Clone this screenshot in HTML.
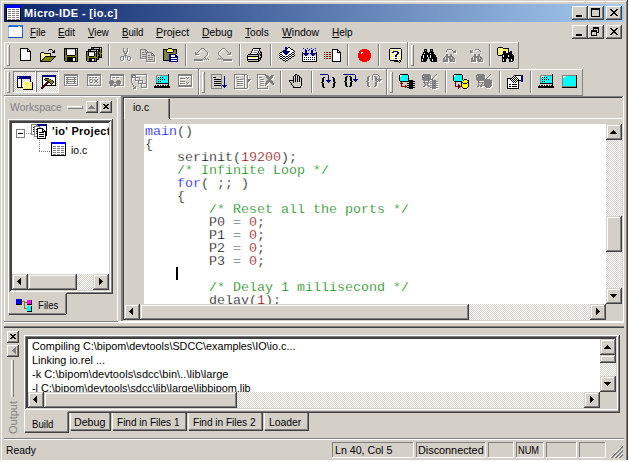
<!DOCTYPE html>
<html><head><meta charset="utf-8"><title>Micro-IDE - [io.c]</title>
<style>
html,body{margin:0;padding:0;background:#fff;}
#w{position:relative;width:629px;height:462px;overflow:hidden;background:#fff;}
#w div,#w span,#w svg,#w pre{position:absolute;margin:0;padding:0;}
.t,.tb{font:11px/13px "Liberation Sans", sans-serif;color:#000;white-space:pre;transform:translateY(-10px);}
.tb{font-weight:bold;}
.m{font:13.33px/13px "Liberation Mono", monospace;color:#000;white-space:pre;transform:translateY(-11px);-webkit-text-stroke:0.25px #fff;}
#w span span, #w pre span, #w span u{position:static;}
</style></head>
<body><div id="w">
<div style="left:0px;top:0px;width:628px;height:460px;background:#d4d0c8;"></div>
<div style="left:1px;top:1px;width:625px;height:1px;background:#ffffff;"></div>
<div style="left:1px;top:1px;width:1px;height:459px;background:#ffffff;"></div>
<div style="left:626px;top:1px;width:1px;height:459px;background:#808080;"></div>
<div style="left:627px;top:0px;width:1px;height:460px;background:#404040;"></div>
<div style="left:4px;top:4px;width:620px;height:18px;background:linear-gradient(90deg,#0a246a,#a6caf0);"></div>
<svg style="left:6px;top:5px" width="16" height="17" viewBox="0 0 16 17" shape-rendering="crispEdges"><rect x="0" y="0" width="15" height="1" fill="#0000ff"/><rect x="0" y="1" width="15" height="1" fill="#0000ff"/><rect x="0" y="2" width="15" height="1" fill="#0000ff"/><rect x="0" y="3" width="1" height="1" fill="#000000"/><rect x="1" y="3" width="13" height="1" fill="#ffffff"/><rect x="14" y="3" width="1" height="1" fill="#000000"/><rect x="0" y="4" width="1" height="1" fill="#000000"/><rect x="1" y="4" width="1" height="1" fill="#ffffff"/><rect x="2" y="4" width="3" height="1" fill="#808080"/><rect x="5" y="4" width="1" height="1" fill="#ffffff"/><rect x="6" y="4" width="3" height="1" fill="#808080"/><rect x="9" y="4" width="1" height="1" fill="#ffffff"/><rect x="10" y="4" width="3" height="1" fill="#808080"/><rect x="13" y="4" width="1" height="1" fill="#ffffff"/><rect x="14" y="4" width="1" height="1" fill="#000000"/><rect x="0" y="5" width="1" height="1" fill="#000000"/><rect x="1" y="5" width="13" height="1" fill="#ffffff"/><rect x="14" y="5" width="1" height="1" fill="#000000"/><rect x="0" y="6" width="1" height="1" fill="#000000"/><rect x="1" y="6" width="1" height="1" fill="#ffffff"/><rect x="2" y="6" width="3" height="1" fill="#808080"/><rect x="5" y="6" width="1" height="1" fill="#ffffff"/><rect x="6" y="6" width="3" height="1" fill="#808080"/><rect x="9" y="6" width="1" height="1" fill="#ffffff"/><rect x="10" y="6" width="3" height="1" fill="#808080"/><rect x="13" y="6" width="1" height="1" fill="#ffffff"/><rect x="14" y="6" width="1" height="1" fill="#000000"/><rect x="0" y="7" width="1" height="1" fill="#000000"/><rect x="1" y="7" width="13" height="1" fill="#ffffff"/><rect x="14" y="7" width="1" height="1" fill="#000000"/><rect x="0" y="8" width="1" height="1" fill="#000000"/><rect x="1" y="8" width="1" height="1" fill="#ffffff"/><rect x="2" y="8" width="3" height="1" fill="#808080"/><rect x="5" y="8" width="1" height="1" fill="#ffffff"/><rect x="6" y="8" width="3" height="1" fill="#808080"/><rect x="9" y="8" width="1" height="1" fill="#ffffff"/><rect x="10" y="8" width="3" height="1" fill="#808080"/><rect x="13" y="8" width="1" height="1" fill="#ffffff"/><rect x="14" y="8" width="1" height="1" fill="#000000"/><rect x="0" y="9" width="1" height="1" fill="#000000"/><rect x="1" y="9" width="13" height="1" fill="#ffffff"/><rect x="14" y="9" width="1" height="1" fill="#000000"/><rect x="0" y="10" width="1" height="1" fill="#000000"/><rect x="1" y="10" width="1" height="1" fill="#ffffff"/><rect x="2" y="10" width="3" height="1" fill="#808080"/><rect x="5" y="10" width="1" height="1" fill="#ffffff"/><rect x="6" y="10" width="3" height="1" fill="#808080"/><rect x="9" y="10" width="1" height="1" fill="#ffffff"/><rect x="10" y="10" width="3" height="1" fill="#808080"/><rect x="13" y="10" width="1" height="1" fill="#ffffff"/><rect x="14" y="10" width="1" height="1" fill="#000000"/><rect x="0" y="11" width="1" height="1" fill="#000000"/><rect x="1" y="11" width="13" height="1" fill="#ffffff"/><rect x="14" y="11" width="1" height="1" fill="#000000"/><rect x="0" y="12" width="1" height="1" fill="#000000"/><rect x="1" y="12" width="1" height="1" fill="#ffffff"/><rect x="2" y="12" width="3" height="1" fill="#808080"/><rect x="5" y="12" width="1" height="1" fill="#ffffff"/><rect x="6" y="12" width="3" height="1" fill="#808080"/><rect x="9" y="12" width="1" height="1" fill="#ffffff"/><rect x="10" y="12" width="3" height="1" fill="#808080"/><rect x="13" y="12" width="1" height="1" fill="#ffffff"/><rect x="14" y="12" width="1" height="1" fill="#000000"/><rect x="0" y="13" width="1" height="1" fill="#000000"/><rect x="1" y="13" width="13" height="1" fill="#ffffff"/><rect x="14" y="13" width="1" height="1" fill="#000000"/><rect x="0" y="14" width="1" height="1" fill="#000000"/><rect x="1" y="14" width="1" height="1" fill="#ffffff"/><rect x="2" y="14" width="3" height="1" fill="#808080"/><rect x="5" y="14" width="1" height="1" fill="#ffffff"/><rect x="6" y="14" width="3" height="1" fill="#808080"/><rect x="9" y="14" width="1" height="1" fill="#ffffff"/><rect x="10" y="14" width="3" height="1" fill="#808080"/><rect x="13" y="14" width="1" height="1" fill="#ffffff"/><rect x="14" y="14" width="1" height="1" fill="#000000"/><rect x="0" y="15" width="15" height="1" fill="#000000"/></svg>
<span class="tb" style="left:24px;top:17px;color:#ffffff;letter-spacing:0.353px;">Micro-IDE - [io.c]</span>
<div style="left:572px;top:6px;width:16px;height:14px;background:#d4d0c8;"></div>
<div style="left:572px;top:6px;width:15px;height:1px;background:#ffffff;"></div>
<div style="left:572px;top:6px;width:1px;height:13px;background:#ffffff;"></div>
<div style="left:572px;top:19px;width:16px;height:1px;background:#404040;"></div>
<div style="left:587px;top:6px;width:1px;height:14px;background:#404040;"></div>
<div style="left:573px;top:7px;width:13px;height:1px;background:#d4d0c8;"></div>
<div style="left:573px;top:7px;width:1px;height:11px;background:#d4d0c8;"></div>
<div style="left:573px;top:18px;width:14px;height:1px;background:#808080;"></div>
<div style="left:586px;top:7px;width:1px;height:12px;background:#808080;"></div>
<div style="left:576px;top:15px;width:6px;height:2px;background:#000000;"></div>
<div style="left:588px;top:6px;width:16px;height:14px;background:#d4d0c8;"></div>
<div style="left:588px;top:6px;width:15px;height:1px;background:#ffffff;"></div>
<div style="left:588px;top:6px;width:1px;height:13px;background:#ffffff;"></div>
<div style="left:588px;top:19px;width:16px;height:1px;background:#404040;"></div>
<div style="left:603px;top:6px;width:1px;height:14px;background:#404040;"></div>
<div style="left:589px;top:7px;width:13px;height:1px;background:#d4d0c8;"></div>
<div style="left:589px;top:7px;width:1px;height:11px;background:#d4d0c8;"></div>
<div style="left:589px;top:18px;width:14px;height:1px;background:#808080;"></div>
<div style="left:602px;top:7px;width:1px;height:12px;background:#808080;"></div>
<div style="left:591px;top:8px;width:9px;height:2px;background:#000000;"></div>
<div style="left:591px;top:10px;width:1px;height:7px;background:#000000;"></div>
<div style="left:599px;top:10px;width:1px;height:7px;background:#000000;"></div>
<div style="left:591px;top:16px;width:9px;height:1px;background:#000000;"></div>
<div style="left:606px;top:6px;width:16px;height:14px;background:#d4d0c8;"></div>
<div style="left:606px;top:6px;width:15px;height:1px;background:#ffffff;"></div>
<div style="left:606px;top:6px;width:1px;height:13px;background:#ffffff;"></div>
<div style="left:606px;top:19px;width:16px;height:1px;background:#404040;"></div>
<div style="left:621px;top:6px;width:1px;height:14px;background:#404040;"></div>
<div style="left:607px;top:7px;width:13px;height:1px;background:#d4d0c8;"></div>
<div style="left:607px;top:7px;width:1px;height:11px;background:#d4d0c8;"></div>
<div style="left:607px;top:18px;width:14px;height:1px;background:#808080;"></div>
<div style="left:620px;top:7px;width:1px;height:12px;background:#808080;"></div>
<div style="left:610px;top:9px;width:2px;height:1px;background:#000000;"></div>
<div style="left:616px;top:9px;width:2px;height:1px;background:#000000;"></div>
<div style="left:611px;top:10px;width:2px;height:1px;background:#000000;"></div>
<div style="left:615px;top:10px;width:2px;height:1px;background:#000000;"></div>
<div style="left:612px;top:11px;width:2px;height:1px;background:#000000;"></div>
<div style="left:614px;top:11px;width:2px;height:1px;background:#000000;"></div>
<div style="left:613px;top:12px;width:2px;height:1px;background:#000000;"></div>
<div style="left:613px;top:12px;width:2px;height:1px;background:#000000;"></div>
<div style="left:614px;top:13px;width:2px;height:1px;background:#000000;"></div>
<div style="left:612px;top:13px;width:2px;height:1px;background:#000000;"></div>
<div style="left:615px;top:14px;width:2px;height:1px;background:#000000;"></div>
<div style="left:611px;top:14px;width:2px;height:1px;background:#000000;"></div>
<div style="left:616px;top:15px;width:2px;height:1px;background:#000000;"></div>
<div style="left:610px;top:15px;width:2px;height:1px;background:#000000;"></div>
<div style="left:572px;top:25px;width:16px;height:14px;background:#d4d0c8;"></div>
<div style="left:572px;top:25px;width:15px;height:1px;background:#ffffff;"></div>
<div style="left:572px;top:25px;width:1px;height:13px;background:#ffffff;"></div>
<div style="left:572px;top:38px;width:16px;height:1px;background:#404040;"></div>
<div style="left:587px;top:25px;width:1px;height:14px;background:#404040;"></div>
<div style="left:573px;top:26px;width:13px;height:1px;background:#d4d0c8;"></div>
<div style="left:573px;top:26px;width:1px;height:11px;background:#d4d0c8;"></div>
<div style="left:573px;top:37px;width:14px;height:1px;background:#808080;"></div>
<div style="left:586px;top:26px;width:1px;height:12px;background:#808080;"></div>
<div style="left:576px;top:34px;width:6px;height:2px;background:#000000;"></div>
<div style="left:588px;top:25px;width:16px;height:14px;background:#d4d0c8;"></div>
<div style="left:588px;top:25px;width:15px;height:1px;background:#ffffff;"></div>
<div style="left:588px;top:25px;width:1px;height:13px;background:#ffffff;"></div>
<div style="left:588px;top:38px;width:16px;height:1px;background:#404040;"></div>
<div style="left:603px;top:25px;width:1px;height:14px;background:#404040;"></div>
<div style="left:589px;top:26px;width:13px;height:1px;background:#d4d0c8;"></div>
<div style="left:589px;top:26px;width:1px;height:11px;background:#d4d0c8;"></div>
<div style="left:589px;top:37px;width:14px;height:1px;background:#808080;"></div>
<div style="left:602px;top:26px;width:1px;height:12px;background:#808080;"></div>
<div style="left:593px;top:27px;width:6px;height:2px;background:#000000;"></div>
<div style="left:598px;top:29px;width:1px;height:4px;background:#000000;"></div>
<div style="left:597px;top:32px;width:2px;height:1px;background:#000000;"></div>
<div style="left:593px;top:29px;width:1px;height:1px;background:#000000;"></div>
<div style="left:591px;top:30px;width:6px;height:2px;background:#000000;"></div>
<div style="left:591px;top:32px;width:1px;height:4px;background:#000000;"></div>
<div style="left:596px;top:32px;width:1px;height:4px;background:#000000;"></div>
<div style="left:591px;top:35px;width:6px;height:1px;background:#000000;"></div>
<div style="left:606px;top:25px;width:16px;height:14px;background:#d4d0c8;"></div>
<div style="left:606px;top:25px;width:15px;height:1px;background:#ffffff;"></div>
<div style="left:606px;top:25px;width:1px;height:13px;background:#ffffff;"></div>
<div style="left:606px;top:38px;width:16px;height:1px;background:#404040;"></div>
<div style="left:621px;top:25px;width:1px;height:14px;background:#404040;"></div>
<div style="left:607px;top:26px;width:13px;height:1px;background:#d4d0c8;"></div>
<div style="left:607px;top:26px;width:1px;height:11px;background:#d4d0c8;"></div>
<div style="left:607px;top:37px;width:14px;height:1px;background:#808080;"></div>
<div style="left:620px;top:26px;width:1px;height:12px;background:#808080;"></div>
<div style="left:610px;top:28px;width:2px;height:1px;background:#000000;"></div>
<div style="left:616px;top:28px;width:2px;height:1px;background:#000000;"></div>
<div style="left:611px;top:29px;width:2px;height:1px;background:#000000;"></div>
<div style="left:615px;top:29px;width:2px;height:1px;background:#000000;"></div>
<div style="left:612px;top:30px;width:2px;height:1px;background:#000000;"></div>
<div style="left:614px;top:30px;width:2px;height:1px;background:#000000;"></div>
<div style="left:613px;top:31px;width:2px;height:1px;background:#000000;"></div>
<div style="left:613px;top:31px;width:2px;height:1px;background:#000000;"></div>
<div style="left:614px;top:32px;width:2px;height:1px;background:#000000;"></div>
<div style="left:612px;top:32px;width:2px;height:1px;background:#000000;"></div>
<div style="left:615px;top:33px;width:2px;height:1px;background:#000000;"></div>
<div style="left:611px;top:33px;width:2px;height:1px;background:#000000;"></div>
<div style="left:616px;top:34px;width:2px;height:1px;background:#000000;"></div>
<div style="left:610px;top:34px;width:2px;height:1px;background:#000000;"></div>
<svg style="left:8px;top:25px" width="16" height="14" viewBox="0 0 16 14" shape-rendering="crispEdges"><rect x="0" y="0" width="1" height="1" fill="#9dbdf2"/><rect x="1" y="0" width="13" height="1" fill="#3a7ce0"/><rect x="14" y="0" width="1" height="1" fill="#1c5fd8"/><rect x="0" y="1" width="10" height="1" fill="#1c5fd8"/><rect x="10" y="1" width="1" height="1" fill="#9dbdf2"/><rect x="11" y="1" width="1" height="1" fill="#ffffff"/><rect x="12" y="1" width="1" height="1" fill="#1c5fd8"/><rect x="13" y="1" width="1" height="1" fill="#f06030"/><rect x="14" y="1" width="1" height="1" fill="#1c5fd8"/><rect x="0" y="2" width="1" height="1" fill="#9dbdf2"/><rect x="1" y="2" width="13" height="1" fill="#ffffff"/><rect x="14" y="2" width="1" height="1" fill="#1c5fd8"/><rect x="0" y="3" width="1" height="1" fill="#9dbdf2"/><rect x="1" y="3" width="13" height="1" fill="#ffffff"/><rect x="14" y="3" width="1" height="1" fill="#1c5fd8"/><rect x="0" y="4" width="1" height="1" fill="#9dbdf2"/><rect x="1" y="4" width="13" height="1" fill="#ffffff"/><rect x="14" y="4" width="1" height="1" fill="#1c5fd8"/><rect x="0" y="5" width="1" height="1" fill="#9dbdf2"/><rect x="1" y="5" width="13" height="1" fill="#ffffff"/><rect x="14" y="5" width="1" height="1" fill="#1c5fd8"/><rect x="0" y="6" width="1" height="1" fill="#9dbdf2"/><rect x="1" y="6" width="13" height="1" fill="#ffffff"/><rect x="14" y="6" width="1" height="1" fill="#1c5fd8"/><rect x="0" y="7" width="1" height="1" fill="#9dbdf2"/><rect x="1" y="7" width="13" height="1" fill="#ffffff"/><rect x="14" y="7" width="1" height="1" fill="#1c5fd8"/><rect x="0" y="8" width="1" height="1" fill="#9dbdf2"/><rect x="1" y="8" width="13" height="1" fill="#ffffff"/><rect x="14" y="8" width="1" height="1" fill="#1c5fd8"/><rect x="0" y="9" width="1" height="1" fill="#9dbdf2"/><rect x="1" y="9" width="13" height="1" fill="#ffffff"/><rect x="14" y="9" width="1" height="1" fill="#2050b0"/><rect x="0" y="10" width="1" height="1" fill="#9dbdf2"/><rect x="1" y="10" width="13" height="1" fill="#ffffff"/><rect x="14" y="10" width="1" height="1" fill="#2050b0"/><rect x="0" y="11" width="1" height="1" fill="#9dbdf2"/><rect x="1" y="11" width="13" height="1" fill="#ffffff"/><rect x="14" y="11" width="1" height="1" fill="#2050b0"/><rect x="0" y="12" width="15" height="1" fill="#2050b0"/></svg>
<span class="t" style="left:30.0px;top:36px;transform:translateY(-10px) scaleX(0.8889);transform-origin:0 0;"><u>F</u>ile</span>
<span class="t" style="left:58.0px;top:36px;transform:translateY(-10px) scaleX(0.8947);transform-origin:0 0;"><u>E</u>dit</span>
<span class="t" style="left:88.0px;top:36px;transform:translateY(-10px) scaleX(0.875);transform-origin:0 0;"><u>V</u>iew</span>
<span class="t" style="left:122.0px;top:36px;transform:translateY(-10px) scaleX(0.875);transform-origin:0 0;"><u>B</u>uild</span>
<span class="t" style="left:156.0px;top:36px;transform:translateY(-10px) scaleX(0.9706);transform-origin:0 0;"><u>P</u>roject</span>
<span class="t" style="left:202.0px;top:36px;transform:translateY(-10px) scaleX(0.9375);transform-origin:0 0;"><u>D</u>ebug</span>
<span class="t" style="left:245.0px;top:36px;transform:translateY(-10px) scaleX(0.9231);transform-origin:0 0;"><u>T</u>ools</span>
<span class="t" style="left:282.0px;top:36px;transform:translateY(-10px) scaleX(0.9487);transform-origin:0 0;"><u>W</u>indow</span>
<span class="t" style="left:332.0px;top:36px;transform:translateY(-10px) scaleX(0.913);transform-origin:0 0;"><u>H</u>elp</span>
<div style="left:4px;top:42px;width:404px;height:1px;background:#ffffff;"></div>
<div style="left:4px;top:42px;width:1px;height:27px;background:#ffffff;"></div>
<div style="left:4px;top:68px;width:404px;height:1px;background:#808080;"></div>
<div style="left:407px;top:42px;width:1px;height:27px;background:#808080;"></div>
<div style="left:7px;top:45px;width:1px;height:21px;background:#ffffff;"></div>
<div style="left:7px;top:45px;width:2px;height:1px;background:#ffffff;"></div>
<div style="left:9px;top:45px;width:1px;height:21px;background:#808080;"></div>
<div style="left:7px;top:65px;width:3px;height:1px;background:#808080;"></div>
<svg style="left:20px;top:48px" width="12" height="14" viewBox="0 0 12 14" shape-rendering="crispEdges"><rect x="0" y="0" width="8" height="1" fill="#000000"/><rect x="0" y="1" width="1" height="1" fill="#000000"/><rect x="1" y="1" width="6" height="1" fill="#ffffff"/><rect x="7" y="1" width="2" height="1" fill="#000000"/><rect x="0" y="2" width="1" height="1" fill="#000000"/><rect x="1" y="2" width="6" height="1" fill="#ffffff"/><rect x="7" y="2" width="1" height="1" fill="#000000"/><rect x="8" y="2" width="1" height="1" fill="#ffffff"/><rect x="9" y="2" width="1" height="1" fill="#000000"/><rect x="0" y="3" width="1" height="1" fill="#000000"/><rect x="1" y="3" width="6" height="1" fill="#ffffff"/><rect x="7" y="3" width="4" height="1" fill="#000000"/><rect x="0" y="4" width="1" height="1" fill="#000000"/><rect x="1" y="4" width="9" height="1" fill="#ffffff"/><rect x="10" y="4" width="1" height="1" fill="#000000"/><rect x="0" y="5" width="1" height="1" fill="#000000"/><rect x="1" y="5" width="9" height="1" fill="#ffffff"/><rect x="10" y="5" width="1" height="1" fill="#000000"/><rect x="0" y="6" width="1" height="1" fill="#000000"/><rect x="1" y="6" width="9" height="1" fill="#ffffff"/><rect x="10" y="6" width="1" height="1" fill="#000000"/><rect x="0" y="7" width="1" height="1" fill="#000000"/><rect x="1" y="7" width="9" height="1" fill="#ffffff"/><rect x="10" y="7" width="1" height="1" fill="#000000"/><rect x="0" y="8" width="1" height="1" fill="#000000"/><rect x="1" y="8" width="9" height="1" fill="#ffffff"/><rect x="10" y="8" width="1" height="1" fill="#000000"/><rect x="0" y="9" width="1" height="1" fill="#000000"/><rect x="1" y="9" width="9" height="1" fill="#ffffff"/><rect x="10" y="9" width="1" height="1" fill="#000000"/><rect x="0" y="10" width="1" height="1" fill="#000000"/><rect x="1" y="10" width="9" height="1" fill="#ffffff"/><rect x="10" y="10" width="1" height="1" fill="#000000"/><rect x="0" y="11" width="1" height="1" fill="#000000"/><rect x="1" y="11" width="9" height="1" fill="#ffffff"/><rect x="10" y="11" width="1" height="1" fill="#000000"/><rect x="0" y="12" width="11" height="1" fill="#000000"/></svg>
<svg style="left:40px;top:49px" width="17" height="14" viewBox="0 0 17 14" shape-rendering="crispEdges"><rect x="9" y="0" width="3" height="1" fill="#000000"/><rect x="8" y="1" width="1" height="1" fill="#000000"/><rect x="12" y="1" width="1" height="1" fill="#000000"/><rect x="14" y="1" width="1" height="1" fill="#000000"/><rect x="13" y="2" width="2" height="1" fill="#000000"/><rect x="1" y="3" width="3" height="1" fill="#000000"/><rect x="12" y="3" width="3" height="1" fill="#000000"/><rect x="0" y="4" width="1" height="1" fill="#000000"/><rect x="1" y="4" width="1" height="1" fill="#ffffff"/><rect x="2" y="4" width="1" height="1" fill="#ffff00"/><rect x="3" y="4" width="1" height="1" fill="#ffffff"/><rect x="4" y="4" width="7" height="1" fill="#000000"/><rect x="0" y="5" width="1" height="1" fill="#000000"/><rect x="1" y="5" width="1" height="1" fill="#ffff00"/><rect x="2" y="5" width="1" height="1" fill="#ffffff"/><rect x="3" y="5" width="1" height="1" fill="#ffff00"/><rect x="4" y="5" width="1" height="1" fill="#ffffff"/><rect x="5" y="5" width="1" height="1" fill="#ffff00"/><rect x="6" y="5" width="1" height="1" fill="#ffffff"/><rect x="7" y="5" width="1" height="1" fill="#ffff00"/><rect x="8" y="5" width="1" height="1" fill="#ffffff"/><rect x="9" y="5" width="1" height="1" fill="#ffff00"/><rect x="10" y="5" width="1" height="1" fill="#000000"/><rect x="0" y="6" width="1" height="1" fill="#000000"/><rect x="1" y="6" width="1" height="1" fill="#ffffff"/><rect x="2" y="6" width="1" height="1" fill="#ffff00"/><rect x="3" y="6" width="1" height="1" fill="#ffffff"/><rect x="4" y="6" width="1" height="1" fill="#ffff00"/><rect x="5" y="6" width="1" height="1" fill="#ffffff"/><rect x="6" y="6" width="1" height="1" fill="#ffff00"/><rect x="7" y="6" width="1" height="1" fill="#ffffff"/><rect x="8" y="6" width="1" height="1" fill="#ffff00"/><rect x="9" y="6" width="1" height="1" fill="#ffffff"/><rect x="10" y="6" width="1" height="1" fill="#000000"/><rect x="0" y="7" width="1" height="1" fill="#000000"/><rect x="1" y="7" width="1" height="1" fill="#ffff00"/><rect x="2" y="7" width="1" height="1" fill="#ffffff"/><rect x="3" y="7" width="1" height="1" fill="#ffff00"/><rect x="4" y="7" width="1" height="1" fill="#ffffff"/><rect x="5" y="7" width="11" height="1" fill="#000000"/><rect x="0" y="8" width="1" height="1" fill="#000000"/><rect x="1" y="8" width="1" height="1" fill="#ffffff"/><rect x="2" y="8" width="1" height="1" fill="#ffff00"/><rect x="3" y="8" width="1" height="1" fill="#ffffff"/><rect x="4" y="8" width="1" height="1" fill="#000000"/><rect x="5" y="8" width="9" height="1" fill="#808000"/><rect x="14" y="8" width="1" height="1" fill="#000000"/><rect x="0" y="9" width="1" height="1" fill="#000000"/><rect x="1" y="9" width="1" height="1" fill="#ffff00"/><rect x="2" y="9" width="1" height="1" fill="#ffffff"/><rect x="3" y="9" width="1" height="1" fill="#000000"/><rect x="4" y="9" width="9" height="1" fill="#808000"/><rect x="13" y="9" width="1" height="1" fill="#000000"/><rect x="0" y="10" width="1" height="1" fill="#000000"/><rect x="1" y="10" width="1" height="1" fill="#ffffff"/><rect x="2" y="10" width="1" height="1" fill="#000000"/><rect x="3" y="10" width="9" height="1" fill="#808000"/><rect x="12" y="10" width="1" height="1" fill="#000000"/><rect x="0" y="11" width="2" height="1" fill="#000000"/><rect x="2" y="11" width="9" height="1" fill="#808000"/><rect x="11" y="11" width="1" height="1" fill="#000000"/><rect x="0" y="12" width="11" height="1" fill="#000000"/></svg>
<svg style="left:64px;top:48px" width="15" height="15" viewBox="0 0 15 15" shape-rendering="crispEdges"><rect x="0" y="0" width="14" height="1" fill="#000000"/><rect x="0" y="1" width="1" height="1" fill="#000000"/><rect x="1" y="1" width="1" height="1" fill="#808000"/><rect x="2" y="1" width="1" height="1" fill="#000000"/><rect x="3" y="1" width="8" height="1" fill="#c0c0c0"/><rect x="11" y="1" width="1" height="1" fill="#000000"/><rect x="12" y="1" width="1" height="1" fill="#ffffff"/><rect x="13" y="1" width="1" height="1" fill="#000000"/><rect x="0" y="2" width="1" height="1" fill="#000000"/><rect x="1" y="2" width="1" height="1" fill="#808000"/><rect x="2" y="2" width="1" height="1" fill="#000000"/><rect x="3" y="2" width="8" height="1" fill="#ffffff"/><rect x="11" y="2" width="1" height="1" fill="#000000"/><rect x="12" y="2" width="1" height="1" fill="#808000"/><rect x="13" y="2" width="1" height="1" fill="#000000"/><rect x="0" y="3" width="1" height="1" fill="#000000"/><rect x="1" y="3" width="1" height="1" fill="#808000"/><rect x="2" y="3" width="1" height="1" fill="#000000"/><rect x="3" y="3" width="8" height="1" fill="#ffffff"/><rect x="11" y="3" width="1" height="1" fill="#000000"/><rect x="12" y="3" width="1" height="1" fill="#808000"/><rect x="13" y="3" width="1" height="1" fill="#000000"/><rect x="0" y="4" width="1" height="1" fill="#000000"/><rect x="1" y="4" width="1" height="1" fill="#808000"/><rect x="2" y="4" width="1" height="1" fill="#000000"/><rect x="3" y="4" width="8" height="1" fill="#ffffff"/><rect x="11" y="4" width="1" height="1" fill="#000000"/><rect x="12" y="4" width="1" height="1" fill="#808000"/><rect x="13" y="4" width="1" height="1" fill="#000000"/><rect x="0" y="5" width="1" height="1" fill="#000000"/><rect x="1" y="5" width="1" height="1" fill="#808000"/><rect x="2" y="5" width="1" height="1" fill="#000000"/><rect x="3" y="5" width="8" height="1" fill="#ffffff"/><rect x="11" y="5" width="1" height="1" fill="#000000"/><rect x="12" y="5" width="1" height="1" fill="#808000"/><rect x="13" y="5" width="1" height="1" fill="#000000"/><rect x="0" y="6" width="1" height="1" fill="#000000"/><rect x="1" y="6" width="1" height="1" fill="#808000"/><rect x="2" y="6" width="1" height="1" fill="#000000"/><rect x="3" y="6" width="8" height="1" fill="#ffffff"/><rect x="11" y="6" width="1" height="1" fill="#000000"/><rect x="12" y="6" width="1" height="1" fill="#808000"/><rect x="13" y="6" width="1" height="1" fill="#000000"/><rect x="0" y="7" width="1" height="1" fill="#000000"/><rect x="1" y="7" width="2" height="1" fill="#808000"/><rect x="3" y="7" width="8" height="1" fill="#000000"/><rect x="11" y="7" width="2" height="1" fill="#808000"/><rect x="13" y="7" width="1" height="1" fill="#000000"/><rect x="0" y="8" width="1" height="1" fill="#000000"/><rect x="1" y="8" width="12" height="1" fill="#808000"/><rect x="13" y="8" width="1" height="1" fill="#000000"/><rect x="0" y="9" width="1" height="1" fill="#000000"/><rect x="1" y="9" width="2" height="1" fill="#808000"/><rect x="3" y="9" width="9" height="1" fill="#000000"/><rect x="12" y="9" width="1" height="1" fill="#808000"/><rect x="13" y="9" width="1" height="1" fill="#000000"/><rect x="0" y="10" width="1" height="1" fill="#000000"/><rect x="1" y="10" width="2" height="1" fill="#808000"/><rect x="3" y="10" width="6" height="1" fill="#000000"/><rect x="9" y="10" width="2" height="1" fill="#ffffff"/><rect x="11" y="10" width="1" height="1" fill="#000000"/><rect x="12" y="10" width="1" height="1" fill="#808000"/><rect x="13" y="10" width="1" height="1" fill="#000000"/><rect x="0" y="11" width="1" height="1" fill="#000000"/><rect x="1" y="11" width="2" height="1" fill="#808000"/><rect x="3" y="11" width="6" height="1" fill="#000000"/><rect x="9" y="11" width="2" height="1" fill="#ffffff"/><rect x="11" y="11" width="1" height="1" fill="#000000"/><rect x="12" y="11" width="1" height="1" fill="#808000"/><rect x="13" y="11" width="1" height="1" fill="#000000"/><rect x="0" y="12" width="1" height="1" fill="#000000"/><rect x="1" y="12" width="2" height="1" fill="#808000"/><rect x="3" y="12" width="6" height="1" fill="#000000"/><rect x="9" y="12" width="2" height="1" fill="#ffffff"/><rect x="11" y="12" width="1" height="1" fill="#000000"/><rect x="12" y="12" width="1" height="1" fill="#808000"/><rect x="13" y="12" width="1" height="1" fill="#000000"/><rect x="1" y="13" width="13" height="1" fill="#000000"/></svg>
<svg style="left:86px;top:47px" width="17" height="16" viewBox="0 0 17 16" shape-rendering="crispEdges"><rect x="5" y="0" width="11" height="1" fill="#000000"/><rect x="5" y="1" width="1" height="1" fill="#000000"/><rect x="6" y="1" width="1" height="1" fill="#808000"/><rect x="7" y="1" width="1" height="1" fill="#000000"/><rect x="8" y="1" width="5" height="1" fill="#c0c0c0"/><rect x="13" y="1" width="1" height="1" fill="#000000"/><rect x="14" y="1" width="1" height="1" fill="#ffffff"/><rect x="15" y="1" width="1" height="1" fill="#000000"/><rect x="2" y="2" width="12" height="1" fill="#000000"/><rect x="14" y="2" width="1" height="1" fill="#808000"/><rect x="15" y="2" width="1" height="1" fill="#000000"/><rect x="2" y="3" width="1" height="1" fill="#000000"/><rect x="3" y="3" width="1" height="1" fill="#808000"/><rect x="4" y="3" width="1" height="1" fill="#000000"/><rect x="5" y="3" width="5" height="1" fill="#c0c0c0"/><rect x="10" y="3" width="1" height="1" fill="#000000"/><rect x="11" y="3" width="1" height="1" fill="#ffffff"/><rect x="12" y="3" width="2" height="1" fill="#000000"/><rect x="14" y="3" width="1" height="1" fill="#808000"/><rect x="15" y="3" width="1" height="1" fill="#000000"/><rect x="0" y="4" width="11" height="1" fill="#000000"/><rect x="11" y="4" width="1" height="1" fill="#808000"/><rect x="12" y="4" width="2" height="1" fill="#000000"/><rect x="14" y="4" width="1" height="1" fill="#808000"/><rect x="15" y="4" width="1" height="1" fill="#000000"/><rect x="0" y="5" width="1" height="1" fill="#000000"/><rect x="1" y="5" width="1" height="1" fill="#808000"/><rect x="2" y="5" width="1" height="1" fill="#000000"/><rect x="3" y="5" width="5" height="1" fill="#c0c0c0"/><rect x="8" y="5" width="1" height="1" fill="#000000"/><rect x="9" y="5" width="1" height="1" fill="#ffffff"/><rect x="10" y="5" width="1" height="1" fill="#000000"/><rect x="11" y="5" width="1" height="1" fill="#808000"/><rect x="12" y="5" width="1" height="1" fill="#000000"/><rect x="13" y="5" width="2" height="1" fill="#808000"/><rect x="15" y="5" width="1" height="1" fill="#000000"/><rect x="0" y="6" width="1" height="1" fill="#000000"/><rect x="1" y="6" width="1" height="1" fill="#808000"/><rect x="2" y="6" width="1" height="1" fill="#000000"/><rect x="3" y="6" width="5" height="1" fill="#ffffff"/><rect x="8" y="6" width="1" height="1" fill="#000000"/><rect x="9" y="6" width="1" height="1" fill="#808000"/><rect x="10" y="6" width="1" height="1" fill="#000000"/><rect x="11" y="6" width="1" height="1" fill="#808000"/><rect x="12" y="6" width="1" height="1" fill="#000000"/><rect x="13" y="6" width="3" height="1" fill="#808000"/><rect x="0" y="7" width="1" height="1" fill="#000000"/><rect x="1" y="7" width="1" height="1" fill="#808000"/><rect x="2" y="7" width="1" height="1" fill="#000000"/><rect x="3" y="7" width="5" height="1" fill="#ffffff"/><rect x="8" y="7" width="1" height="1" fill="#000000"/><rect x="9" y="7" width="1" height="1" fill="#808000"/><rect x="10" y="7" width="1" height="1" fill="#000000"/><rect x="11" y="7" width="1" height="1" fill="#808000"/><rect x="12" y="7" width="2" height="1" fill="#000000"/><rect x="14" y="7" width="1" height="1" fill="#808000"/><rect x="15" y="7" width="1" height="1" fill="#000000"/><rect x="0" y="8" width="1" height="1" fill="#000000"/><rect x="1" y="8" width="1" height="1" fill="#808000"/><rect x="2" y="8" width="1" height="1" fill="#000000"/><rect x="3" y="8" width="5" height="1" fill="#ffffff"/><rect x="8" y="8" width="1" height="1" fill="#000000"/><rect x="9" y="8" width="1" height="1" fill="#808000"/><rect x="10" y="8" width="1" height="1" fill="#000000"/><rect x="11" y="8" width="2" height="1" fill="#808000"/><rect x="13" y="8" width="1" height="1" fill="#000000"/><rect x="14" y="8" width="1" height="1" fill="#808000"/><rect x="15" y="8" width="1" height="1" fill="#000000"/><rect x="0" y="9" width="1" height="1" fill="#000000"/><rect x="1" y="9" width="2" height="1" fill="#808000"/><rect x="3" y="9" width="5" height="1" fill="#000000"/><rect x="8" y="9" width="2" height="1" fill="#808000"/><rect x="10" y="9" width="1" height="1" fill="#000000"/><rect x="11" y="9" width="1" height="1" fill="#808000"/><rect x="12" y="9" width="2" height="1" fill="#000000"/><rect x="14" y="9" width="1" height="1" fill="#808000"/><rect x="15" y="9" width="1" height="1" fill="#000000"/><rect x="0" y="10" width="1" height="1" fill="#000000"/><rect x="1" y="10" width="11" height="1" fill="#808000"/><rect x="12" y="10" width="4" height="1" fill="#000000"/><rect x="0" y="11" width="1" height="1" fill="#000000"/><rect x="1" y="11" width="2" height="1" fill="#808000"/><rect x="3" y="11" width="6" height="1" fill="#000000"/><rect x="9" y="11" width="1" height="1" fill="#808000"/><rect x="10" y="11" width="1" height="1" fill="#000000"/><rect x="11" y="11" width="1" height="1" fill="#808000"/><rect x="12" y="11" width="1" height="1" fill="#000000"/><rect x="0" y="12" width="1" height="1" fill="#000000"/><rect x="1" y="12" width="2" height="1" fill="#808000"/><rect x="3" y="12" width="3" height="1" fill="#000000"/><rect x="6" y="12" width="2" height="1" fill="#ffffff"/><rect x="8" y="12" width="1" height="1" fill="#000000"/><rect x="9" y="12" width="1" height="1" fill="#808000"/><rect x="10" y="12" width="3" height="1" fill="#000000"/><rect x="0" y="13" width="1" height="1" fill="#000000"/><rect x="1" y="13" width="2" height="1" fill="#808000"/><rect x="3" y="13" width="3" height="1" fill="#000000"/><rect x="6" y="13" width="2" height="1" fill="#ffffff"/><rect x="8" y="13" width="1" height="1" fill="#000000"/><rect x="9" y="13" width="1" height="1" fill="#808000"/><rect x="10" y="13" width="1" height="1" fill="#000000"/><rect x="1" y="14" width="10" height="1" fill="#000000"/></svg>
<div style="left:108px;top:44px;width:1px;height:22px;background:#808080;"></div>
<div style="left:109px;top:44px;width:1px;height:22px;background:#ffffff;"></div>
<svg style="left:120px;top:48px" width="12" height="14" viewBox="0 0 12 14" shape-rendering="crispEdges"><rect x="4" y="1" width="1" height="1" fill="#ffffff"/><rect x="8" y="1" width="1" height="1" fill="#ffffff"/><rect x="4" y="2" width="1" height="1" fill="#ffffff"/><rect x="8" y="2" width="1" height="1" fill="#ffffff"/><rect x="4" y="3" width="1" height="1" fill="#ffffff"/><rect x="8" y="3" width="1" height="1" fill="#ffffff"/><rect x="4" y="4" width="2" height="1" fill="#ffffff"/><rect x="7" y="4" width="2" height="1" fill="#ffffff"/><rect x="5" y="5" width="1" height="1" fill="#ffffff"/><rect x="7" y="5" width="1" height="1" fill="#ffffff"/><rect x="5" y="6" width="3" height="1" fill="#ffffff"/><rect x="6" y="7" width="1" height="1" fill="#ffffff"/><rect x="5" y="8" width="3" height="1" fill="#ffffff"/><rect x="2" y="9" width="3" height="1" fill="#ffffff"/><rect x="6" y="9" width="1" height="1" fill="#ffffff"/><rect x="8" y="9" width="3" height="1" fill="#ffffff"/><rect x="1" y="10" width="1" height="1" fill="#ffffff"/><rect x="4" y="10" width="1" height="1" fill="#ffffff"/><rect x="6" y="10" width="1" height="1" fill="#ffffff"/><rect x="8" y="10" width="1" height="1" fill="#ffffff"/><rect x="11" y="10" width="1" height="1" fill="#ffffff"/><rect x="1" y="11" width="1" height="1" fill="#ffffff"/><rect x="4" y="11" width="1" height="1" fill="#ffffff"/><rect x="8" y="11" width="1" height="1" fill="#ffffff"/><rect x="11" y="11" width="1" height="1" fill="#ffffff"/><rect x="1" y="12" width="1" height="1" fill="#ffffff"/><rect x="4" y="12" width="1" height="1" fill="#ffffff"/><rect x="8" y="12" width="1" height="1" fill="#ffffff"/><rect x="11" y="12" width="1" height="1" fill="#ffffff"/><rect x="2" y="13" width="2" height="1" fill="#ffffff"/><rect x="9" y="13" width="2" height="1" fill="#ffffff"/><rect x="3" y="0" width="1" height="1" fill="#808080"/><rect x="7" y="0" width="1" height="1" fill="#808080"/><rect x="3" y="1" width="1" height="1" fill="#808080"/><rect x="7" y="1" width="1" height="1" fill="#808080"/><rect x="3" y="2" width="1" height="1" fill="#808080"/><rect x="7" y="2" width="1" height="1" fill="#808080"/><rect x="3" y="3" width="2" height="1" fill="#808080"/><rect x="6" y="3" width="2" height="1" fill="#808080"/><rect x="4" y="4" width="1" height="1" fill="#808080"/><rect x="6" y="4" width="1" height="1" fill="#808080"/><rect x="4" y="5" width="3" height="1" fill="#808080"/><rect x="5" y="6" width="1" height="1" fill="#808080"/><rect x="4" y="7" width="3" height="1" fill="#808080"/><rect x="1" y="8" width="3" height="1" fill="#808080"/><rect x="5" y="8" width="1" height="1" fill="#808080"/><rect x="7" y="8" width="3" height="1" fill="#808080"/><rect x="0" y="9" width="1" height="1" fill="#808080"/><rect x="3" y="9" width="1" height="1" fill="#808080"/><rect x="5" y="9" width="1" height="1" fill="#808080"/><rect x="7" y="9" width="1" height="1" fill="#808080"/><rect x="10" y="9" width="1" height="1" fill="#808080"/><rect x="0" y="10" width="1" height="1" fill="#808080"/><rect x="3" y="10" width="1" height="1" fill="#808080"/><rect x="7" y="10" width="1" height="1" fill="#808080"/><rect x="10" y="10" width="1" height="1" fill="#808080"/><rect x="0" y="11" width="1" height="1" fill="#808080"/><rect x="3" y="11" width="1" height="1" fill="#808080"/><rect x="7" y="11" width="1" height="1" fill="#808080"/><rect x="10" y="11" width="1" height="1" fill="#808080"/><rect x="1" y="12" width="2" height="1" fill="#808080"/><rect x="8" y="12" width="2" height="1" fill="#808080"/></svg>
<svg style="left:140px;top:49px" width="16" height="14" viewBox="0 0 16 14" shape-rendering="crispEdges"><rect x="1" y="1" width="6" height="1" fill="#ffffff"/><rect x="1" y="2" width="1" height="1" fill="#ffffff"/><rect x="6" y="2" width="2" height="1" fill="#ffffff"/><rect x="1" y="3" width="1" height="1" fill="#ffffff"/><rect x="6" y="3" width="1" height="1" fill="#ffffff"/><rect x="8" y="3" width="1" height="1" fill="#ffffff"/><rect x="1" y="4" width="1" height="1" fill="#ffffff"/><rect x="3" y="4" width="2" height="1" fill="#ffffff"/><rect x="6" y="4" width="7" height="1" fill="#ffffff"/><rect x="1" y="5" width="1" height="1" fill="#ffffff"/><rect x="7" y="5" width="1" height="1" fill="#ffffff"/><rect x="12" y="5" width="2" height="1" fill="#ffffff"/><rect x="1" y="6" width="1" height="1" fill="#ffffff"/><rect x="3" y="6" width="5" height="1" fill="#ffffff"/><rect x="12" y="6" width="1" height="1" fill="#ffffff"/><rect x="14" y="6" width="1" height="1" fill="#ffffff"/><rect x="1" y="7" width="1" height="1" fill="#ffffff"/><rect x="7" y="7" width="1" height="1" fill="#ffffff"/><rect x="9" y="7" width="2" height="1" fill="#ffffff"/><rect x="12" y="7" width="4" height="1" fill="#ffffff"/><rect x="1" y="8" width="1" height="1" fill="#ffffff"/><rect x="3" y="8" width="5" height="1" fill="#ffffff"/><rect x="15" y="8" width="1" height="1" fill="#ffffff"/><rect x="1" y="9" width="1" height="1" fill="#ffffff"/><rect x="7" y="9" width="1" height="1" fill="#ffffff"/><rect x="9" y="9" width="5" height="1" fill="#ffffff"/><rect x="15" y="9" width="1" height="1" fill="#ffffff"/><rect x="1" y="10" width="7" height="1" fill="#ffffff"/><rect x="15" y="10" width="1" height="1" fill="#ffffff"/><rect x="7" y="11" width="1" height="1" fill="#ffffff"/><rect x="9" y="11" width="5" height="1" fill="#ffffff"/><rect x="15" y="11" width="1" height="1" fill="#ffffff"/><rect x="7" y="12" width="1" height="1" fill="#ffffff"/><rect x="15" y="12" width="1" height="1" fill="#ffffff"/><rect x="7" y="13" width="9" height="1" fill="#ffffff"/><rect x="0" y="0" width="6" height="1" fill="#808080"/><rect x="0" y="1" width="1" height="1" fill="#808080"/><rect x="1" y="1" width="4" height="1" fill="#d4d0c8"/><rect x="5" y="1" width="2" height="1" fill="#808080"/><rect x="0" y="2" width="1" height="1" fill="#808080"/><rect x="1" y="2" width="4" height="1" fill="#d4d0c8"/><rect x="5" y="2" width="1" height="1" fill="#808080"/><rect x="6" y="2" width="1" height="1" fill="#d4d0c8"/><rect x="7" y="2" width="1" height="1" fill="#808080"/><rect x="0" y="3" width="1" height="1" fill="#808080"/><rect x="1" y="3" width="1" height="1" fill="#d4d0c8"/><rect x="2" y="3" width="2" height="1" fill="#808080"/><rect x="4" y="3" width="1" height="1" fill="#d4d0c8"/><rect x="5" y="3" width="7" height="1" fill="#808080"/><rect x="0" y="4" width="1" height="1" fill="#808080"/><rect x="1" y="4" width="5" height="1" fill="#d4d0c8"/><rect x="6" y="4" width="1" height="1" fill="#808080"/><rect x="7" y="4" width="4" height="1" fill="#d4d0c8"/><rect x="11" y="4" width="2" height="1" fill="#808080"/><rect x="0" y="5" width="1" height="1" fill="#808080"/><rect x="1" y="5" width="1" height="1" fill="#d4d0c8"/><rect x="2" y="5" width="5" height="1" fill="#808080"/><rect x="7" y="5" width="4" height="1" fill="#d4d0c8"/><rect x="11" y="5" width="1" height="1" fill="#808080"/><rect x="12" y="5" width="1" height="1" fill="#d4d0c8"/><rect x="13" y="5" width="1" height="1" fill="#808080"/><rect x="0" y="6" width="1" height="1" fill="#808080"/><rect x="1" y="6" width="5" height="1" fill="#d4d0c8"/><rect x="6" y="6" width="1" height="1" fill="#808080"/><rect x="7" y="6" width="1" height="1" fill="#d4d0c8"/><rect x="8" y="6" width="2" height="1" fill="#808080"/><rect x="10" y="6" width="1" height="1" fill="#d4d0c8"/><rect x="11" y="6" width="4" height="1" fill="#808080"/><rect x="0" y="7" width="1" height="1" fill="#808080"/><rect x="1" y="7" width="1" height="1" fill="#d4d0c8"/><rect x="2" y="7" width="5" height="1" fill="#808080"/><rect x="7" y="7" width="7" height="1" fill="#d4d0c8"/><rect x="14" y="7" width="1" height="1" fill="#808080"/><rect x="0" y="8" width="1" height="1" fill="#808080"/><rect x="1" y="8" width="5" height="1" fill="#d4d0c8"/><rect x="6" y="8" width="1" height="1" fill="#808080"/><rect x="7" y="8" width="1" height="1" fill="#d4d0c8"/><rect x="8" y="8" width="5" height="1" fill="#808080"/><rect x="13" y="8" width="1" height="1" fill="#d4d0c8"/><rect x="14" y="8" width="1" height="1" fill="#808080"/><rect x="0" y="9" width="7" height="1" fill="#808080"/><rect x="7" y="9" width="7" height="1" fill="#d4d0c8"/><rect x="14" y="9" width="1" height="1" fill="#808080"/><rect x="6" y="10" width="1" height="1" fill="#808080"/><rect x="7" y="10" width="1" height="1" fill="#d4d0c8"/><rect x="8" y="10" width="5" height="1" fill="#808080"/><rect x="13" y="10" width="1" height="1" fill="#d4d0c8"/><rect x="14" y="10" width="1" height="1" fill="#808080"/><rect x="6" y="11" width="1" height="1" fill="#808080"/><rect x="7" y="11" width="7" height="1" fill="#d4d0c8"/><rect x="14" y="11" width="1" height="1" fill="#808080"/><rect x="6" y="12" width="9" height="1" fill="#808080"/></svg>
<svg style="left:163px;top:48px" width="16" height="15" viewBox="0 0 16 15" shape-rendering="crispEdges"><rect x="5" y="0" width="4" height="1" fill="#000000"/><rect x="0" y="1" width="5" height="1" fill="#000000"/><rect x="5" y="1" width="4" height="1" fill="#ffff00"/><rect x="9" y="1" width="5" height="1" fill="#000000"/><rect x="0" y="2" width="1" height="1" fill="#000000"/><rect x="1" y="2" width="1" height="1" fill="#808000"/><rect x="2" y="2" width="1" height="1" fill="#808080"/><rect x="3" y="2" width="1" height="1" fill="#000000"/><rect x="4" y="2" width="6" height="1" fill="#ffff00"/><rect x="10" y="2" width="1" height="1" fill="#000000"/><rect x="11" y="2" width="1" height="1" fill="#808080"/><rect x="12" y="2" width="1" height="1" fill="#808000"/><rect x="13" y="2" width="1" height="1" fill="#000000"/><rect x="0" y="3" width="1" height="1" fill="#000000"/><rect x="1" y="3" width="1" height="1" fill="#808080"/><rect x="2" y="3" width="1" height="1" fill="#808000"/><rect x="3" y="3" width="1" height="1" fill="#000000"/><rect x="4" y="3" width="6" height="1" fill="#ffffff"/><rect x="10" y="3" width="1" height="1" fill="#000000"/><rect x="11" y="3" width="1" height="1" fill="#808000"/><rect x="12" y="3" width="1" height="1" fill="#808080"/><rect x="13" y="3" width="1" height="1" fill="#000000"/><rect x="0" y="4" width="1" height="1" fill="#000000"/><rect x="1" y="4" width="1" height="1" fill="#808000"/><rect x="2" y="4" width="1" height="1" fill="#808080"/><rect x="3" y="4" width="1" height="1" fill="#808000"/><rect x="4" y="4" width="6" height="1" fill="#000000"/><rect x="10" y="4" width="1" height="1" fill="#808000"/><rect x="11" y="4" width="1" height="1" fill="#808080"/><rect x="12" y="4" width="1" height="1" fill="#808000"/><rect x="13" y="4" width="1" height="1" fill="#000000"/><rect x="0" y="5" width="1" height="1" fill="#000000"/><rect x="1" y="5" width="1" height="1" fill="#808080"/><rect x="2" y="5" width="1" height="1" fill="#808000"/><rect x="3" y="5" width="1" height="1" fill="#808080"/><rect x="4" y="5" width="1" height="1" fill="#808000"/><rect x="5" y="5" width="1" height="1" fill="#808080"/><rect x="6" y="5" width="1" height="1" fill="#808000"/><rect x="7" y="5" width="1" height="1" fill="#808080"/><rect x="8" y="5" width="1" height="1" fill="#808000"/><rect x="9" y="5" width="1" height="1" fill="#808080"/><rect x="10" y="5" width="1" height="1" fill="#808000"/><rect x="11" y="5" width="1" height="1" fill="#808080"/><rect x="12" y="5" width="1" height="1" fill="#808000"/><rect x="13" y="5" width="1" height="1" fill="#000000"/><rect x="0" y="6" width="1" height="1" fill="#000000"/><rect x="1" y="6" width="1" height="1" fill="#808000"/><rect x="2" y="6" width="1" height="1" fill="#808080"/><rect x="3" y="6" width="1" height="1" fill="#808000"/><rect x="4" y="6" width="1" height="1" fill="#808080"/><rect x="5" y="6" width="1" height="1" fill="#808000"/><rect x="6" y="6" width="7" height="1" fill="#000080"/><rect x="0" y="7" width="1" height="1" fill="#000000"/><rect x="1" y="7" width="1" height="1" fill="#808080"/><rect x="2" y="7" width="1" height="1" fill="#808000"/><rect x="3" y="7" width="1" height="1" fill="#808080"/><rect x="4" y="7" width="1" height="1" fill="#808000"/><rect x="5" y="7" width="1" height="1" fill="#808080"/><rect x="6" y="7" width="2" height="1" fill="#000080"/><rect x="8" y="7" width="4" height="1" fill="#ffffff"/><rect x="12" y="7" width="2" height="1" fill="#000080"/><rect x="0" y="8" width="1" height="1" fill="#000000"/><rect x="1" y="8" width="1" height="1" fill="#808000"/><rect x="2" y="8" width="1" height="1" fill="#808080"/><rect x="3" y="8" width="1" height="1" fill="#808000"/><rect x="4" y="8" width="1" height="1" fill="#808080"/><rect x="5" y="8" width="1" height="1" fill="#808000"/><rect x="6" y="8" width="2" height="1" fill="#000080"/><rect x="8" y="8" width="4" height="1" fill="#ffffff"/><rect x="12" y="8" width="3" height="1" fill="#000080"/><rect x="0" y="9" width="1" height="1" fill="#000000"/><rect x="1" y="9" width="1" height="1" fill="#808080"/><rect x="2" y="9" width="1" height="1" fill="#808000"/><rect x="3" y="9" width="1" height="1" fill="#808080"/><rect x="4" y="9" width="1" height="1" fill="#808000"/><rect x="5" y="9" width="1" height="1" fill="#808080"/><rect x="6" y="9" width="9" height="1" fill="#000080"/><rect x="0" y="10" width="1" height="1" fill="#000000"/><rect x="1" y="10" width="1" height="1" fill="#808000"/><rect x="2" y="10" width="1" height="1" fill="#808080"/><rect x="3" y="10" width="1" height="1" fill="#808000"/><rect x="4" y="10" width="1" height="1" fill="#808080"/><rect x="5" y="10" width="1" height="1" fill="#808000"/><rect x="6" y="10" width="2" height="1" fill="#000080"/><rect x="8" y="10" width="6" height="1" fill="#ffffff"/><rect x="14" y="10" width="1" height="1" fill="#000080"/><rect x="0" y="11" width="1" height="1" fill="#000000"/><rect x="1" y="11" width="1" height="1" fill="#808080"/><rect x="2" y="11" width="1" height="1" fill="#808000"/><rect x="3" y="11" width="1" height="1" fill="#808080"/><rect x="4" y="11" width="1" height="1" fill="#808000"/><rect x="5" y="11" width="1" height="1" fill="#808080"/><rect x="6" y="11" width="9" height="1" fill="#000080"/><rect x="0" y="12" width="6" height="1" fill="#000000"/><rect x="6" y="12" width="2" height="1" fill="#000080"/><rect x="8" y="12" width="6" height="1" fill="#ffffff"/><rect x="14" y="12" width="1" height="1" fill="#000080"/><rect x="6" y="13" width="9" height="1" fill="#000080"/></svg>
<div style="left:185px;top:44px;width:1px;height:22px;background:#808080;"></div>
<div style="left:186px;top:44px;width:1px;height:22px;background:#ffffff;"></div>
<svg style="left:194px;top:48px" width="16" height="14" viewBox="0 0 16 14" shape-rendering="crispEdges"><rect x="8" y="1" width="3" height="1" fill="#ffffff"/><rect x="7" y="2" width="1" height="1" fill="#ffffff"/><rect x="11" y="2" width="1" height="1" fill="#ffffff"/><rect x="6" y="3" width="1" height="1" fill="#ffffff"/><rect x="12" y="3" width="1" height="1" fill="#ffffff"/><rect x="5" y="4" width="1" height="1" fill="#ffffff"/><rect x="13" y="4" width="1" height="1" fill="#ffffff"/><rect x="2" y="5" width="1" height="1" fill="#ffffff"/><rect x="4" y="5" width="1" height="1" fill="#ffffff"/><rect x="14" y="5" width="1" height="1" fill="#ffffff"/><rect x="2" y="6" width="2" height="1" fill="#ffffff"/><rect x="14" y="6" width="1" height="1" fill="#ffffff"/><rect x="2" y="7" width="4" height="1" fill="#ffffff"/><rect x="14" y="7" width="1" height="1" fill="#ffffff"/><rect x="13" y="8" width="1" height="1" fill="#ffffff"/><rect x="12" y="9" width="1" height="1" fill="#ffffff"/><rect x="11" y="10" width="1" height="1" fill="#ffffff"/><rect x="10" y="11" width="1" height="1" fill="#ffffff"/><rect x="12" y="11" width="1" height="1" fill="#ffffff"/><rect x="14" y="11" width="1" height="1" fill="#ffffff"/><rect x="1" y="12" width="9" height="1" fill="#ffffff"/><rect x="11" y="12" width="1" height="1" fill="#ffffff"/><rect x="13" y="12" width="1" height="1" fill="#ffffff"/><rect x="15" y="12" width="1" height="1" fill="#ffffff"/><rect x="1" y="13" width="9" height="1" fill="#ffffff"/><rect x="7" y="0" width="3" height="1" fill="#808080"/><rect x="6" y="1" width="1" height="1" fill="#808080"/><rect x="10" y="1" width="1" height="1" fill="#808080"/><rect x="5" y="2" width="1" height="1" fill="#808080"/><rect x="11" y="2" width="1" height="1" fill="#808080"/><rect x="4" y="3" width="1" height="1" fill="#808080"/><rect x="12" y="3" width="1" height="1" fill="#808080"/><rect x="1" y="4" width="1" height="1" fill="#808080"/><rect x="3" y="4" width="1" height="1" fill="#808080"/><rect x="13" y="4" width="1" height="1" fill="#808080"/><rect x="1" y="5" width="2" height="1" fill="#808080"/><rect x="13" y="5" width="1" height="1" fill="#808080"/><rect x="1" y="6" width="4" height="1" fill="#808080"/><rect x="13" y="6" width="1" height="1" fill="#808080"/><rect x="12" y="7" width="1" height="1" fill="#808080"/><rect x="11" y="8" width="1" height="1" fill="#808080"/><rect x="10" y="9" width="1" height="1" fill="#808080"/><rect x="9" y="10" width="1" height="1" fill="#808080"/><rect x="11" y="10" width="1" height="1" fill="#808080"/><rect x="13" y="10" width="1" height="1" fill="#808080"/><rect x="0" y="11" width="9" height="1" fill="#808080"/><rect x="10" y="11" width="1" height="1" fill="#808080"/><rect x="12" y="11" width="1" height="1" fill="#808080"/><rect x="14" y="11" width="1" height="1" fill="#808080"/><rect x="0" y="12" width="9" height="1" fill="#808080"/></svg>
<svg style="left:217px;top:48px" width="16" height="14" viewBox="0 0 16 14" shape-rendering="crispEdges"><rect x="6" y="1" width="3" height="1" fill="#ffffff"/><rect x="5" y="2" width="1" height="1" fill="#ffffff"/><rect x="9" y="2" width="1" height="1" fill="#ffffff"/><rect x="4" y="3" width="1" height="1" fill="#ffffff"/><rect x="10" y="3" width="1" height="1" fill="#ffffff"/><rect x="3" y="4" width="1" height="1" fill="#ffffff"/><rect x="11" y="4" width="1" height="1" fill="#ffffff"/><rect x="2" y="5" width="1" height="1" fill="#ffffff"/><rect x="12" y="5" width="1" height="1" fill="#ffffff"/><rect x="14" y="5" width="1" height="1" fill="#ffffff"/><rect x="2" y="6" width="1" height="1" fill="#ffffff"/><rect x="13" y="6" width="2" height="1" fill="#ffffff"/><rect x="2" y="7" width="1" height="1" fill="#ffffff"/><rect x="11" y="7" width="4" height="1" fill="#ffffff"/><rect x="3" y="8" width="1" height="1" fill="#ffffff"/><rect x="4" y="9" width="1" height="1" fill="#ffffff"/><rect x="5" y="10" width="1" height="1" fill="#ffffff"/><rect x="2" y="11" width="1" height="1" fill="#ffffff"/><rect x="4" y="11" width="1" height="1" fill="#ffffff"/><rect x="6" y="11" width="1" height="1" fill="#ffffff"/><rect x="1" y="12" width="1" height="1" fill="#ffffff"/><rect x="3" y="12" width="1" height="1" fill="#ffffff"/><rect x="5" y="12" width="1" height="1" fill="#ffffff"/><rect x="7" y="12" width="9" height="1" fill="#ffffff"/><rect x="7" y="13" width="9" height="1" fill="#ffffff"/><rect x="5" y="0" width="3" height="1" fill="#808080"/><rect x="4" y="1" width="1" height="1" fill="#808080"/><rect x="8" y="1" width="1" height="1" fill="#808080"/><rect x="3" y="2" width="1" height="1" fill="#808080"/><rect x="9" y="2" width="1" height="1" fill="#808080"/><rect x="2" y="3" width="1" height="1" fill="#808080"/><rect x="10" y="3" width="1" height="1" fill="#808080"/><rect x="1" y="4" width="1" height="1" fill="#808080"/><rect x="11" y="4" width="1" height="1" fill="#808080"/><rect x="13" y="4" width="1" height="1" fill="#808080"/><rect x="1" y="5" width="1" height="1" fill="#808080"/><rect x="12" y="5" width="2" height="1" fill="#808080"/><rect x="1" y="6" width="1" height="1" fill="#808080"/><rect x="10" y="6" width="4" height="1" fill="#808080"/><rect x="2" y="7" width="1" height="1" fill="#808080"/><rect x="3" y="8" width="1" height="1" fill="#808080"/><rect x="4" y="9" width="1" height="1" fill="#808080"/><rect x="1" y="10" width="1" height="1" fill="#808080"/><rect x="3" y="10" width="1" height="1" fill="#808080"/><rect x="5" y="10" width="1" height="1" fill="#808080"/><rect x="0" y="11" width="1" height="1" fill="#808080"/><rect x="2" y="11" width="1" height="1" fill="#808080"/><rect x="4" y="11" width="1" height="1" fill="#808080"/><rect x="6" y="11" width="9" height="1" fill="#808080"/><rect x="6" y="12" width="9" height="1" fill="#808080"/></svg>
<div style="left:239px;top:44px;width:1px;height:22px;background:#808080;"></div>
<div style="left:240px;top:44px;width:1px;height:22px;background:#ffffff;"></div>
<svg style="left:247px;top:48px" width="17" height="15" viewBox="0 0 17 15" shape-rendering="crispEdges"><rect x="6" y="0" width="8" height="1" fill="#000000"/><rect x="5" y="1" width="1" height="1" fill="#000000"/><rect x="6" y="1" width="6" height="1" fill="#ffffff"/><rect x="12" y="1" width="1" height="1" fill="#000000"/><rect x="5" y="2" width="1" height="1" fill="#000000"/><rect x="6" y="2" width="1" height="1" fill="#ffffff"/><rect x="7" y="2" width="4" height="1" fill="#808080"/><rect x="11" y="2" width="1" height="1" fill="#ffffff"/><rect x="12" y="2" width="1" height="1" fill="#000000"/><rect x="4" y="3" width="1" height="1" fill="#000000"/><rect x="5" y="3" width="6" height="1" fill="#ffffff"/><rect x="11" y="3" width="1" height="1" fill="#000000"/><rect x="13" y="3" width="1" height="1" fill="#000000"/><rect x="4" y="4" width="1" height="1" fill="#000000"/><rect x="5" y="4" width="1" height="1" fill="#ffffff"/><rect x="6" y="4" width="4" height="1" fill="#808080"/><rect x="10" y="4" width="1" height="1" fill="#ffffff"/><rect x="11" y="4" width="1" height="1" fill="#000000"/><rect x="13" y="4" width="2" height="1" fill="#000000"/><rect x="3" y="5" width="1" height="1" fill="#000000"/><rect x="4" y="5" width="6" height="1" fill="#ffffff"/><rect x="10" y="5" width="1" height="1" fill="#000000"/><rect x="12" y="5" width="1" height="1" fill="#000000"/><rect x="13" y="5" width="1" height="1" fill="#c0c0c0"/><rect x="14" y="5" width="1" height="1" fill="#000000"/><rect x="1" y="6" width="11" height="1" fill="#000000"/><rect x="12" y="6" width="1" height="1" fill="#c0c0c0"/><rect x="13" y="6" width="2" height="1" fill="#000000"/><rect x="0" y="7" width="1" height="1" fill="#000000"/><rect x="1" y="7" width="10" height="1" fill="#c0c0c0"/><rect x="11" y="7" width="1" height="1" fill="#000000"/><rect x="12" y="7" width="1" height="1" fill="#c0c0c0"/><rect x="13" y="7" width="2" height="1" fill="#000000"/><rect x="0" y="8" width="12" height="1" fill="#000000"/><rect x="12" y="8" width="2" height="1" fill="#c0c0c0"/><rect x="14" y="8" width="1" height="1" fill="#000000"/><rect x="0" y="9" width="1" height="1" fill="#000000"/><rect x="1" y="9" width="5" height="1" fill="#ffffff"/><rect x="6" y="9" width="3" height="1" fill="#ffff00"/><rect x="9" y="9" width="2" height="1" fill="#ffffff"/><rect x="11" y="9" width="1" height="1" fill="#000000"/><rect x="12" y="9" width="1" height="1" fill="#c0c0c0"/><rect x="13" y="9" width="2" height="1" fill="#000000"/><rect x="0" y="10" width="1" height="1" fill="#000000"/><rect x="1" y="10" width="10" height="1" fill="#ffffff"/><rect x="11" y="10" width="3" height="1" fill="#000000"/><rect x="0" y="11" width="12" height="1" fill="#000000"/><rect x="12" y="11" width="1" height="1" fill="#c0c0c0"/><rect x="13" y="11" width="1" height="1" fill="#000000"/><rect x="0" y="12" width="1" height="1" fill="#000000"/><rect x="1" y="12" width="10" height="1" fill="#c0c0c0"/><rect x="11" y="12" width="2" height="1" fill="#000000"/><rect x="1" y="13" width="11" height="1" fill="#000000"/></svg>
<div style="left:270px;top:44px;width:1px;height:22px;background:#808080;"></div>
<div style="left:271px;top:44px;width:1px;height:22px;background:#ffffff;"></div>
<svg style="left:279px;top:47px" width="17" height="16" viewBox="0 0 17 16" shape-rendering="crispEdges"><rect x="6" y="0" width="2" height="1" fill="#000080"/><rect x="9" y="0" width="2" height="1" fill="#000000"/><rect x="6" y="1" width="2" height="1" fill="#000080"/><rect x="8" y="1" width="1" height="1" fill="#000000"/><rect x="9" y="1" width="2" height="1" fill="#ffffff"/><rect x="11" y="1" width="1" height="1" fill="#000000"/><rect x="6" y="2" width="2" height="1" fill="#000080"/><rect x="8" y="2" width="4" height="1" fill="#ffffff"/><rect x="12" y="2" width="2" height="1" fill="#000000"/><rect x="4" y="3" width="2" height="1" fill="#000000"/><rect x="6" y="3" width="2" height="1" fill="#000080"/><rect x="8" y="3" width="6" height="1" fill="#ffffff"/><rect x="14" y="3" width="1" height="1" fill="#000000"/><rect x="3" y="4" width="8" height="1" fill="#000080"/><rect x="11" y="4" width="4" height="1" fill="#ffffff"/><rect x="15" y="4" width="1" height="1" fill="#000000"/><rect x="1" y="5" width="2" height="1" fill="#000000"/><rect x="3" y="5" width="1" height="1" fill="#ffffff"/><rect x="4" y="5" width="6" height="1" fill="#000080"/><rect x="10" y="5" width="3" height="1" fill="#ffffff"/><rect x="13" y="5" width="2" height="1" fill="#000000"/><rect x="0" y="6" width="1" height="1" fill="#000000"/><rect x="1" y="6" width="4" height="1" fill="#ffffff"/><rect x="5" y="6" width="4" height="1" fill="#000080"/><rect x="9" y="6" width="3" height="1" fill="#ffffff"/><rect x="12" y="6" width="1" height="1" fill="#000000"/><rect x="13" y="6" width="2" height="1" fill="#ffffff"/><rect x="15" y="6" width="1" height="1" fill="#000000"/><rect x="1" y="7" width="2" height="1" fill="#000000"/><rect x="3" y="7" width="3" height="1" fill="#ffffff"/><rect x="6" y="7" width="2" height="1" fill="#000080"/><rect x="8" y="7" width="2" height="1" fill="#ffffff"/><rect x="10" y="7" width="2" height="1" fill="#000000"/><rect x="12" y="7" width="1" height="1" fill="#ffffff"/><rect x="13" y="7" width="2" height="1" fill="#000000"/><rect x="0" y="8" width="1" height="1" fill="#000000"/><rect x="1" y="8" width="2" height="1" fill="#ffffff"/><rect x="3" y="8" width="1" height="1" fill="#000000"/><rect x="4" y="8" width="5" height="1" fill="#ffffff"/><rect x="9" y="8" width="1" height="1" fill="#000000"/><rect x="10" y="8" width="2" height="1" fill="#ffffff"/><rect x="12" y="8" width="1" height="1" fill="#000000"/><rect x="13" y="8" width="2" height="1" fill="#ffffff"/><rect x="15" y="8" width="1" height="1" fill="#000000"/><rect x="1" y="9" width="2" height="1" fill="#000000"/><rect x="3" y="9" width="1" height="1" fill="#ffffff"/><rect x="4" y="9" width="2" height="1" fill="#000000"/><rect x="6" y="9" width="1" height="1" fill="#ffffff"/><rect x="7" y="9" width="2" height="1" fill="#000000"/><rect x="9" y="9" width="1" height="1" fill="#ffffff"/><rect x="10" y="9" width="2" height="1" fill="#000000"/><rect x="12" y="9" width="1" height="1" fill="#ffffff"/><rect x="13" y="9" width="2" height="1" fill="#000000"/><rect x="0" y="10" width="1" height="1" fill="#000000"/><rect x="1" y="10" width="2" height="1" fill="#ffffff"/><rect x="3" y="10" width="1" height="1" fill="#000000"/><rect x="4" y="10" width="2" height="1" fill="#ffffff"/><rect x="6" y="10" width="1" height="1" fill="#000000"/><rect x="7" y="10" width="2" height="1" fill="#ffffff"/><rect x="9" y="10" width="1" height="1" fill="#000000"/><rect x="10" y="10" width="2" height="1" fill="#ffffff"/><rect x="12" y="10" width="1" height="1" fill="#000000"/><rect x="1" y="11" width="2" height="1" fill="#000000"/><rect x="3" y="11" width="1" height="1" fill="#ffffff"/><rect x="4" y="11" width="2" height="1" fill="#000000"/><rect x="6" y="11" width="1" height="1" fill="#ffffff"/><rect x="7" y="11" width="2" height="1" fill="#000000"/><rect x="9" y="11" width="1" height="1" fill="#ffffff"/><rect x="10" y="11" width="2" height="1" fill="#000000"/><rect x="3" y="12" width="1" height="1" fill="#000000"/><rect x="4" y="12" width="2" height="1" fill="#ffffff"/><rect x="6" y="12" width="1" height="1" fill="#000000"/><rect x="7" y="12" width="2" height="1" fill="#ffffff"/><rect x="9" y="12" width="1" height="1" fill="#000000"/><rect x="4" y="13" width="2" height="1" fill="#000000"/><rect x="6" y="13" width="1" height="1" fill="#ffffff"/><rect x="7" y="13" width="2" height="1" fill="#000000"/><rect x="6" y="14" width="1" height="1" fill="#000000"/></svg>
<svg style="left:302px;top:48px" width="16" height="15" viewBox="0 0 16 15" shape-rendering="crispEdges"><rect x="1" y="0" width="1" height="1" fill="#0000ff"/><rect x="5" y="0" width="1" height="1" fill="#0000ff"/><rect x="9" y="0" width="1" height="1" fill="#0000ff"/><rect x="13" y="0" width="1" height="1" fill="#0000ff"/><rect x="3" y="1" width="1" height="1" fill="#0000ff"/><rect x="7" y="1" width="1" height="1" fill="#0000ff"/><rect x="11" y="1" width="1" height="1" fill="#0000ff"/><rect x="3" y="2" width="2" height="1" fill="#000080"/><rect x="6" y="2" width="1" height="1" fill="#0000ff"/><rect x="9" y="2" width="2" height="1" fill="#000080"/><rect x="13" y="2" width="1" height="1" fill="#0000ff"/><rect x="3" y="3" width="2" height="1" fill="#000080"/><rect x="9" y="3" width="2" height="1" fill="#000080"/><rect x="0" y="4" width="1" height="1" fill="#000000"/><rect x="3" y="4" width="2" height="1" fill="#000080"/><rect x="9" y="4" width="2" height="1" fill="#000080"/><rect x="14" y="4" width="1" height="1" fill="#000000"/><rect x="0" y="5" width="1" height="1" fill="#000000"/><rect x="1" y="5" width="6" height="1" fill="#000080"/><rect x="8" y="5" width="6" height="1" fill="#000080"/><rect x="14" y="5" width="1" height="1" fill="#000000"/><rect x="0" y="6" width="1" height="1" fill="#000000"/><rect x="2" y="6" width="4" height="1" fill="#000080"/><rect x="9" y="6" width="4" height="1" fill="#000080"/><rect x="14" y="6" width="1" height="1" fill="#000000"/><rect x="0" y="7" width="1" height="1" fill="#000000"/><rect x="3" y="7" width="2" height="1" fill="#000080"/><rect x="10" y="7" width="2" height="1" fill="#000080"/><rect x="14" y="7" width="1" height="1" fill="#000000"/><rect x="0" y="8" width="1" height="1" fill="#000000"/><rect x="1" y="8" width="13" height="1" fill="#ffffff"/><rect x="14" y="8" width="1" height="1" fill="#000000"/><rect x="0" y="9" width="1" height="1" fill="#000000"/><rect x="1" y="9" width="1" height="1" fill="#ffffff"/><rect x="2" y="9" width="1" height="1" fill="#000000"/><rect x="3" y="9" width="1" height="1" fill="#ffffff"/><rect x="4" y="9" width="1" height="1" fill="#000000"/><rect x="5" y="9" width="1" height="1" fill="#ffffff"/><rect x="6" y="9" width="1" height="1" fill="#000000"/><rect x="7" y="9" width="1" height="1" fill="#ffffff"/><rect x="8" y="9" width="1" height="1" fill="#000000"/><rect x="9" y="9" width="1" height="1" fill="#ffffff"/><rect x="10" y="9" width="1" height="1" fill="#000000"/><rect x="11" y="9" width="1" height="1" fill="#ffffff"/><rect x="12" y="9" width="1" height="1" fill="#000000"/><rect x="13" y="9" width="1" height="1" fill="#ffffff"/><rect x="14" y="9" width="1" height="1" fill="#000000"/><rect x="0" y="10" width="1" height="1" fill="#000000"/><rect x="1" y="10" width="13" height="1" fill="#ffffff"/><rect x="14" y="10" width="1" height="1" fill="#000000"/><rect x="0" y="11" width="1" height="1" fill="#000000"/><rect x="1" y="11" width="1" height="1" fill="#ffffff"/><rect x="2" y="11" width="1" height="1" fill="#000000"/><rect x="3" y="11" width="1" height="1" fill="#ffffff"/><rect x="4" y="11" width="1" height="1" fill="#000000"/><rect x="5" y="11" width="1" height="1" fill="#ffffff"/><rect x="6" y="11" width="1" height="1" fill="#000000"/><rect x="7" y="11" width="1" height="1" fill="#ffffff"/><rect x="8" y="11" width="1" height="1" fill="#000000"/><rect x="9" y="11" width="1" height="1" fill="#ffffff"/><rect x="10" y="11" width="1" height="1" fill="#000000"/><rect x="11" y="11" width="1" height="1" fill="#ffffff"/><rect x="12" y="11" width="1" height="1" fill="#000000"/><rect x="13" y="11" width="1" height="1" fill="#ffffff"/><rect x="14" y="11" width="1" height="1" fill="#000000"/><rect x="0" y="12" width="1" height="1" fill="#000000"/><rect x="1" y="12" width="13" height="1" fill="#ffffff"/><rect x="14" y="12" width="1" height="1" fill="#000000"/><rect x="0" y="13" width="15" height="1" fill="#000000"/></svg>
<svg style="left:324px;top:49px" width="18" height="14" viewBox="0 0 18 14" shape-rendering="crispEdges"><rect x="8" y="0" width="6" height="1" fill="#000000"/><rect x="8" y="1" width="1" height="1" fill="#000000"/><rect x="9" y="1" width="4" height="1" fill="#ffffff"/><rect x="13" y="1" width="2" height="1" fill="#000000"/><rect x="8" y="2" width="1" height="1" fill="#000000"/><rect x="9" y="2" width="4" height="1" fill="#ffffff"/><rect x="13" y="2" width="1" height="1" fill="#000000"/><rect x="14" y="2" width="1" height="1" fill="#ffffff"/><rect x="15" y="2" width="1" height="1" fill="#000000"/><rect x="0" y="3" width="1" height="1" fill="#800000"/><rect x="2" y="3" width="2" height="1" fill="#800000"/><rect x="5" y="3" width="2" height="1" fill="#800000"/><rect x="8" y="3" width="1" height="1" fill="#000000"/><rect x="9" y="3" width="4" height="1" fill="#ffffff"/><rect x="13" y="3" width="4" height="1" fill="#000000"/><rect x="8" y="4" width="1" height="1" fill="#000000"/><rect x="9" y="4" width="7" height="1" fill="#ffffff"/><rect x="16" y="4" width="1" height="1" fill="#000000"/><rect x="0" y="5" width="1" height="1" fill="#800000"/><rect x="2" y="5" width="2" height="1" fill="#800000"/><rect x="5" y="5" width="2" height="1" fill="#800000"/><rect x="8" y="5" width="1" height="1" fill="#000000"/><rect x="9" y="5" width="7" height="1" fill="#ffffff"/><rect x="16" y="5" width="1" height="1" fill="#000000"/><rect x="8" y="6" width="1" height="1" fill="#000000"/><rect x="9" y="6" width="7" height="1" fill="#ffffff"/><rect x="16" y="6" width="1" height="1" fill="#000000"/><rect x="0" y="7" width="1" height="1" fill="#800000"/><rect x="2" y="7" width="2" height="1" fill="#800000"/><rect x="5" y="7" width="2" height="1" fill="#800000"/><rect x="8" y="7" width="1" height="1" fill="#000000"/><rect x="9" y="7" width="7" height="1" fill="#ffffff"/><rect x="16" y="7" width="1" height="1" fill="#000000"/><rect x="8" y="8" width="1" height="1" fill="#000000"/><rect x="9" y="8" width="7" height="1" fill="#ffffff"/><rect x="16" y="8" width="1" height="1" fill="#000000"/><rect x="0" y="9" width="1" height="1" fill="#800000"/><rect x="2" y="9" width="2" height="1" fill="#800000"/><rect x="5" y="9" width="2" height="1" fill="#800000"/><rect x="8" y="9" width="1" height="1" fill="#000000"/><rect x="9" y="9" width="7" height="1" fill="#ffffff"/><rect x="16" y="9" width="1" height="1" fill="#000000"/><rect x="8" y="10" width="1" height="1" fill="#000000"/><rect x="9" y="10" width="7" height="1" fill="#ffffff"/><rect x="16" y="10" width="1" height="1" fill="#000000"/><rect x="8" y="11" width="1" height="1" fill="#000000"/><rect x="9" y="11" width="7" height="1" fill="#ffffff"/><rect x="16" y="11" width="1" height="1" fill="#000000"/><rect x="8" y="12" width="9" height="1" fill="#000000"/></svg>
<div style="left:347px;top:44px;width:1px;height:22px;background:#808080;"></div>
<div style="left:348px;top:44px;width:1px;height:22px;background:#ffffff;"></div>
<svg style="left:358px;top:49px" width="14" height="14" viewBox="0 0 14 14" shape-rendering="crispEdges"><rect x="4" y="0" width="5" height="1" fill="#ff0000"/><rect x="2" y="1" width="9" height="1" fill="#ff0000"/><rect x="1" y="2" width="11" height="1" fill="#ff0000"/><rect x="1" y="3" width="2" height="1" fill="#ff0000"/><rect x="3" y="3" width="2" height="1" fill="#ffffff"/><rect x="5" y="3" width="7" height="1" fill="#ff0000"/><rect x="0" y="4" width="3" height="1" fill="#ff0000"/><rect x="3" y="4" width="1" height="1" fill="#ffffff"/><rect x="4" y="4" width="9" height="1" fill="#ff0000"/><rect x="0" y="5" width="13" height="1" fill="#ff0000"/><rect x="0" y="6" width="13" height="1" fill="#ff0000"/><rect x="0" y="7" width="13" height="1" fill="#ff0000"/><rect x="0" y="8" width="13" height="1" fill="#ff0000"/><rect x="1" y="9" width="11" height="1" fill="#ff0000"/><rect x="1" y="10" width="11" height="1" fill="#ff0000"/><rect x="2" y="11" width="9" height="1" fill="#ff0000"/><rect x="4" y="12" width="5" height="1" fill="#ff0000"/></svg>
<div style="left:378px;top:44px;width:1px;height:22px;background:#808080;"></div>
<div style="left:379px;top:44px;width:1px;height:22px;background:#ffffff;"></div>
<svg style="left:389px;top:48px" width="14" height="16" viewBox="0 0 14 16" shape-rendering="crispEdges"><rect x="1" y="0" width="11" height="1" fill="#000000"/><rect x="0" y="1" width="1" height="1" fill="#000000"/><rect x="1" y="1" width="11" height="1" fill="#ffffff"/><rect x="12" y="1" width="1" height="1" fill="#000000"/><rect x="0" y="2" width="1" height="1" fill="#000000"/><rect x="1" y="2" width="1" height="1" fill="#ffffff"/><rect x="2" y="2" width="1" height="1" fill="#ffff00"/><rect x="3" y="2" width="1" height="1" fill="#ffffff"/><rect x="4" y="2" width="1" height="1" fill="#ffff00"/><rect x="5" y="2" width="1" height="1" fill="#ffffff"/><rect x="6" y="2" width="1" height="1" fill="#ffff00"/><rect x="7" y="2" width="1" height="1" fill="#ffffff"/><rect x="8" y="2" width="1" height="1" fill="#ffff00"/><rect x="9" y="2" width="1" height="1" fill="#ffffff"/><rect x="10" y="2" width="1" height="1" fill="#ffff00"/><rect x="11" y="2" width="1" height="1" fill="#ffffff"/><rect x="12" y="2" width="1" height="1" fill="#000000"/><rect x="0" y="3" width="1" height="1" fill="#000000"/><rect x="1" y="3" width="3" height="1" fill="#ffffff"/><rect x="4" y="3" width="5" height="1" fill="#000080"/><rect x="9" y="3" width="3" height="1" fill="#ffffff"/><rect x="12" y="3" width="1" height="1" fill="#000000"/><rect x="0" y="4" width="1" height="1" fill="#000000"/><rect x="1" y="4" width="1" height="1" fill="#ffffff"/><rect x="2" y="4" width="1" height="1" fill="#ffff00"/><rect x="3" y="4" width="2" height="1" fill="#000080"/><rect x="5" y="4" width="1" height="1" fill="#ffffff"/><rect x="6" y="4" width="1" height="1" fill="#ffff00"/><rect x="7" y="4" width="1" height="1" fill="#ffffff"/><rect x="8" y="4" width="2" height="1" fill="#000080"/><rect x="10" y="4" width="1" height="1" fill="#ffff00"/><rect x="11" y="4" width="1" height="1" fill="#ffffff"/><rect x="12" y="4" width="1" height="1" fill="#000000"/><rect x="0" y="5" width="1" height="1" fill="#000000"/><rect x="1" y="5" width="7" height="1" fill="#ffffff"/><rect x="8" y="5" width="2" height="1" fill="#000080"/><rect x="10" y="5" width="2" height="1" fill="#ffffff"/><rect x="12" y="5" width="1" height="1" fill="#000000"/><rect x="0" y="6" width="1" height="1" fill="#000000"/><rect x="1" y="6" width="1" height="1" fill="#ffffff"/><rect x="2" y="6" width="1" height="1" fill="#ffff00"/><rect x="3" y="6" width="1" height="1" fill="#ffffff"/><rect x="4" y="6" width="1" height="1" fill="#ffff00"/><rect x="5" y="6" width="1" height="1" fill="#ffffff"/><rect x="6" y="6" width="1" height="1" fill="#ffff00"/><rect x="7" y="6" width="2" height="1" fill="#000080"/><rect x="9" y="6" width="1" height="1" fill="#ffffff"/><rect x="10" y="6" width="1" height="1" fill="#ffff00"/><rect x="11" y="6" width="1" height="1" fill="#ffffff"/><rect x="12" y="6" width="1" height="1" fill="#000000"/><rect x="0" y="7" width="1" height="1" fill="#000000"/><rect x="1" y="7" width="5" height="1" fill="#ffffff"/><rect x="6" y="7" width="2" height="1" fill="#000080"/><rect x="8" y="7" width="4" height="1" fill="#ffffff"/><rect x="12" y="7" width="1" height="1" fill="#000000"/><rect x="0" y="8" width="1" height="1" fill="#000000"/><rect x="1" y="8" width="1" height="1" fill="#ffffff"/><rect x="2" y="8" width="1" height="1" fill="#ffff00"/><rect x="3" y="8" width="1" height="1" fill="#ffffff"/><rect x="4" y="8" width="1" height="1" fill="#ffff00"/><rect x="5" y="8" width="1" height="1" fill="#ffffff"/><rect x="6" y="8" width="2" height="1" fill="#000080"/><rect x="8" y="8" width="1" height="1" fill="#ffffff"/><rect x="9" y="8" width="2" height="1" fill="#ffff00"/><rect x="11" y="8" width="1" height="1" fill="#ffffff"/><rect x="12" y="8" width="1" height="1" fill="#000000"/><rect x="0" y="9" width="1" height="1" fill="#000000"/><rect x="1" y="9" width="11" height="1" fill="#ffffff"/><rect x="12" y="9" width="1" height="1" fill="#000000"/><rect x="0" y="10" width="1" height="1" fill="#000000"/><rect x="1" y="10" width="1" height="1" fill="#ffffff"/><rect x="2" y="10" width="1" height="1" fill="#ffff00"/><rect x="3" y="10" width="1" height="1" fill="#ffffff"/><rect x="4" y="10" width="1" height="1" fill="#ffff00"/><rect x="5" y="10" width="1" height="1" fill="#ffffff"/><rect x="6" y="10" width="2" height="1" fill="#000080"/><rect x="8" y="10" width="1" height="1" fill="#ffffff"/><rect x="9" y="10" width="1" height="1" fill="#ffff00"/><rect x="10" y="10" width="1" height="1" fill="#ffffff"/><rect x="11" y="10" width="1" height="1" fill="#ffff00"/><rect x="12" y="10" width="1" height="1" fill="#000000"/><rect x="0" y="11" width="1" height="1" fill="#000000"/><rect x="1" y="11" width="11" height="1" fill="#ffffff"/><rect x="12" y="11" width="1" height="1" fill="#000000"/><rect x="1" y="12" width="8" height="1" fill="#000000"/><rect x="9" y="12" width="1" height="1" fill="#ffffff"/><rect x="10" y="12" width="2" height="1" fill="#000000"/><rect x="5" y="13" width="5" height="1" fill="#000000"/><rect x="10" y="13" width="1" height="1" fill="#ffff00"/><rect x="11" y="13" width="1" height="1" fill="#000000"/><rect x="10" y="14" width="1" height="1" fill="#000000"/></svg>
<div style="left:408px;top:42px;width:111px;height:1px;background:#ffffff;"></div>
<div style="left:408px;top:42px;width:1px;height:27px;background:#ffffff;"></div>
<div style="left:408px;top:68px;width:111px;height:1px;background:#808080;"></div>
<div style="left:518px;top:42px;width:1px;height:27px;background:#808080;"></div>
<div style="left:411px;top:45px;width:1px;height:21px;background:#ffffff;"></div>
<div style="left:411px;top:45px;width:2px;height:1px;background:#ffffff;"></div>
<div style="left:413px;top:45px;width:1px;height:21px;background:#808080;"></div>
<div style="left:411px;top:65px;width:3px;height:1px;background:#808080;"></div>
<svg style="left:421px;top:49px" width="17" height="14" viewBox="0 0 17 14" shape-rendering="crispEdges"><rect x="3" y="0" width="3" height="1" fill="#000000"/><rect x="9" y="0" width="3" height="1" fill="#000000"/><rect x="3" y="1" width="1" height="1" fill="#000000"/><rect x="4" y="1" width="1" height="1" fill="#808080"/><rect x="5" y="1" width="1" height="1" fill="#000000"/><rect x="9" y="1" width="1" height="1" fill="#000000"/><rect x="10" y="1" width="1" height="1" fill="#808080"/><rect x="11" y="1" width="1" height="1" fill="#000000"/><rect x="3" y="2" width="3" height="1" fill="#000000"/><rect x="9" y="2" width="3" height="1" fill="#000000"/><rect x="2" y="3" width="5" height="1" fill="#000000"/><rect x="8" y="3" width="5" height="1" fill="#000000"/><rect x="2" y="4" width="1" height="1" fill="#000000"/><rect x="3" y="4" width="1" height="1" fill="#ffffff"/><rect x="4" y="4" width="5" height="1" fill="#000000"/><rect x="9" y="4" width="1" height="1" fill="#ffffff"/><rect x="10" y="4" width="3" height="1" fill="#000000"/><rect x="1" y="5" width="13" height="1" fill="#000000"/><rect x="1" y="6" width="1" height="1" fill="#000000"/><rect x="2" y="6" width="1" height="1" fill="#ffffff"/><rect x="3" y="6" width="3" height="1" fill="#000000"/><rect x="6" y="6" width="1" height="1" fill="#ffffff"/><rect x="7" y="6" width="2" height="1" fill="#000000"/><rect x="9" y="6" width="1" height="1" fill="#ffffff"/><rect x="10" y="6" width="5" height="1" fill="#000000"/><rect x="0" y="7" width="2" height="1" fill="#000000"/><rect x="2" y="7" width="1" height="1" fill="#ffffff"/><rect x="3" y="7" width="3" height="1" fill="#000000"/><rect x="6" y="7" width="1" height="1" fill="#ffffff"/><rect x="7" y="7" width="2" height="1" fill="#000000"/><rect x="9" y="7" width="1" height="1" fill="#ffffff"/><rect x="10" y="7" width="5" height="1" fill="#000000"/><rect x="0" y="8" width="2" height="1" fill="#000000"/><rect x="2" y="8" width="1" height="1" fill="#ffffff"/><rect x="3" y="8" width="4" height="1" fill="#000000"/><rect x="8" y="8" width="1" height="1" fill="#000000"/><rect x="9" y="8" width="1" height="1" fill="#ffffff"/><rect x="10" y="8" width="6" height="1" fill="#000000"/><rect x="0" y="9" width="7" height="1" fill="#000000"/><rect x="8" y="9" width="8" height="1" fill="#000000"/><rect x="0" y="10" width="1" height="1" fill="#000000"/><rect x="1" y="10" width="1" height="1" fill="#ffffff"/><rect x="2" y="10" width="4" height="1" fill="#000000"/><rect x="9" y="10" width="2" height="1" fill="#000000"/><rect x="11" y="10" width="1" height="1" fill="#ffffff"/><rect x="12" y="10" width="4" height="1" fill="#000000"/><rect x="0" y="11" width="1" height="1" fill="#000000"/><rect x="1" y="11" width="1" height="1" fill="#ffffff"/><rect x="2" y="11" width="4" height="1" fill="#000000"/><rect x="9" y="11" width="2" height="1" fill="#000000"/><rect x="11" y="11" width="1" height="1" fill="#ffffff"/><rect x="12" y="11" width="4" height="1" fill="#000000"/><rect x="0" y="12" width="5" height="1" fill="#000000"/><rect x="10" y="12" width="6" height="1" fill="#000000"/></svg>
<svg style="left:443px;top:49px" width="15" height="14" viewBox="0 0 15 14" shape-rendering="crispEdges"><rect x="5" y="1" width="5" height="1" fill="#ffffff"/><rect x="4" y="2" width="1" height="1" fill="#ffffff"/><rect x="10" y="2" width="1" height="1" fill="#ffffff"/><rect x="13" y="2" width="1" height="1" fill="#ffffff"/><rect x="4" y="3" width="1" height="1" fill="#ffffff"/><rect x="11" y="3" width="3" height="1" fill="#ffffff"/><rect x="11" y="4" width="3" height="1" fill="#ffffff"/><rect x="4" y="6" width="2" height="1" fill="#ffffff"/><rect x="8" y="6" width="2" height="1" fill="#ffffff"/><rect x="4" y="7" width="2" height="1" fill="#ffffff"/><rect x="8" y="7" width="2" height="1" fill="#ffffff"/><rect x="3" y="8" width="8" height="1" fill="#ffffff"/><rect x="2" y="9" width="1" height="1" fill="#ffffff"/><rect x="4" y="9" width="5" height="1" fill="#ffffff"/><rect x="10" y="9" width="2" height="1" fill="#ffffff"/><rect x="1" y="10" width="2" height="1" fill="#ffffff"/><rect x="4" y="10" width="2" height="1" fill="#ffffff"/><rect x="7" y="10" width="2" height="1" fill="#ffffff"/><rect x="10" y="10" width="3" height="1" fill="#ffffff"/><rect x="1" y="11" width="2" height="1" fill="#ffffff"/><rect x="4" y="11" width="2" height="1" fill="#ffffff"/><rect x="7" y="11" width="4" height="1" fill="#ffffff"/><rect x="12" y="11" width="1" height="1" fill="#ffffff"/><rect x="1" y="12" width="5" height="1" fill="#ffffff"/><rect x="7" y="12" width="4" height="1" fill="#ffffff"/><rect x="12" y="12" width="1" height="1" fill="#ffffff"/><rect x="1" y="13" width="5" height="1" fill="#ffffff"/><rect x="8" y="13" width="5" height="1" fill="#ffffff"/><rect x="4" y="0" width="5" height="1" fill="#808080"/><rect x="3" y="1" width="1" height="1" fill="#808080"/><rect x="9" y="1" width="1" height="1" fill="#808080"/><rect x="12" y="1" width="1" height="1" fill="#808080"/><rect x="3" y="2" width="1" height="1" fill="#808080"/><rect x="10" y="2" width="3" height="1" fill="#808080"/><rect x="10" y="3" width="3" height="1" fill="#808080"/><rect x="3" y="5" width="2" height="1" fill="#808080"/><rect x="7" y="5" width="2" height="1" fill="#808080"/><rect x="3" y="6" width="2" height="1" fill="#808080"/><rect x="7" y="6" width="2" height="1" fill="#808080"/><rect x="2" y="7" width="8" height="1" fill="#808080"/><rect x="1" y="8" width="1" height="1" fill="#808080"/><rect x="2" y="8" width="1" height="1" fill="#d4d0c8"/><rect x="3" y="8" width="5" height="1" fill="#808080"/><rect x="8" y="8" width="1" height="1" fill="#d4d0c8"/><rect x="9" y="8" width="2" height="1" fill="#808080"/><rect x="0" y="9" width="2" height="1" fill="#808080"/><rect x="2" y="9" width="1" height="1" fill="#d4d0c8"/><rect x="3" y="9" width="2" height="1" fill="#808080"/><rect x="6" y="9" width="2" height="1" fill="#808080"/><rect x="8" y="9" width="1" height="1" fill="#d4d0c8"/><rect x="9" y="9" width="3" height="1" fill="#808080"/><rect x="0" y="10" width="2" height="1" fill="#808080"/><rect x="2" y="10" width="1" height="1" fill="#d4d0c8"/><rect x="3" y="10" width="2" height="1" fill="#808080"/><rect x="6" y="10" width="4" height="1" fill="#808080"/><rect x="10" y="10" width="1" height="1" fill="#d4d0c8"/><rect x="11" y="10" width="1" height="1" fill="#808080"/><rect x="0" y="11" width="5" height="1" fill="#808080"/><rect x="6" y="11" width="4" height="1" fill="#808080"/><rect x="10" y="11" width="1" height="1" fill="#d4d0c8"/><rect x="11" y="11" width="1" height="1" fill="#808080"/><rect x="0" y="12" width="5" height="1" fill="#808080"/><rect x="7" y="12" width="5" height="1" fill="#808080"/></svg>
<svg style="left:469px;top:49px" width="16" height="14" viewBox="0 0 16 14" shape-rendering="crispEdges"><rect x="7" y="1" width="4" height="1" fill="#ffffff"/><rect x="2" y="2" width="1" height="1" fill="#ffffff"/><rect x="4" y="2" width="1" height="1" fill="#ffffff"/><rect x="11" y="2" width="1" height="1" fill="#ffffff"/><rect x="2" y="3" width="2" height="1" fill="#ffffff"/><rect x="12" y="3" width="1" height="1" fill="#ffffff"/><rect x="2" y="4" width="3" height="1" fill="#ffffff"/><rect x="6" y="6" width="2" height="1" fill="#ffffff"/><rect x="10" y="6" width="2" height="1" fill="#ffffff"/><rect x="6" y="7" width="2" height="1" fill="#ffffff"/><rect x="10" y="7" width="2" height="1" fill="#ffffff"/><rect x="5" y="8" width="8" height="1" fill="#ffffff"/><rect x="4" y="9" width="1" height="1" fill="#ffffff"/><rect x="6" y="9" width="5" height="1" fill="#ffffff"/><rect x="12" y="9" width="2" height="1" fill="#ffffff"/><rect x="3" y="10" width="2" height="1" fill="#ffffff"/><rect x="6" y="10" width="2" height="1" fill="#ffffff"/><rect x="9" y="10" width="2" height="1" fill="#ffffff"/><rect x="12" y="10" width="3" height="1" fill="#ffffff"/><rect x="3" y="11" width="2" height="1" fill="#ffffff"/><rect x="6" y="11" width="2" height="1" fill="#ffffff"/><rect x="9" y="11" width="4" height="1" fill="#ffffff"/><rect x="14" y="11" width="1" height="1" fill="#ffffff"/><rect x="3" y="12" width="5" height="1" fill="#ffffff"/><rect x="9" y="12" width="4" height="1" fill="#ffffff"/><rect x="14" y="12" width="1" height="1" fill="#ffffff"/><rect x="3" y="13" width="5" height="1" fill="#ffffff"/><rect x="10" y="13" width="5" height="1" fill="#ffffff"/><rect x="6" y="0" width="4" height="1" fill="#808080"/><rect x="1" y="1" width="1" height="1" fill="#808080"/><rect x="3" y="1" width="1" height="1" fill="#808080"/><rect x="10" y="1" width="1" height="1" fill="#808080"/><rect x="1" y="2" width="2" height="1" fill="#808080"/><rect x="11" y="2" width="1" height="1" fill="#808080"/><rect x="1" y="3" width="3" height="1" fill="#808080"/><rect x="5" y="5" width="2" height="1" fill="#808080"/><rect x="9" y="5" width="2" height="1" fill="#808080"/><rect x="5" y="6" width="2" height="1" fill="#808080"/><rect x="9" y="6" width="2" height="1" fill="#808080"/><rect x="4" y="7" width="8" height="1" fill="#808080"/><rect x="3" y="8" width="1" height="1" fill="#808080"/><rect x="4" y="8" width="1" height="1" fill="#d4d0c8"/><rect x="5" y="8" width="5" height="1" fill="#808080"/><rect x="10" y="8" width="1" height="1" fill="#d4d0c8"/><rect x="11" y="8" width="2" height="1" fill="#808080"/><rect x="2" y="9" width="2" height="1" fill="#808080"/><rect x="4" y="9" width="1" height="1" fill="#d4d0c8"/><rect x="5" y="9" width="2" height="1" fill="#808080"/><rect x="8" y="9" width="2" height="1" fill="#808080"/><rect x="10" y="9" width="1" height="1" fill="#d4d0c8"/><rect x="11" y="9" width="3" height="1" fill="#808080"/><rect x="2" y="10" width="2" height="1" fill="#808080"/><rect x="4" y="10" width="1" height="1" fill="#d4d0c8"/><rect x="5" y="10" width="2" height="1" fill="#808080"/><rect x="8" y="10" width="4" height="1" fill="#808080"/><rect x="12" y="10" width="1" height="1" fill="#d4d0c8"/><rect x="13" y="10" width="1" height="1" fill="#808080"/><rect x="2" y="11" width="5" height="1" fill="#808080"/><rect x="8" y="11" width="4" height="1" fill="#808080"/><rect x="12" y="11" width="1" height="1" fill="#d4d0c8"/><rect x="13" y="11" width="1" height="1" fill="#808080"/><rect x="2" y="12" width="5" height="1" fill="#808080"/><rect x="9" y="12" width="5" height="1" fill="#808080"/></svg>
<div style="left:489px;top:44px;width:1px;height:22px;background:#808080;"></div>
<div style="left:490px;top:44px;width:1px;height:22px;background:#ffffff;"></div>
<svg style="left:497px;top:47px" width="18" height="16" viewBox="0 0 18 16" shape-rendering="crispEdges"><rect x="1" y="0" width="5" height="1" fill="#000000"/><rect x="0" y="1" width="1" height="1" fill="#000000"/><rect x="1" y="1" width="1" height="1" fill="#ffff00"/><rect x="2" y="1" width="1" height="1" fill="#ffffff"/><rect x="3" y="1" width="1" height="1" fill="#ffff00"/><rect x="4" y="1" width="1" height="1" fill="#ffffff"/><rect x="5" y="1" width="1" height="1" fill="#ffff00"/><rect x="6" y="1" width="6" height="1" fill="#000000"/><rect x="0" y="2" width="1" height="1" fill="#000000"/><rect x="1" y="2" width="1" height="1" fill="#ffffff"/><rect x="2" y="2" width="1" height="1" fill="#ffff00"/><rect x="3" y="2" width="1" height="1" fill="#ffffff"/><rect x="4" y="2" width="1" height="1" fill="#ffff00"/><rect x="5" y="2" width="1" height="1" fill="#ffffff"/><rect x="6" y="2" width="1" height="1" fill="#ffff00"/><rect x="7" y="2" width="1" height="1" fill="#ffffff"/><rect x="8" y="2" width="1" height="1" fill="#ffff00"/><rect x="9" y="2" width="1" height="1" fill="#ffffff"/><rect x="10" y="2" width="1" height="1" fill="#ffff00"/><rect x="11" y="2" width="1" height="1" fill="#000000"/><rect x="0" y="3" width="1" height="1" fill="#000000"/><rect x="1" y="3" width="1" height="1" fill="#ffff00"/><rect x="2" y="3" width="1" height="1" fill="#ffffff"/><rect x="3" y="3" width="1" height="1" fill="#ffff00"/><rect x="4" y="3" width="1" height="1" fill="#ffffff"/><rect x="5" y="3" width="1" height="1" fill="#ffff00"/><rect x="6" y="3" width="1" height="1" fill="#ffffff"/><rect x="7" y="3" width="1" height="1" fill="#ffff00"/><rect x="8" y="3" width="1" height="1" fill="#ffffff"/><rect x="9" y="3" width="1" height="1" fill="#ffff00"/><rect x="10" y="3" width="1" height="1" fill="#ffffff"/><rect x="11" y="3" width="1" height="1" fill="#000000"/><rect x="0" y="4" width="1" height="1" fill="#000000"/><rect x="1" y="4" width="1" height="1" fill="#ffffff"/><rect x="2" y="4" width="1" height="1" fill="#ffff00"/><rect x="3" y="4" width="1" height="1" fill="#ffffff"/><rect x="4" y="4" width="1" height="1" fill="#ffff00"/><rect x="5" y="4" width="1" height="1" fill="#ffffff"/><rect x="6" y="4" width="3" height="1" fill="#000000"/><rect x="9" y="4" width="1" height="1" fill="#ffffff"/><rect x="10" y="4" width="1" height="1" fill="#ffff00"/><rect x="11" y="4" width="1" height="1" fill="#000000"/><rect x="13" y="4" width="2" height="1" fill="#000000"/><rect x="0" y="5" width="1" height="1" fill="#000000"/><rect x="1" y="5" width="1" height="1" fill="#ffff00"/><rect x="2" y="5" width="1" height="1" fill="#ffffff"/><rect x="3" y="5" width="1" height="1" fill="#ffff00"/><rect x="4" y="5" width="1" height="1" fill="#ffffff"/><rect x="5" y="5" width="1" height="1" fill="#ffff00"/><rect x="6" y="5" width="3" height="1" fill="#000000"/><rect x="9" y="5" width="1" height="1" fill="#ffff00"/><rect x="10" y="5" width="1" height="1" fill="#ffffff"/><rect x="11" y="5" width="4" height="1" fill="#000000"/><rect x="0" y="6" width="1" height="1" fill="#000000"/><rect x="1" y="6" width="1" height="1" fill="#ffffff"/><rect x="2" y="6" width="1" height="1" fill="#ffff00"/><rect x="3" y="6" width="1" height="1" fill="#ffffff"/><rect x="4" y="6" width="1" height="1" fill="#ffff00"/><rect x="5" y="6" width="1" height="1" fill="#ffffff"/><rect x="6" y="6" width="9" height="1" fill="#000000"/><rect x="0" y="7" width="1" height="1" fill="#000000"/><rect x="1" y="7" width="1" height="1" fill="#ffff00"/><rect x="2" y="7" width="1" height="1" fill="#ffffff"/><rect x="3" y="7" width="1" height="1" fill="#ffff00"/><rect x="4" y="7" width="1" height="1" fill="#ffffff"/><rect x="5" y="7" width="11" height="1" fill="#000000"/><rect x="1" y="8" width="5" height="1" fill="#000000"/><rect x="6" y="8" width="1" height="1" fill="#ffffff"/><rect x="7" y="8" width="4" height="1" fill="#000000"/><rect x="11" y="8" width="1" height="1" fill="#ffffff"/><rect x="12" y="8" width="5" height="1" fill="#000000"/><rect x="5" y="9" width="1" height="1" fill="#000000"/><rect x="6" y="9" width="1" height="1" fill="#ffffff"/><rect x="7" y="9" width="4" height="1" fill="#000000"/><rect x="11" y="9" width="1" height="1" fill="#ffffff"/><rect x="12" y="9" width="5" height="1" fill="#000000"/><rect x="5" y="10" width="12" height="1" fill="#000000"/><rect x="5" y="11" width="5" height="1" fill="#000000"/><rect x="11" y="11" width="6" height="1" fill="#000000"/><rect x="5" y="12" width="1" height="1" fill="#000000"/><rect x="6" y="12" width="1" height="1" fill="#ffffff"/><rect x="7" y="12" width="2" height="1" fill="#000000"/><rect x="12" y="12" width="2" height="1" fill="#000000"/><rect x="14" y="12" width="1" height="1" fill="#ffffff"/><rect x="15" y="12" width="2" height="1" fill="#000000"/><rect x="5" y="13" width="1" height="1" fill="#000000"/><rect x="6" y="13" width="1" height="1" fill="#ffffff"/><rect x="7" y="13" width="2" height="1" fill="#000000"/><rect x="12" y="13" width="2" height="1" fill="#000000"/><rect x="14" y="13" width="1" height="1" fill="#ffffff"/><rect x="15" y="13" width="2" height="1" fill="#000000"/><rect x="5" y="14" width="4" height="1" fill="#000000"/><rect x="12" y="14" width="4" height="1" fill="#000000"/></svg>
<div style="left:4px;top:69px;width:195px;height:1px;background:#ffffff;"></div>
<div style="left:4px;top:69px;width:1px;height:27px;background:#ffffff;"></div>
<div style="left:4px;top:95px;width:195px;height:1px;background:#808080;"></div>
<div style="left:198px;top:69px;width:1px;height:27px;background:#808080;"></div>
<div style="left:7px;top:72px;width:1px;height:21px;background:#ffffff;"></div>
<div style="left:7px;top:72px;width:2px;height:1px;background:#ffffff;"></div>
<div style="left:9px;top:72px;width:1px;height:21px;background:#808080;"></div>
<div style="left:7px;top:92px;width:3px;height:1px;background:#808080;"></div>
<div style="left:13px;top:71px;width:23px;height:22px;background:repeating-conic-gradient(#ffffff 0% 25%, #d4d0c8 0% 50%) 0 0/2px 2px;"></div>
<div style="left:13px;top:71px;width:22px;height:1px;background:#808080;"></div>
<div style="left:13px;top:71px;width:1px;height:21px;background:#808080;"></div>
<div style="left:13px;top:92px;width:23px;height:1px;background:#ffffff;"></div>
<div style="left:35px;top:71px;width:1px;height:22px;background:#ffffff;"></div>
<svg style="left:17px;top:76px" width="17" height="15" viewBox="0 0 17 15" shape-rendering="crispEdges"><rect x="0" y="0" width="14" height="1" fill="#000080"/><rect x="0" y="1" width="1" height="1" fill="#000080"/><rect x="1" y="1" width="1" height="1" fill="#ffffff"/><rect x="2" y="1" width="12" height="1" fill="#000080"/><rect x="0" y="2" width="14" height="1" fill="#000080"/><rect x="0" y="3" width="1" height="1" fill="#000000"/><rect x="1" y="3" width="3" height="1" fill="#ffffff"/><rect x="4" y="3" width="1" height="1" fill="#000000"/><rect x="13" y="3" width="1" height="1" fill="#000000"/><rect x="0" y="4" width="1" height="1" fill="#000000"/><rect x="1" y="4" width="3" height="1" fill="#ffffff"/><rect x="4" y="4" width="1" height="1" fill="#000000"/><rect x="13" y="4" width="1" height="1" fill="#000000"/><rect x="0" y="5" width="1" height="1" fill="#000000"/><rect x="1" y="5" width="3" height="1" fill="#ffffff"/><rect x="4" y="5" width="1" height="1" fill="#000000"/><rect x="7" y="5" width="4" height="1" fill="#ffffff"/><rect x="13" y="5" width="1" height="1" fill="#000000"/><rect x="0" y="6" width="1" height="1" fill="#000000"/><rect x="1" y="6" width="3" height="1" fill="#ffffff"/><rect x="4" y="6" width="1" height="1" fill="#000000"/><rect x="6" y="6" width="1" height="1" fill="#ffffff"/><rect x="7" y="6" width="4" height="1" fill="#ffff00"/><rect x="11" y="6" width="4" height="1" fill="#ffffff"/><rect x="15" y="6" width="1" height="1" fill="#000000"/><rect x="0" y="7" width="1" height="1" fill="#000000"/><rect x="1" y="7" width="3" height="1" fill="#ffffff"/><rect x="4" y="7" width="1" height="1" fill="#000000"/><rect x="6" y="7" width="1" height="1" fill="#ffffff"/><rect x="7" y="7" width="1" height="1" fill="#ffff00"/><rect x="8" y="7" width="1" height="1" fill="#ffffff"/><rect x="9" y="7" width="1" height="1" fill="#ffff00"/><rect x="10" y="7" width="1" height="1" fill="#ffffff"/><rect x="11" y="7" width="1" height="1" fill="#ffff00"/><rect x="12" y="7" width="1" height="1" fill="#ffffff"/><rect x="13" y="7" width="1" height="1" fill="#ffff00"/><rect x="14" y="7" width="1" height="1" fill="#ffffff"/><rect x="15" y="7" width="1" height="1" fill="#000000"/><rect x="0" y="8" width="1" height="1" fill="#000000"/><rect x="1" y="8" width="3" height="1" fill="#ffffff"/><rect x="4" y="8" width="1" height="1" fill="#000000"/><rect x="6" y="8" width="2" height="1" fill="#ffffff"/><rect x="8" y="8" width="1" height="1" fill="#ffff00"/><rect x="9" y="8" width="1" height="1" fill="#ffffff"/><rect x="10" y="8" width="1" height="1" fill="#ffff00"/><rect x="11" y="8" width="1" height="1" fill="#ffffff"/><rect x="12" y="8" width="1" height="1" fill="#ffff00"/><rect x="13" y="8" width="1" height="1" fill="#ffffff"/><rect x="14" y="8" width="1" height="1" fill="#ffff00"/><rect x="15" y="8" width="1" height="1" fill="#000000"/><rect x="0" y="9" width="1" height="1" fill="#000000"/><rect x="1" y="9" width="3" height="1" fill="#ffffff"/><rect x="4" y="9" width="1" height="1" fill="#000000"/><rect x="6" y="9" width="1" height="1" fill="#ffffff"/><rect x="7" y="9" width="1" height="1" fill="#ffff00"/><rect x="8" y="9" width="1" height="1" fill="#ffffff"/><rect x="9" y="9" width="1" height="1" fill="#ffff00"/><rect x="10" y="9" width="1" height="1" fill="#ffffff"/><rect x="11" y="9" width="1" height="1" fill="#ffff00"/><rect x="12" y="9" width="1" height="1" fill="#ffffff"/><rect x="13" y="9" width="1" height="1" fill="#ffff00"/><rect x="14" y="9" width="1" height="1" fill="#ffffff"/><rect x="15" y="9" width="1" height="1" fill="#000000"/><rect x="0" y="10" width="1" height="1" fill="#000000"/><rect x="1" y="10" width="3" height="1" fill="#ffffff"/><rect x="4" y="10" width="1" height="1" fill="#000000"/><rect x="6" y="10" width="2" height="1" fill="#ffffff"/><rect x="8" y="10" width="1" height="1" fill="#ffff00"/><rect x="9" y="10" width="1" height="1" fill="#ffffff"/><rect x="10" y="10" width="1" height="1" fill="#ffff00"/><rect x="11" y="10" width="1" height="1" fill="#ffffff"/><rect x="12" y="10" width="1" height="1" fill="#ffff00"/><rect x="13" y="10" width="1" height="1" fill="#ffffff"/><rect x="14" y="10" width="1" height="1" fill="#ffff00"/><rect x="15" y="10" width="1" height="1" fill="#000000"/><rect x="0" y="11" width="6" height="1" fill="#000000"/><rect x="6" y="11" width="1" height="1" fill="#ffffff"/><rect x="7" y="11" width="1" height="1" fill="#ffff00"/><rect x="8" y="11" width="1" height="1" fill="#ffffff"/><rect x="9" y="11" width="1" height="1" fill="#ffff00"/><rect x="10" y="11" width="1" height="1" fill="#ffffff"/><rect x="11" y="11" width="1" height="1" fill="#ffff00"/><rect x="12" y="11" width="1" height="1" fill="#ffffff"/><rect x="13" y="11" width="1" height="1" fill="#ffff00"/><rect x="14" y="11" width="1" height="1" fill="#ffffff"/><rect x="15" y="11" width="1" height="1" fill="#000000"/><rect x="6" y="12" width="2" height="1" fill="#ffffff"/><rect x="8" y="12" width="1" height="1" fill="#ffff00"/><rect x="9" y="12" width="1" height="1" fill="#ffffff"/><rect x="10" y="12" width="1" height="1" fill="#ffff00"/><rect x="11" y="12" width="1" height="1" fill="#ffffff"/><rect x="12" y="12" width="1" height="1" fill="#ffff00"/><rect x="13" y="12" width="1" height="1" fill="#ffffff"/><rect x="14" y="12" width="1" height="1" fill="#ffff00"/><rect x="15" y="12" width="1" height="1" fill="#000000"/><rect x="6" y="13" width="10" height="1" fill="#000000"/></svg>
<div style="left:36px;top:71px;width:23px;height:22px;background:repeating-conic-gradient(#ffffff 0% 25%, #d4d0c8 0% 50%) 0 0/2px 2px;"></div>
<div style="left:36px;top:71px;width:22px;height:1px;background:#808080;"></div>
<div style="left:36px;top:71px;width:1px;height:21px;background:#808080;"></div>
<div style="left:36px;top:92px;width:23px;height:1px;background:#ffffff;"></div>
<div style="left:58px;top:71px;width:1px;height:22px;background:#ffffff;"></div>
<svg style="left:41px;top:75px" width="16" height="15" viewBox="0 0 16 15" shape-rendering="crispEdges"><rect x="1" y="0" width="14" height="1" fill="#000080"/><rect x="1" y="1" width="14" height="1" fill="#000080"/><rect x="1" y="2" width="1" height="1" fill="#000000"/><rect x="2" y="2" width="12" height="1" fill="#ffffff"/><rect x="14" y="2" width="1" height="1" fill="#000000"/><rect x="1" y="3" width="1" height="1" fill="#000000"/><rect x="2" y="3" width="2" height="1" fill="#ffffff"/><rect x="4" y="3" width="4" height="1" fill="#000000"/><rect x="8" y="3" width="6" height="1" fill="#ffffff"/><rect x="14" y="3" width="1" height="1" fill="#000000"/><rect x="1" y="4" width="1" height="1" fill="#000000"/><rect x="2" y="4" width="1" height="1" fill="#ffffff"/><rect x="3" y="4" width="1" height="1" fill="#000000"/><rect x="4" y="4" width="5" height="1" fill="#808000"/><rect x="9" y="4" width="1" height="1" fill="#000000"/><rect x="10" y="4" width="4" height="1" fill="#ffffff"/><rect x="14" y="4" width="1" height="1" fill="#000000"/><rect x="1" y="5" width="1" height="1" fill="#000000"/><rect x="2" y="5" width="2" height="1" fill="#ffffff"/><rect x="4" y="5" width="2" height="1" fill="#000000"/><rect x="6" y="5" width="5" height="1" fill="#808000"/><rect x="11" y="5" width="1" height="1" fill="#000000"/><rect x="12" y="5" width="2" height="1" fill="#ffffff"/><rect x="14" y="5" width="1" height="1" fill="#000000"/><rect x="1" y="6" width="1" height="1" fill="#000000"/><rect x="2" y="6" width="4" height="1" fill="#ffffff"/><rect x="6" y="6" width="2" height="1" fill="#000000"/><rect x="8" y="6" width="4" height="1" fill="#808000"/><rect x="12" y="6" width="1" height="1" fill="#000000"/><rect x="13" y="6" width="1" height="1" fill="#ffffff"/><rect x="14" y="6" width="1" height="1" fill="#000000"/><rect x="1" y="7" width="1" height="1" fill="#000000"/><rect x="2" y="7" width="3" height="1" fill="#ffffff"/><rect x="5" y="7" width="1" height="1" fill="#000000"/><rect x="6" y="7" width="1" height="1" fill="#800000"/><rect x="7" y="7" width="2" height="1" fill="#000000"/><rect x="9" y="7" width="3" height="1" fill="#808000"/><rect x="12" y="7" width="1" height="1" fill="#000000"/><rect x="13" y="7" width="1" height="1" fill="#ffffff"/><rect x="14" y="7" width="1" height="1" fill="#000000"/><rect x="1" y="8" width="1" height="1" fill="#000000"/><rect x="2" y="8" width="2" height="1" fill="#ffffff"/><rect x="4" y="8" width="1" height="1" fill="#000000"/><rect x="5" y="8" width="1" height="1" fill="#800000"/><rect x="6" y="8" width="1" height="1" fill="#000000"/><rect x="7" y="8" width="2" height="1" fill="#ffffff"/><rect x="9" y="8" width="1" height="1" fill="#000000"/><rect x="10" y="8" width="1" height="1" fill="#808000"/><rect x="11" y="8" width="1" height="1" fill="#000000"/><rect x="12" y="8" width="2" height="1" fill="#ffffff"/><rect x="14" y="8" width="1" height="1" fill="#000000"/><rect x="1" y="9" width="1" height="1" fill="#000000"/><rect x="2" y="9" width="1" height="1" fill="#ffffff"/><rect x="3" y="9" width="1" height="1" fill="#000000"/><rect x="4" y="9" width="1" height="1" fill="#800000"/><rect x="5" y="9" width="1" height="1" fill="#000000"/><rect x="6" y="9" width="4" height="1" fill="#ffffff"/><rect x="10" y="9" width="1" height="1" fill="#000000"/><rect x="11" y="9" width="3" height="1" fill="#ffffff"/><rect x="14" y="9" width="1" height="1" fill="#000000"/><rect x="1" y="10" width="2" height="1" fill="#000000"/><rect x="3" y="10" width="1" height="1" fill="#800000"/><rect x="4" y="10" width="11" height="1" fill="#000000"/><rect x="1" y="11" width="1" height="1" fill="#000000"/><rect x="2" y="11" width="1" height="1" fill="#800000"/><rect x="3" y="11" width="1" height="1" fill="#000000"/><rect x="0" y="12" width="1" height="1" fill="#000000"/><rect x="1" y="12" width="1" height="1" fill="#800000"/><rect x="2" y="12" width="1" height="1" fill="#000000"/><rect x="0" y="13" width="2" height="1" fill="#000000"/></svg>
<svg style="left:64px;top:74px" width="15" height="13" viewBox="0 0 15 13" shape-rendering="crispEdges"><rect x="1" y="1" width="14" height="1" fill="#ffffff"/><rect x="1" y="2" width="14" height="1" fill="#ffffff"/><rect x="1" y="3" width="1" height="1" fill="#ffffff"/><rect x="14" y="3" width="1" height="1" fill="#ffffff"/><rect x="1" y="4" width="1" height="1" fill="#ffffff"/><rect x="3" y="4" width="10" height="1" fill="#ffffff"/><rect x="14" y="4" width="1" height="1" fill="#ffffff"/><rect x="1" y="5" width="1" height="1" fill="#ffffff"/><rect x="4" y="5" width="1" height="1" fill="#ffffff"/><rect x="11" y="5" width="1" height="1" fill="#ffffff"/><rect x="14" y="5" width="1" height="1" fill="#ffffff"/><rect x="1" y="6" width="1" height="1" fill="#ffffff"/><rect x="3" y="6" width="10" height="1" fill="#ffffff"/><rect x="14" y="6" width="1" height="1" fill="#ffffff"/><rect x="1" y="7" width="1" height="1" fill="#ffffff"/><rect x="4" y="7" width="1" height="1" fill="#ffffff"/><rect x="11" y="7" width="1" height="1" fill="#ffffff"/><rect x="14" y="7" width="1" height="1" fill="#ffffff"/><rect x="1" y="8" width="1" height="1" fill="#ffffff"/><rect x="3" y="8" width="10" height="1" fill="#ffffff"/><rect x="14" y="8" width="1" height="1" fill="#ffffff"/><rect x="1" y="9" width="1" height="1" fill="#ffffff"/><rect x="4" y="9" width="1" height="1" fill="#ffffff"/><rect x="11" y="9" width="1" height="1" fill="#ffffff"/><rect x="14" y="9" width="1" height="1" fill="#ffffff"/><rect x="1" y="10" width="1" height="1" fill="#ffffff"/><rect x="3" y="10" width="10" height="1" fill="#ffffff"/><rect x="14" y="10" width="1" height="1" fill="#ffffff"/><rect x="1" y="11" width="1" height="1" fill="#ffffff"/><rect x="14" y="11" width="1" height="1" fill="#ffffff"/><rect x="1" y="12" width="14" height="1" fill="#ffffff"/><rect x="0" y="0" width="14" height="1" fill="#808080"/><rect x="0" y="1" width="14" height="1" fill="#808080"/><rect x="0" y="2" width="1" height="1" fill="#808080"/><rect x="13" y="2" width="1" height="1" fill="#808080"/><rect x="0" y="3" width="1" height="1" fill="#808080"/><rect x="2" y="3" width="10" height="1" fill="#808080"/><rect x="13" y="3" width="1" height="1" fill="#808080"/><rect x="0" y="4" width="1" height="1" fill="#808080"/><rect x="3" y="4" width="1" height="1" fill="#808080"/><rect x="10" y="4" width="1" height="1" fill="#808080"/><rect x="13" y="4" width="1" height="1" fill="#808080"/><rect x="0" y="5" width="1" height="1" fill="#808080"/><rect x="2" y="5" width="10" height="1" fill="#808080"/><rect x="13" y="5" width="1" height="1" fill="#808080"/><rect x="0" y="6" width="1" height="1" fill="#808080"/><rect x="3" y="6" width="1" height="1" fill="#808080"/><rect x="10" y="6" width="1" height="1" fill="#808080"/><rect x="13" y="6" width="1" height="1" fill="#808080"/><rect x="0" y="7" width="1" height="1" fill="#808080"/><rect x="2" y="7" width="10" height="1" fill="#808080"/><rect x="13" y="7" width="1" height="1" fill="#808080"/><rect x="0" y="8" width="1" height="1" fill="#808080"/><rect x="3" y="8" width="1" height="1" fill="#808080"/><rect x="10" y="8" width="1" height="1" fill="#808080"/><rect x="13" y="8" width="1" height="1" fill="#808080"/><rect x="0" y="9" width="1" height="1" fill="#808080"/><rect x="2" y="9" width="10" height="1" fill="#808080"/><rect x="13" y="9" width="1" height="1" fill="#808080"/><rect x="0" y="10" width="1" height="1" fill="#808080"/><rect x="13" y="10" width="1" height="1" fill="#808080"/><rect x="0" y="11" width="14" height="1" fill="#808080"/></svg>
<svg style="left:87px;top:74px" width="15" height="13" viewBox="0 0 15 13" shape-rendering="crispEdges"><rect x="1" y="1" width="14" height="1" fill="#ffffff"/><rect x="1" y="2" width="14" height="1" fill="#ffffff"/><rect x="1" y="3" width="1" height="1" fill="#ffffff"/><rect x="14" y="3" width="1" height="1" fill="#ffffff"/><rect x="1" y="4" width="1" height="1" fill="#ffffff"/><rect x="3" y="4" width="2" height="1" fill="#ffffff"/><rect x="6" y="4" width="2" height="1" fill="#ffffff"/><rect x="9" y="4" width="2" height="1" fill="#ffffff"/><rect x="14" y="4" width="1" height="1" fill="#ffffff"/><rect x="1" y="5" width="1" height="1" fill="#ffffff"/><rect x="14" y="5" width="1" height="1" fill="#ffffff"/><rect x="1" y="6" width="1" height="1" fill="#ffffff"/><rect x="4" y="6" width="2" height="1" fill="#ffffff"/><rect x="8" y="6" width="1" height="1" fill="#ffffff"/><rect x="11" y="6" width="1" height="1" fill="#ffffff"/><rect x="14" y="6" width="1" height="1" fill="#ffffff"/><rect x="1" y="7" width="1" height="1" fill="#ffffff"/><rect x="3" y="7" width="1" height="1" fill="#ffffff"/><rect x="6" y="7" width="1" height="1" fill="#ffffff"/><rect x="9" y="7" width="2" height="1" fill="#ffffff"/><rect x="14" y="7" width="1" height="1" fill="#ffffff"/><rect x="1" y="8" width="1" height="1" fill="#ffffff"/><rect x="3" y="8" width="1" height="1" fill="#ffffff"/><rect x="6" y="8" width="1" height="1" fill="#ffffff"/><rect x="9" y="8" width="2" height="1" fill="#ffffff"/><rect x="14" y="8" width="1" height="1" fill="#ffffff"/><rect x="1" y="9" width="1" height="1" fill="#ffffff"/><rect x="4" y="9" width="2" height="1" fill="#ffffff"/><rect x="8" y="9" width="1" height="1" fill="#ffffff"/><rect x="11" y="9" width="1" height="1" fill="#ffffff"/><rect x="14" y="9" width="1" height="1" fill="#ffffff"/><rect x="1" y="10" width="1" height="1" fill="#ffffff"/><rect x="14" y="10" width="1" height="1" fill="#ffffff"/><rect x="1" y="11" width="1" height="1" fill="#ffffff"/><rect x="14" y="11" width="1" height="1" fill="#ffffff"/><rect x="1" y="12" width="14" height="1" fill="#ffffff"/><rect x="0" y="0" width="14" height="1" fill="#808080"/><rect x="0" y="1" width="14" height="1" fill="#808080"/><rect x="0" y="2" width="1" height="1" fill="#808080"/><rect x="13" y="2" width="1" height="1" fill="#808080"/><rect x="0" y="3" width="1" height="1" fill="#808080"/><rect x="2" y="3" width="2" height="1" fill="#808080"/><rect x="5" y="3" width="2" height="1" fill="#808080"/><rect x="8" y="3" width="2" height="1" fill="#808080"/><rect x="13" y="3" width="1" height="1" fill="#808080"/><rect x="0" y="4" width="1" height="1" fill="#808080"/><rect x="13" y="4" width="1" height="1" fill="#808080"/><rect x="0" y="5" width="1" height="1" fill="#808080"/><rect x="3" y="5" width="2" height="1" fill="#808080"/><rect x="7" y="5" width="1" height="1" fill="#808080"/><rect x="10" y="5" width="1" height="1" fill="#808080"/><rect x="13" y="5" width="1" height="1" fill="#808080"/><rect x="0" y="6" width="1" height="1" fill="#808080"/><rect x="2" y="6" width="1" height="1" fill="#808080"/><rect x="5" y="6" width="1" height="1" fill="#808080"/><rect x="8" y="6" width="2" height="1" fill="#808080"/><rect x="13" y="6" width="1" height="1" fill="#808080"/><rect x="0" y="7" width="1" height="1" fill="#808080"/><rect x="2" y="7" width="1" height="1" fill="#808080"/><rect x="5" y="7" width="1" height="1" fill="#808080"/><rect x="8" y="7" width="2" height="1" fill="#808080"/><rect x="13" y="7" width="1" height="1" fill="#808080"/><rect x="0" y="8" width="1" height="1" fill="#808080"/><rect x="3" y="8" width="2" height="1" fill="#808080"/><rect x="7" y="8" width="1" height="1" fill="#808080"/><rect x="10" y="8" width="1" height="1" fill="#808080"/><rect x="13" y="8" width="1" height="1" fill="#808080"/><rect x="0" y="9" width="1" height="1" fill="#808080"/><rect x="13" y="9" width="1" height="1" fill="#808080"/><rect x="0" y="10" width="1" height="1" fill="#808080"/><rect x="13" y="10" width="1" height="1" fill="#808080"/><rect x="0" y="11" width="14" height="1" fill="#808080"/></svg>
<svg style="left:109px;top:74px" width="16" height="15" viewBox="0 0 16 15" shape-rendering="crispEdges"><rect x="2" y="1" width="14" height="1" fill="#ffffff"/><rect x="2" y="2" width="14" height="1" fill="#ffffff"/><rect x="2" y="3" width="1" height="1" fill="#ffffff"/><rect x="15" y="3" width="1" height="1" fill="#ffffff"/><rect x="2" y="4" width="1" height="1" fill="#ffffff"/><rect x="4" y="4" width="3" height="1" fill="#ffffff"/><rect x="8" y="4" width="3" height="1" fill="#ffffff"/><rect x="15" y="4" width="1" height="1" fill="#ffffff"/><rect x="2" y="5" width="1" height="1" fill="#ffffff"/><rect x="15" y="5" width="1" height="1" fill="#ffffff"/><rect x="2" y="6" width="1" height="1" fill="#ffffff"/><rect x="15" y="6" width="1" height="1" fill="#ffffff"/><rect x="2" y="7" width="3" height="1" fill="#ffffff"/><rect x="9" y="7" width="3" height="1" fill="#ffffff"/><rect x="15" y="7" width="1" height="1" fill="#ffffff"/><rect x="1" y="8" width="5" height="1" fill="#ffffff"/><rect x="8" y="8" width="5" height="1" fill="#ffffff"/><rect x="15" y="8" width="1" height="1" fill="#ffffff"/><rect x="1" y="9" width="12" height="1" fill="#ffffff"/><rect x="15" y="9" width="1" height="1" fill="#ffffff"/><rect x="1" y="10" width="5" height="1" fill="#ffffff"/><rect x="8" y="10" width="5" height="1" fill="#ffffff"/><rect x="15" y="10" width="1" height="1" fill="#ffffff"/><rect x="2" y="11" width="3" height="1" fill="#ffffff"/><rect x="6" y="11" width="2" height="1" fill="#ffffff"/><rect x="9" y="11" width="3" height="1" fill="#ffffff"/><rect x="15" y="11" width="1" height="1" fill="#ffffff"/><rect x="2" y="12" width="14" height="1" fill="#ffffff"/><rect x="6" y="13" width="2" height="1" fill="#ffffff"/><rect x="1" y="0" width="14" height="1" fill="#808080"/><rect x="1" y="1" width="14" height="1" fill="#808080"/><rect x="1" y="2" width="1" height="1" fill="#808080"/><rect x="14" y="2" width="1" height="1" fill="#808080"/><rect x="1" y="3" width="1" height="1" fill="#808080"/><rect x="3" y="3" width="3" height="1" fill="#808080"/><rect x="7" y="3" width="3" height="1" fill="#808080"/><rect x="14" y="3" width="1" height="1" fill="#808080"/><rect x="1" y="4" width="1" height="1" fill="#808080"/><rect x="14" y="4" width="1" height="1" fill="#808080"/><rect x="1" y="5" width="1" height="1" fill="#808080"/><rect x="14" y="5" width="1" height="1" fill="#808080"/><rect x="1" y="6" width="3" height="1" fill="#808080"/><rect x="8" y="6" width="3" height="1" fill="#808080"/><rect x="14" y="6" width="1" height="1" fill="#808080"/><rect x="0" y="7" width="5" height="1" fill="#808080"/><rect x="7" y="7" width="5" height="1" fill="#808080"/><rect x="14" y="7" width="1" height="1" fill="#808080"/><rect x="0" y="8" width="12" height="1" fill="#808080"/><rect x="14" y="8" width="1" height="1" fill="#808080"/><rect x="0" y="9" width="5" height="1" fill="#808080"/><rect x="7" y="9" width="5" height="1" fill="#808080"/><rect x="14" y="9" width="1" height="1" fill="#808080"/><rect x="1" y="10" width="3" height="1" fill="#808080"/><rect x="5" y="10" width="2" height="1" fill="#808080"/><rect x="8" y="10" width="3" height="1" fill="#808080"/><rect x="14" y="10" width="1" height="1" fill="#808080"/><rect x="1" y="11" width="14" height="1" fill="#808080"/><rect x="5" y="12" width="2" height="1" fill="#808080"/></svg>
<svg style="left:131px;top:74px" width="17" height="16" viewBox="0 0 17 16" shape-rendering="crispEdges"><rect x="1" y="1" width="16" height="1" fill="#ffffff"/><rect x="1" y="2" width="5" height="1" fill="#ffffff"/><rect x="16" y="2" width="1" height="1" fill="#ffffff"/><rect x="1" y="3" width="2" height="1" fill="#ffffff"/><rect x="5" y="3" width="1" height="1" fill="#ffffff"/><rect x="16" y="3" width="1" height="1" fill="#ffffff"/><rect x="1" y="4" width="9" height="1" fill="#ffffff"/><rect x="16" y="4" width="1" height="1" fill="#ffffff"/><rect x="1" y="5" width="1" height="1" fill="#ffffff"/><rect x="5" y="5" width="1" height="1" fill="#ffffff"/><rect x="9" y="5" width="1" height="1" fill="#ffffff"/><rect x="16" y="5" width="1" height="1" fill="#ffffff"/><rect x="1" y="6" width="1" height="1" fill="#ffffff"/><rect x="5" y="6" width="1" height="1" fill="#ffffff"/><rect x="9" y="6" width="1" height="1" fill="#ffffff"/><rect x="16" y="6" width="1" height="1" fill="#ffffff"/><rect x="1" y="7" width="1" height="1" fill="#ffffff"/><rect x="5" y="7" width="8" height="1" fill="#ffffff"/><rect x="16" y="7" width="1" height="1" fill="#ffffff"/><rect x="1" y="8" width="1" height="1" fill="#ffffff"/><rect x="8" y="8" width="1" height="1" fill="#ffffff"/><rect x="12" y="8" width="1" height="1" fill="#ffffff"/><rect x="16" y="8" width="1" height="1" fill="#ffffff"/><rect x="1" y="9" width="1" height="1" fill="#ffffff"/><rect x="8" y="9" width="1" height="1" fill="#ffffff"/><rect x="12" y="9" width="1" height="1" fill="#ffffff"/><rect x="16" y="9" width="1" height="1" fill="#ffffff"/><rect x="2" y="10" width="1" height="1" fill="#ffffff"/><rect x="8" y="10" width="9" height="1" fill="#ffffff"/><rect x="2" y="11" width="1" height="1" fill="#ffffff"/><rect x="11" y="11" width="1" height="1" fill="#ffffff"/><rect x="16" y="11" width="1" height="1" fill="#ffffff"/><rect x="3" y="12" width="1" height="1" fill="#ffffff"/><rect x="11" y="12" width="1" height="1" fill="#ffffff"/><rect x="16" y="12" width="1" height="1" fill="#ffffff"/><rect x="3" y="13" width="1" height="1" fill="#ffffff"/><rect x="5" y="13" width="1" height="1" fill="#ffffff"/><rect x="11" y="13" width="1" height="1" fill="#ffffff"/><rect x="16" y="13" width="1" height="1" fill="#ffffff"/><rect x="4" y="14" width="2" height="1" fill="#ffffff"/><rect x="11" y="14" width="6" height="1" fill="#ffffff"/><rect x="3" y="15" width="3" height="1" fill="#ffffff"/><rect x="0" y="0" width="16" height="1" fill="#808080"/><rect x="0" y="1" width="5" height="1" fill="#808080"/><rect x="15" y="1" width="1" height="1" fill="#808080"/><rect x="0" y="2" width="2" height="1" fill="#808080"/><rect x="4" y="2" width="1" height="1" fill="#808080"/><rect x="15" y="2" width="1" height="1" fill="#808080"/><rect x="0" y="3" width="9" height="1" fill="#808080"/><rect x="15" y="3" width="1" height="1" fill="#808080"/><rect x="0" y="4" width="1" height="1" fill="#808080"/><rect x="4" y="4" width="1" height="1" fill="#808080"/><rect x="8" y="4" width="1" height="1" fill="#808080"/><rect x="15" y="4" width="1" height="1" fill="#808080"/><rect x="0" y="5" width="1" height="1" fill="#808080"/><rect x="4" y="5" width="1" height="1" fill="#808080"/><rect x="8" y="5" width="1" height="1" fill="#808080"/><rect x="15" y="5" width="1" height="1" fill="#808080"/><rect x="0" y="6" width="1" height="1" fill="#808080"/><rect x="4" y="6" width="8" height="1" fill="#808080"/><rect x="15" y="6" width="1" height="1" fill="#808080"/><rect x="0" y="7" width="1" height="1" fill="#808080"/><rect x="7" y="7" width="1" height="1" fill="#808080"/><rect x="11" y="7" width="1" height="1" fill="#808080"/><rect x="15" y="7" width="1" height="1" fill="#808080"/><rect x="0" y="8" width="1" height="1" fill="#808080"/><rect x="7" y="8" width="1" height="1" fill="#808080"/><rect x="11" y="8" width="1" height="1" fill="#808080"/><rect x="15" y="8" width="1" height="1" fill="#808080"/><rect x="1" y="9" width="1" height="1" fill="#808080"/><rect x="7" y="9" width="9" height="1" fill="#808080"/><rect x="1" y="10" width="1" height="1" fill="#808080"/><rect x="10" y="10" width="1" height="1" fill="#808080"/><rect x="15" y="10" width="1" height="1" fill="#808080"/><rect x="2" y="11" width="1" height="1" fill="#808080"/><rect x="10" y="11" width="1" height="1" fill="#808080"/><rect x="15" y="11" width="1" height="1" fill="#808080"/><rect x="2" y="12" width="1" height="1" fill="#808080"/><rect x="4" y="12" width="1" height="1" fill="#808080"/><rect x="10" y="12" width="1" height="1" fill="#808080"/><rect x="15" y="12" width="1" height="1" fill="#808080"/><rect x="3" y="13" width="2" height="1" fill="#808080"/><rect x="10" y="13" width="6" height="1" fill="#808080"/><rect x="2" y="14" width="3" height="1" fill="#808080"/></svg>
<svg style="left:154px;top:74px" width="18" height="15" viewBox="0 0 18 15" shape-rendering="crispEdges"><rect x="14" y="0" width="1" height="1" fill="#000000"/><rect x="2" y="1" width="12" height="1" fill="#808080"/><rect x="14" y="1" width="1" height="1" fill="#000000"/><rect x="2" y="2" width="1" height="1" fill="#808080"/><rect x="3" y="2" width="3" height="1" fill="#ffffff"/><rect x="6" y="2" width="8" height="1" fill="#00ffff"/><rect x="14" y="2" width="1" height="1" fill="#000000"/><rect x="2" y="3" width="1" height="1" fill="#808080"/><rect x="3" y="3" width="1" height="1" fill="#00ffff"/><rect x="4" y="3" width="1" height="1" fill="#000000"/><rect x="5" y="3" width="1" height="1" fill="#00ffff"/><rect x="6" y="3" width="1" height="1" fill="#000000"/><rect x="7" y="3" width="1" height="1" fill="#00ffff"/><rect x="8" y="3" width="1" height="1" fill="#000000"/><rect x="9" y="3" width="5" height="1" fill="#00ffff"/><rect x="14" y="3" width="1" height="1" fill="#000000"/><rect x="2" y="4" width="1" height="1" fill="#808080"/><rect x="3" y="4" width="11" height="1" fill="#00ffff"/><rect x="14" y="4" width="1" height="1" fill="#000000"/><rect x="2" y="5" width="1" height="1" fill="#808080"/><rect x="3" y="5" width="1" height="1" fill="#00ffff"/><rect x="4" y="5" width="1" height="1" fill="#000000"/><rect x="5" y="5" width="1" height="1" fill="#00ffff"/><rect x="6" y="5" width="1" height="1" fill="#000000"/><rect x="7" y="5" width="1" height="1" fill="#00ffff"/><rect x="8" y="5" width="1" height="1" fill="#000000"/><rect x="9" y="5" width="1" height="1" fill="#00ffff"/><rect x="10" y="5" width="1" height="1" fill="#000000"/><rect x="11" y="5" width="3" height="1" fill="#00ffff"/><rect x="14" y="5" width="1" height="1" fill="#000000"/><rect x="2" y="6" width="1" height="1" fill="#808080"/><rect x="3" y="6" width="11" height="1" fill="#00ffff"/><rect x="14" y="6" width="1" height="1" fill="#000000"/><rect x="2" y="7" width="1" height="1" fill="#808080"/><rect x="3" y="7" width="1" height="1" fill="#00ffff"/><rect x="4" y="7" width="1" height="1" fill="#000000"/><rect x="5" y="7" width="1" height="1" fill="#00ffff"/><rect x="6" y="7" width="1" height="1" fill="#000000"/><rect x="7" y="7" width="7" height="1" fill="#00ffff"/><rect x="14" y="7" width="1" height="1" fill="#000000"/><rect x="2" y="8" width="1" height="1" fill="#808080"/><rect x="3" y="8" width="11" height="1" fill="#00ffff"/><rect x="14" y="8" width="1" height="1" fill="#000000"/><rect x="2" y="9" width="13" height="1" fill="#000000"/><rect x="14" y="10" width="1" height="1" fill="#000000"/><rect x="1" y="11" width="1" height="1" fill="#000000"/><rect x="2" y="11" width="1" height="1" fill="#ffffff"/><rect x="3" y="11" width="2" height="1" fill="#000000"/><rect x="5" y="11" width="1" height="1" fill="#ffffff"/><rect x="6" y="11" width="1" height="1" fill="#000000"/><rect x="7" y="11" width="1" height="1" fill="#ffffff"/><rect x="8" y="11" width="2" height="1" fill="#000000"/><rect x="10" y="11" width="1" height="1" fill="#ffffff"/><rect x="11" y="11" width="1" height="1" fill="#000000"/><rect x="12" y="11" width="1" height="1" fill="#ffffff"/><rect x="13" y="11" width="2" height="1" fill="#000000"/><rect x="0" y="12" width="16" height="1" fill="#000000"/><rect x="0" y="13" width="16" height="1" fill="#000000"/></svg>
<svg style="left:178px;top:74px" width="15" height="14" viewBox="0 0 15 14" shape-rendering="crispEdges"><rect x="1" y="1" width="14" height="1" fill="#ffffff"/><rect x="1" y="2" width="14" height="1" fill="#ffffff"/><rect x="1" y="3" width="1" height="1" fill="#ffffff"/><rect x="14" y="3" width="1" height="1" fill="#ffffff"/><rect x="1" y="4" width="1" height="1" fill="#ffffff"/><rect x="9" y="4" width="1" height="1" fill="#ffffff"/><rect x="11" y="4" width="1" height="1" fill="#ffffff"/><rect x="14" y="4" width="1" height="1" fill="#ffffff"/><rect x="1" y="5" width="1" height="1" fill="#ffffff"/><rect x="3" y="5" width="5" height="1" fill="#ffffff"/><rect x="10" y="5" width="1" height="1" fill="#ffffff"/><rect x="14" y="5" width="1" height="1" fill="#ffffff"/><rect x="1" y="6" width="1" height="1" fill="#ffffff"/><rect x="14" y="6" width="1" height="1" fill="#ffffff"/><rect x="1" y="7" width="1" height="1" fill="#ffffff"/><rect x="14" y="7" width="1" height="1" fill="#ffffff"/><rect x="1" y="8" width="1" height="1" fill="#ffffff"/><rect x="3" y="8" width="5" height="1" fill="#ffffff"/><rect x="14" y="8" width="1" height="1" fill="#ffffff"/><rect x="1" y="9" width="1" height="1" fill="#ffffff"/><rect x="9" y="9" width="1" height="1" fill="#ffffff"/><rect x="11" y="9" width="1" height="1" fill="#ffffff"/><rect x="14" y="9" width="1" height="1" fill="#ffffff"/><rect x="1" y="10" width="1" height="1" fill="#ffffff"/><rect x="3" y="10" width="5" height="1" fill="#ffffff"/><rect x="10" y="10" width="1" height="1" fill="#ffffff"/><rect x="14" y="10" width="1" height="1" fill="#ffffff"/><rect x="1" y="11" width="1" height="1" fill="#ffffff"/><rect x="14" y="11" width="1" height="1" fill="#ffffff"/><rect x="1" y="12" width="14" height="1" fill="#ffffff"/><rect x="1" y="13" width="14" height="1" fill="#ffffff"/><rect x="0" y="0" width="14" height="1" fill="#808080"/><rect x="0" y="1" width="14" height="1" fill="#808080"/><rect x="0" y="2" width="1" height="1" fill="#808080"/><rect x="13" y="2" width="1" height="1" fill="#808080"/><rect x="0" y="3" width="1" height="1" fill="#808080"/><rect x="8" y="3" width="1" height="1" fill="#808080"/><rect x="10" y="3" width="1" height="1" fill="#808080"/><rect x="13" y="3" width="1" height="1" fill="#808080"/><rect x="0" y="4" width="1" height="1" fill="#808080"/><rect x="2" y="4" width="5" height="1" fill="#808080"/><rect x="9" y="4" width="1" height="1" fill="#808080"/><rect x="13" y="4" width="1" height="1" fill="#808080"/><rect x="0" y="5" width="1" height="1" fill="#808080"/><rect x="13" y="5" width="1" height="1" fill="#808080"/><rect x="0" y="6" width="1" height="1" fill="#808080"/><rect x="13" y="6" width="1" height="1" fill="#808080"/><rect x="0" y="7" width="1" height="1" fill="#808080"/><rect x="2" y="7" width="5" height="1" fill="#808080"/><rect x="13" y="7" width="1" height="1" fill="#808080"/><rect x="0" y="8" width="1" height="1" fill="#808080"/><rect x="8" y="8" width="1" height="1" fill="#808080"/><rect x="10" y="8" width="1" height="1" fill="#808080"/><rect x="13" y="8" width="1" height="1" fill="#808080"/><rect x="0" y="9" width="1" height="1" fill="#808080"/><rect x="2" y="9" width="5" height="1" fill="#808080"/><rect x="9" y="9" width="1" height="1" fill="#808080"/><rect x="13" y="9" width="1" height="1" fill="#808080"/><rect x="0" y="10" width="1" height="1" fill="#808080"/><rect x="13" y="10" width="1" height="1" fill="#808080"/><rect x="0" y="11" width="14" height="1" fill="#808080"/><rect x="0" y="12" width="14" height="1" fill="#808080"/></svg>
<div style="left:199px;top:69px;width:188px;height:1px;background:#ffffff;"></div>
<div style="left:199px;top:69px;width:1px;height:27px;background:#ffffff;"></div>
<div style="left:199px;top:95px;width:188px;height:1px;background:#808080;"></div>
<div style="left:386px;top:69px;width:1px;height:27px;background:#808080;"></div>
<div style="left:202px;top:72px;width:1px;height:21px;background:#ffffff;"></div>
<div style="left:202px;top:72px;width:2px;height:1px;background:#ffffff;"></div>
<div style="left:204px;top:72px;width:1px;height:21px;background:#808080;"></div>
<div style="left:202px;top:92px;width:3px;height:1px;background:#808080;"></div>
<svg style="left:211px;top:74px" width="18" height="16" viewBox="0 0 18 16" shape-rendering="crispEdges"><rect x="0" y="0" width="11" height="1" fill="#808080"/><rect x="0" y="1" width="1" height="1" fill="#808080"/><rect x="10" y="1" width="1" height="1" fill="#808080"/><rect x="0" y="2" width="1" height="1" fill="#808080"/><rect x="10" y="2" width="1" height="1" fill="#808080"/><rect x="13" y="2" width="1" height="1" fill="#000080"/><rect x="0" y="3" width="1" height="1" fill="#808080"/><rect x="2" y="3" width="3" height="1" fill="#000000"/><rect x="10" y="3" width="1" height="1" fill="#808080"/><rect x="13" y="3" width="1" height="1" fill="#000080"/><rect x="0" y="4" width="1" height="1" fill="#808080"/><rect x="10" y="4" width="1" height="1" fill="#808080"/><rect x="13" y="4" width="1" height="1" fill="#000080"/><rect x="0" y="5" width="1" height="1" fill="#808080"/><rect x="3" y="5" width="7" height="1" fill="#000000"/><rect x="10" y="5" width="1" height="1" fill="#808080"/><rect x="13" y="5" width="1" height="1" fill="#000080"/><rect x="0" y="6" width="1" height="1" fill="#808080"/><rect x="10" y="6" width="1" height="1" fill="#808080"/><rect x="13" y="6" width="1" height="1" fill="#000080"/><rect x="0" y="7" width="1" height="1" fill="#808080"/><rect x="3" y="7" width="7" height="1" fill="#000000"/><rect x="10" y="7" width="1" height="1" fill="#808080"/><rect x="13" y="7" width="1" height="1" fill="#000080"/><rect x="0" y="8" width="1" height="1" fill="#808080"/><rect x="10" y="8" width="1" height="1" fill="#808080"/><rect x="13" y="8" width="1" height="1" fill="#000080"/><rect x="0" y="9" width="1" height="1" fill="#808080"/><rect x="3" y="9" width="7" height="1" fill="#000000"/><rect x="10" y="9" width="1" height="1" fill="#808080"/><rect x="13" y="9" width="1" height="1" fill="#000080"/><rect x="0" y="10" width="1" height="1" fill="#808080"/><rect x="10" y="10" width="1" height="1" fill="#808080"/><rect x="13" y="10" width="1" height="1" fill="#000080"/><rect x="0" y="11" width="1" height="1" fill="#808080"/><rect x="3" y="11" width="7" height="1" fill="#000000"/><rect x="10" y="11" width="1" height="1" fill="#808080"/><rect x="11" y="11" width="5" height="1" fill="#000080"/><rect x="0" y="12" width="1" height="1" fill="#808080"/><rect x="10" y="12" width="1" height="1" fill="#808080"/><rect x="12" y="12" width="3" height="1" fill="#000080"/><rect x="0" y="13" width="1" height="1" fill="#808080"/><rect x="10" y="13" width="1" height="1" fill="#808080"/><rect x="13" y="13" width="1" height="1" fill="#000080"/><rect x="0" y="14" width="11" height="1" fill="#808080"/></svg>
<svg style="left:234px;top:74px" width="18" height="16" viewBox="0 0 18 16" shape-rendering="crispEdges"><rect x="1" y="1" width="13" height="1" fill="#ffffff"/><rect x="1" y="2" width="1" height="1" fill="#ffffff"/><rect x="11" y="2" width="1" height="1" fill="#ffffff"/><rect x="14" y="2" width="1" height="1" fill="#ffffff"/><rect x="1" y="3" width="1" height="1" fill="#ffffff"/><rect x="11" y="3" width="1" height="1" fill="#ffffff"/><rect x="14" y="3" width="1" height="1" fill="#ffffff"/><rect x="1" y="4" width="1" height="1" fill="#ffffff"/><rect x="3" y="4" width="3" height="1" fill="#ffffff"/><rect x="11" y="4" width="1" height="1" fill="#ffffff"/><rect x="14" y="4" width="1" height="1" fill="#ffffff"/><rect x="1" y="5" width="1" height="1" fill="#ffffff"/><rect x="11" y="5" width="1" height="1" fill="#ffffff"/><rect x="14" y="5" width="1" height="1" fill="#ffffff"/><rect x="1" y="6" width="1" height="1" fill="#ffffff"/><rect x="4" y="6" width="6" height="1" fill="#ffffff"/><rect x="11" y="6" width="1" height="1" fill="#ffffff"/><rect x="14" y="6" width="4" height="1" fill="#ffffff"/><rect x="1" y="7" width="1" height="1" fill="#ffffff"/><rect x="11" y="7" width="1" height="1" fill="#ffffff"/><rect x="14" y="7" width="3" height="1" fill="#ffffff"/><rect x="1" y="8" width="1" height="1" fill="#ffffff"/><rect x="4" y="8" width="6" height="1" fill="#ffffff"/><rect x="11" y="8" width="1" height="1" fill="#ffffff"/><rect x="14" y="8" width="2" height="1" fill="#ffffff"/><rect x="1" y="9" width="1" height="1" fill="#ffffff"/><rect x="11" y="9" width="1" height="1" fill="#ffffff"/><rect x="14" y="9" width="1" height="1" fill="#ffffff"/><rect x="1" y="10" width="1" height="1" fill="#ffffff"/><rect x="4" y="10" width="6" height="1" fill="#ffffff"/><rect x="11" y="10" width="1" height="1" fill="#ffffff"/><rect x="14" y="10" width="1" height="1" fill="#ffffff"/><rect x="1" y="11" width="1" height="1" fill="#ffffff"/><rect x="11" y="11" width="1" height="1" fill="#ffffff"/><rect x="14" y="11" width="1" height="1" fill="#ffffff"/><rect x="1" y="12" width="1" height="1" fill="#ffffff"/><rect x="4" y="12" width="6" height="1" fill="#ffffff"/><rect x="11" y="12" width="1" height="1" fill="#ffffff"/><rect x="14" y="12" width="1" height="1" fill="#ffffff"/><rect x="1" y="13" width="1" height="1" fill="#ffffff"/><rect x="11" y="13" width="1" height="1" fill="#ffffff"/><rect x="14" y="13" width="1" height="1" fill="#ffffff"/><rect x="1" y="14" width="1" height="1" fill="#ffffff"/><rect x="11" y="14" width="1" height="1" fill="#ffffff"/><rect x="14" y="14" width="1" height="1" fill="#ffffff"/><rect x="1" y="15" width="13" height="1" fill="#ffffff"/><rect x="0" y="0" width="13" height="1" fill="#808080"/><rect x="0" y="1" width="1" height="1" fill="#808080"/><rect x="10" y="1" width="1" height="1" fill="#808080"/><rect x="13" y="1" width="1" height="1" fill="#808080"/><rect x="0" y="2" width="1" height="1" fill="#808080"/><rect x="10" y="2" width="1" height="1" fill="#808080"/><rect x="13" y="2" width="1" height="1" fill="#808080"/><rect x="0" y="3" width="1" height="1" fill="#808080"/><rect x="2" y="3" width="3" height="1" fill="#808080"/><rect x="10" y="3" width="1" height="1" fill="#808080"/><rect x="13" y="3" width="1" height="1" fill="#808080"/><rect x="0" y="4" width="1" height="1" fill="#808080"/><rect x="10" y="4" width="1" height="1" fill="#808080"/><rect x="13" y="4" width="1" height="1" fill="#808080"/><rect x="0" y="5" width="1" height="1" fill="#808080"/><rect x="3" y="5" width="6" height="1" fill="#808080"/><rect x="10" y="5" width="1" height="1" fill="#808080"/><rect x="13" y="5" width="4" height="1" fill="#808080"/><rect x="0" y="6" width="1" height="1" fill="#808080"/><rect x="10" y="6" width="1" height="1" fill="#808080"/><rect x="13" y="6" width="3" height="1" fill="#808080"/><rect x="0" y="7" width="1" height="1" fill="#808080"/><rect x="3" y="7" width="6" height="1" fill="#808080"/><rect x="10" y="7" width="1" height="1" fill="#808080"/><rect x="13" y="7" width="2" height="1" fill="#808080"/><rect x="0" y="8" width="1" height="1" fill="#808080"/><rect x="10" y="8" width="1" height="1" fill="#808080"/><rect x="13" y="8" width="1" height="1" fill="#808080"/><rect x="0" y="9" width="1" height="1" fill="#808080"/><rect x="3" y="9" width="6" height="1" fill="#808080"/><rect x="10" y="9" width="1" height="1" fill="#808080"/><rect x="13" y="9" width="1" height="1" fill="#808080"/><rect x="0" y="10" width="1" height="1" fill="#808080"/><rect x="10" y="10" width="1" height="1" fill="#808080"/><rect x="13" y="10" width="1" height="1" fill="#808080"/><rect x="0" y="11" width="1" height="1" fill="#808080"/><rect x="3" y="11" width="6" height="1" fill="#808080"/><rect x="10" y="11" width="1" height="1" fill="#808080"/><rect x="13" y="11" width="1" height="1" fill="#808080"/><rect x="0" y="12" width="1" height="1" fill="#808080"/><rect x="10" y="12" width="1" height="1" fill="#808080"/><rect x="13" y="12" width="1" height="1" fill="#808080"/><rect x="0" y="13" width="1" height="1" fill="#808080"/><rect x="10" y="13" width="1" height="1" fill="#808080"/><rect x="13" y="13" width="1" height="1" fill="#808080"/><rect x="0" y="14" width="13" height="1" fill="#808080"/></svg>
<svg style="left:257px;top:74px" width="18" height="16" viewBox="0 0 18 16" shape-rendering="crispEdges"><rect x="1" y="1" width="9" height="1" fill="#ffffff"/><rect x="1" y="2" width="1" height="1" fill="#ffffff"/><rect x="9" y="2" width="3" height="1" fill="#ffffff"/><rect x="15" y="2" width="3" height="1" fill="#ffffff"/><rect x="1" y="3" width="1" height="1" fill="#ffffff"/><rect x="10" y="3" width="3" height="1" fill="#ffffff"/><rect x="14" y="3" width="3" height="1" fill="#ffffff"/><rect x="1" y="4" width="1" height="1" fill="#ffffff"/><rect x="3" y="4" width="3" height="1" fill="#ffffff"/><rect x="10" y="4" width="7" height="1" fill="#ffffff"/><rect x="1" y="5" width="1" height="1" fill="#ffffff"/><rect x="11" y="5" width="5" height="1" fill="#ffffff"/><rect x="1" y="6" width="1" height="1" fill="#ffffff"/><rect x="4" y="6" width="4" height="1" fill="#ffffff"/><rect x="12" y="6" width="3" height="1" fill="#ffffff"/><rect x="1" y="7" width="1" height="1" fill="#ffffff"/><rect x="11" y="7" width="5" height="1" fill="#ffffff"/><rect x="1" y="8" width="1" height="1" fill="#ffffff"/><rect x="4" y="8" width="4" height="1" fill="#ffffff"/><rect x="10" y="8" width="7" height="1" fill="#ffffff"/><rect x="1" y="9" width="1" height="1" fill="#ffffff"/><rect x="10" y="9" width="3" height="1" fill="#ffffff"/><rect x="14" y="9" width="3" height="1" fill="#ffffff"/><rect x="1" y="10" width="1" height="1" fill="#ffffff"/><rect x="4" y="10" width="4" height="1" fill="#ffffff"/><rect x="9" y="10" width="3" height="1" fill="#ffffff"/><rect x="15" y="10" width="3" height="1" fill="#ffffff"/><rect x="1" y="11" width="1" height="1" fill="#ffffff"/><rect x="9" y="11" width="2" height="1" fill="#ffffff"/><rect x="16" y="11" width="2" height="1" fill="#ffffff"/><rect x="1" y="12" width="1" height="1" fill="#ffffff"/><rect x="4" y="12" width="4" height="1" fill="#ffffff"/><rect x="9" y="12" width="1" height="1" fill="#ffffff"/><rect x="1" y="13" width="1" height="1" fill="#ffffff"/><rect x="11" y="13" width="1" height="1" fill="#ffffff"/><rect x="1" y="14" width="1" height="1" fill="#ffffff"/><rect x="11" y="14" width="1" height="1" fill="#ffffff"/><rect x="1" y="15" width="11" height="1" fill="#ffffff"/><rect x="0" y="0" width="9" height="1" fill="#808080"/><rect x="0" y="1" width="1" height="1" fill="#808080"/><rect x="8" y="1" width="3" height="1" fill="#808080"/><rect x="14" y="1" width="3" height="1" fill="#808080"/><rect x="0" y="2" width="1" height="1" fill="#808080"/><rect x="9" y="2" width="3" height="1" fill="#808080"/><rect x="13" y="2" width="3" height="1" fill="#808080"/><rect x="0" y="3" width="1" height="1" fill="#808080"/><rect x="2" y="3" width="3" height="1" fill="#808080"/><rect x="9" y="3" width="7" height="1" fill="#808080"/><rect x="0" y="4" width="1" height="1" fill="#808080"/><rect x="10" y="4" width="5" height="1" fill="#808080"/><rect x="0" y="5" width="1" height="1" fill="#808080"/><rect x="3" y="5" width="4" height="1" fill="#808080"/><rect x="11" y="5" width="3" height="1" fill="#808080"/><rect x="0" y="6" width="1" height="1" fill="#808080"/><rect x="10" y="6" width="5" height="1" fill="#808080"/><rect x="0" y="7" width="1" height="1" fill="#808080"/><rect x="3" y="7" width="4" height="1" fill="#808080"/><rect x="9" y="7" width="7" height="1" fill="#808080"/><rect x="0" y="8" width="1" height="1" fill="#808080"/><rect x="9" y="8" width="3" height="1" fill="#808080"/><rect x="13" y="8" width="3" height="1" fill="#808080"/><rect x="0" y="9" width="1" height="1" fill="#808080"/><rect x="3" y="9" width="4" height="1" fill="#808080"/><rect x="8" y="9" width="3" height="1" fill="#808080"/><rect x="14" y="9" width="3" height="1" fill="#808080"/><rect x="0" y="10" width="1" height="1" fill="#808080"/><rect x="8" y="10" width="2" height="1" fill="#808080"/><rect x="15" y="10" width="2" height="1" fill="#808080"/><rect x="0" y="11" width="1" height="1" fill="#808080"/><rect x="3" y="11" width="4" height="1" fill="#808080"/><rect x="8" y="11" width="1" height="1" fill="#808080"/><rect x="0" y="12" width="1" height="1" fill="#808080"/><rect x="10" y="12" width="1" height="1" fill="#808080"/><rect x="0" y="13" width="1" height="1" fill="#808080"/><rect x="10" y="13" width="1" height="1" fill="#808080"/><rect x="0" y="14" width="11" height="1" fill="#808080"/></svg>
<div style="left:280px;top:71px;width:1px;height:22px;background:#808080;"></div>
<div style="left:281px;top:71px;width:1px;height:22px;background:#ffffff;"></div>
<svg style="left:289px;top:74px" width="14" height="15" viewBox="0 0 14 15" shape-rendering="crispEdges"><rect x="6" y="0" width="2" height="1" fill="#000000"/><rect x="5" y="1" width="2" height="1" fill="#000000"/><rect x="8" y="1" width="2" height="1" fill="#000000"/><rect x="4" y="2" width="1" height="1" fill="#000000"/><rect x="6" y="2" width="1" height="1" fill="#000000"/><rect x="8" y="2" width="1" height="1" fill="#000000"/><rect x="10" y="2" width="1" height="1" fill="#000000"/><rect x="4" y="3" width="1" height="1" fill="#000000"/><rect x="6" y="3" width="1" height="1" fill="#000000"/><rect x="8" y="3" width="1" height="1" fill="#000000"/><rect x="10" y="3" width="2" height="1" fill="#000000"/><rect x="4" y="4" width="1" height="1" fill="#000000"/><rect x="6" y="4" width="1" height="1" fill="#000000"/><rect x="8" y="4" width="1" height="1" fill="#000000"/><rect x="10" y="4" width="1" height="1" fill="#000000"/><rect x="12" y="4" width="1" height="1" fill="#000000"/><rect x="4" y="5" width="1" height="1" fill="#000000"/><rect x="6" y="5" width="1" height="1" fill="#000000"/><rect x="8" y="5" width="1" height="1" fill="#000000"/><rect x="10" y="5" width="1" height="1" fill="#000000"/><rect x="12" y="5" width="1" height="1" fill="#000000"/><rect x="0" y="6" width="5" height="1" fill="#000000"/><rect x="6" y="6" width="1" height="1" fill="#000000"/><rect x="8" y="6" width="1" height="1" fill="#000000"/><rect x="10" y="6" width="1" height="1" fill="#000000"/><rect x="12" y="6" width="1" height="1" fill="#000000"/><rect x="0" y="7" width="1" height="1" fill="#000000"/><rect x="4" y="7" width="1" height="1" fill="#000000"/><rect x="6" y="7" width="1" height="1" fill="#000000"/><rect x="8" y="7" width="1" height="1" fill="#000000"/><rect x="10" y="7" width="1" height="1" fill="#000000"/><rect x="12" y="7" width="1" height="1" fill="#000000"/><rect x="1" y="8" width="1" height="1" fill="#000000"/><rect x="4" y="8" width="1" height="1" fill="#000000"/><rect x="12" y="8" width="1" height="1" fill="#000000"/><rect x="2" y="9" width="1" height="1" fill="#000000"/><rect x="12" y="9" width="1" height="1" fill="#000000"/><rect x="2" y="10" width="1" height="1" fill="#000000"/><rect x="12" y="10" width="1" height="1" fill="#000000"/><rect x="3" y="11" width="1" height="1" fill="#000000"/><rect x="12" y="11" width="1" height="1" fill="#000000"/><rect x="4" y="12" width="1" height="1" fill="#000000"/><rect x="11" y="12" width="1" height="1" fill="#000000"/><rect x="4" y="13" width="8" height="1" fill="#000000"/></svg>
<div style="left:311px;top:71px;width:1px;height:22px;background:#808080;"></div>
<div style="left:312px;top:71px;width:1px;height:22px;background:#ffffff;"></div>
<svg style="left:320px;top:74px" width="17" height="15" viewBox="0 0 17 15" shape-rendering="crispEdges"><rect x="0" y="0" width="8" height="1" fill="#000080"/><rect x="8" y="1" width="1" height="1" fill="#000080"/><rect x="8" y="2" width="1" height="1" fill="#000080"/><rect x="3" y="3" width="2" height="1" fill="#000000"/><rect x="8" y="3" width="1" height="1" fill="#000080"/><rect x="12" y="3" width="2" height="1" fill="#000000"/><rect x="2" y="4" width="2" height="1" fill="#000000"/><rect x="8" y="4" width="1" height="1" fill="#000080"/><rect x="13" y="4" width="2" height="1" fill="#000000"/><rect x="2" y="5" width="2" height="1" fill="#000000"/><rect x="8" y="5" width="1" height="1" fill="#000080"/><rect x="13" y="5" width="2" height="1" fill="#000000"/><rect x="2" y="6" width="2" height="1" fill="#000000"/><rect x="6" y="6" width="5" height="1" fill="#000080"/><rect x="13" y="6" width="2" height="1" fill="#000000"/><rect x="2" y="7" width="2" height="1" fill="#000000"/><rect x="7" y="7" width="3" height="1" fill="#000080"/><rect x="13" y="7" width="2" height="1" fill="#000000"/><rect x="1" y="8" width="2" height="1" fill="#000000"/><rect x="8" y="8" width="1" height="1" fill="#000080"/><rect x="14" y="8" width="2" height="1" fill="#000000"/><rect x="2" y="9" width="2" height="1" fill="#000000"/><rect x="13" y="9" width="2" height="1" fill="#000000"/><rect x="2" y="10" width="2" height="1" fill="#000000"/><rect x="13" y="10" width="2" height="1" fill="#000000"/><rect x="2" y="11" width="2" height="1" fill="#000000"/><rect x="13" y="11" width="2" height="1" fill="#000000"/><rect x="2" y="12" width="2" height="1" fill="#000000"/><rect x="13" y="12" width="2" height="1" fill="#000000"/><rect x="3" y="13" width="2" height="1" fill="#000000"/><rect x="12" y="13" width="2" height="1" fill="#000000"/></svg>
<svg style="left:343px;top:74px" width="17" height="14" viewBox="0 0 17 14" shape-rendering="crispEdges"><rect x="0" y="0" width="12" height="1" fill="#000080"/><rect x="12" y="1" width="1" height="1" fill="#000080"/><rect x="3" y="2" width="2" height="1" fill="#000000"/><rect x="6" y="2" width="2" height="1" fill="#000000"/><rect x="12" y="2" width="1" height="1" fill="#000080"/><rect x="2" y="3" width="2" height="1" fill="#000000"/><rect x="7" y="3" width="2" height="1" fill="#000000"/><rect x="12" y="3" width="1" height="1" fill="#000080"/><rect x="2" y="4" width="2" height="1" fill="#000000"/><rect x="7" y="4" width="2" height="1" fill="#000000"/><rect x="12" y="4" width="1" height="1" fill="#000080"/><rect x="2" y="5" width="2" height="1" fill="#000000"/><rect x="7" y="5" width="2" height="1" fill="#000000"/><rect x="10" y="5" width="5" height="1" fill="#000080"/><rect x="2" y="6" width="2" height="1" fill="#000000"/><rect x="7" y="6" width="2" height="1" fill="#000000"/><rect x="11" y="6" width="3" height="1" fill="#000080"/><rect x="1" y="7" width="2" height="1" fill="#000000"/><rect x="8" y="7" width="2" height="1" fill="#000000"/><rect x="12" y="7" width="1" height="1" fill="#000080"/><rect x="2" y="8" width="2" height="1" fill="#000000"/><rect x="7" y="8" width="2" height="1" fill="#000000"/><rect x="2" y="9" width="2" height="1" fill="#000000"/><rect x="7" y="9" width="2" height="1" fill="#000000"/><rect x="2" y="10" width="2" height="1" fill="#000000"/><rect x="7" y="10" width="2" height="1" fill="#000000"/><rect x="2" y="11" width="2" height="1" fill="#000000"/><rect x="7" y="11" width="2" height="1" fill="#000000"/><rect x="3" y="12" width="2" height="1" fill="#000000"/><rect x="6" y="12" width="2" height="1" fill="#000000"/></svg>
<svg style="left:365px;top:74px" width="18" height="14" viewBox="0 0 18 14" shape-rendering="crispEdges"><rect x="9" y="1" width="5" height="1" fill="#ffffff"/><rect x="8" y="2" width="1" height="1" fill="#ffffff"/><rect x="14" y="2" width="1" height="1" fill="#ffffff"/><rect x="4" y="3" width="2" height="1" fill="#ffffff"/><rect x="8" y="3" width="1" height="1" fill="#ffffff"/><rect x="10" y="3" width="2" height="1" fill="#ffffff"/><rect x="15" y="3" width="1" height="1" fill="#ffffff"/><rect x="3" y="4" width="2" height="1" fill="#ffffff"/><rect x="8" y="4" width="1" height="1" fill="#ffffff"/><rect x="11" y="4" width="2" height="1" fill="#ffffff"/><rect x="15" y="4" width="1" height="1" fill="#ffffff"/><rect x="3" y="5" width="2" height="1" fill="#ffffff"/><rect x="8" y="5" width="1" height="1" fill="#ffffff"/><rect x="11" y="5" width="2" height="1" fill="#ffffff"/><rect x="15" y="5" width="1" height="1" fill="#ffffff"/><rect x="3" y="6" width="2" height="1" fill="#ffffff"/><rect x="8" y="6" width="1" height="1" fill="#ffffff"/><rect x="11" y="6" width="7" height="1" fill="#ffffff"/><rect x="3" y="7" width="2" height="1" fill="#ffffff"/><rect x="11" y="7" width="2" height="1" fill="#ffffff"/><rect x="14" y="7" width="3" height="1" fill="#ffffff"/><rect x="2" y="8" width="2" height="1" fill="#ffffff"/><rect x="12" y="8" width="2" height="1" fill="#ffffff"/><rect x="15" y="8" width="1" height="1" fill="#ffffff"/><rect x="3" y="9" width="2" height="1" fill="#ffffff"/><rect x="11" y="9" width="2" height="1" fill="#ffffff"/><rect x="3" y="10" width="2" height="1" fill="#ffffff"/><rect x="11" y="10" width="2" height="1" fill="#ffffff"/><rect x="3" y="11" width="2" height="1" fill="#ffffff"/><rect x="11" y="11" width="2" height="1" fill="#ffffff"/><rect x="3" y="12" width="2" height="1" fill="#ffffff"/><rect x="11" y="12" width="2" height="1" fill="#ffffff"/><rect x="4" y="13" width="2" height="1" fill="#ffffff"/><rect x="10" y="13" width="2" height="1" fill="#ffffff"/><rect x="8" y="0" width="5" height="1" fill="#808080"/><rect x="7" y="1" width="1" height="1" fill="#808080"/><rect x="13" y="1" width="1" height="1" fill="#808080"/><rect x="3" y="2" width="2" height="1" fill="#808080"/><rect x="7" y="2" width="1" height="1" fill="#808080"/><rect x="9" y="2" width="2" height="1" fill="#808080"/><rect x="14" y="2" width="1" height="1" fill="#808080"/><rect x="2" y="3" width="2" height="1" fill="#808080"/><rect x="7" y="3" width="1" height="1" fill="#808080"/><rect x="10" y="3" width="2" height="1" fill="#808080"/><rect x="14" y="3" width="1" height="1" fill="#808080"/><rect x="2" y="4" width="2" height="1" fill="#808080"/><rect x="7" y="4" width="1" height="1" fill="#808080"/><rect x="10" y="4" width="2" height="1" fill="#808080"/><rect x="14" y="4" width="1" height="1" fill="#808080"/><rect x="2" y="5" width="2" height="1" fill="#808080"/><rect x="7" y="5" width="1" height="1" fill="#808080"/><rect x="10" y="5" width="7" height="1" fill="#808080"/><rect x="2" y="6" width="2" height="1" fill="#808080"/><rect x="10" y="6" width="2" height="1" fill="#808080"/><rect x="13" y="6" width="3" height="1" fill="#808080"/><rect x="1" y="7" width="2" height="1" fill="#808080"/><rect x="11" y="7" width="2" height="1" fill="#808080"/><rect x="14" y="7" width="1" height="1" fill="#808080"/><rect x="2" y="8" width="2" height="1" fill="#808080"/><rect x="10" y="8" width="2" height="1" fill="#808080"/><rect x="2" y="9" width="2" height="1" fill="#808080"/><rect x="10" y="9" width="2" height="1" fill="#808080"/><rect x="2" y="10" width="2" height="1" fill="#808080"/><rect x="10" y="10" width="2" height="1" fill="#808080"/><rect x="2" y="11" width="2" height="1" fill="#808080"/><rect x="10" y="11" width="2" height="1" fill="#808080"/><rect x="3" y="12" width="2" height="1" fill="#808080"/><rect x="9" y="12" width="2" height="1" fill="#808080"/></svg>
<div style="left:387px;top:69px;width:196px;height:1px;background:#ffffff;"></div>
<div style="left:387px;top:69px;width:1px;height:27px;background:#ffffff;"></div>
<div style="left:387px;top:95px;width:196px;height:1px;background:#808080;"></div>
<div style="left:582px;top:69px;width:1px;height:27px;background:#808080;"></div>
<div style="left:390px;top:72px;width:1px;height:21px;background:#ffffff;"></div>
<div style="left:390px;top:72px;width:2px;height:1px;background:#ffffff;"></div>
<div style="left:392px;top:72px;width:1px;height:21px;background:#808080;"></div>
<div style="left:390px;top:92px;width:3px;height:1px;background:#808080;"></div>
<svg style="left:399px;top:74px" width="17" height="16" viewBox="0 0 17 16" shape-rendering="crispEdges"><rect x="1" y="0" width="8" height="1" fill="#000000"/><rect x="0" y="1" width="1" height="1" fill="#000000"/><rect x="1" y="1" width="2" height="1" fill="#ffffff"/><rect x="3" y="1" width="6" height="1" fill="#00ffff"/><rect x="9" y="1" width="1" height="1" fill="#000000"/><rect x="0" y="2" width="1" height="1" fill="#000000"/><rect x="1" y="2" width="1" height="1" fill="#ffffff"/><rect x="2" y="2" width="7" height="1" fill="#00ffff"/><rect x="9" y="2" width="1" height="1" fill="#000000"/><rect x="0" y="3" width="1" height="1" fill="#000000"/><rect x="1" y="3" width="8" height="1" fill="#00ffff"/><rect x="9" y="3" width="1" height="1" fill="#000000"/><rect x="0" y="4" width="1" height="1" fill="#000000"/><rect x="1" y="4" width="8" height="1" fill="#00ffff"/><rect x="9" y="4" width="1" height="1" fill="#000000"/><rect x="0" y="5" width="1" height="1" fill="#000000"/><rect x="1" y="5" width="8" height="1" fill="#00ffff"/><rect x="9" y="5" width="1" height="1" fill="#000000"/><rect x="0" y="6" width="1" height="1" fill="#000000"/><rect x="1" y="6" width="8" height="1" fill="#00ffff"/><rect x="9" y="6" width="5" height="1" fill="#000000"/><rect x="1" y="7" width="15" height="1" fill="#000000"/><rect x="2" y="8" width="1" height="1" fill="#800000"/><rect x="10" y="8" width="4" height="1" fill="#000000"/><rect x="1" y="9" width="3" height="1" fill="#800000"/><rect x="8" y="9" width="8" height="1" fill="#000000"/><rect x="2" y="10" width="1" height="1" fill="#800000"/><rect x="10" y="10" width="4" height="1" fill="#000000"/><rect x="2" y="11" width="1" height="1" fill="#800000"/><rect x="6" y="11" width="1" height="1" fill="#800000"/><rect x="8" y="11" width="8" height="1" fill="#000000"/><rect x="2" y="12" width="6" height="1" fill="#800000"/><rect x="10" y="12" width="4" height="1" fill="#000000"/><rect x="6" y="13" width="1" height="1" fill="#800000"/><rect x="8" y="13" width="8" height="1" fill="#000000"/><rect x="10" y="14" width="4" height="1" fill="#000000"/></svg>
<svg style="left:422px;top:74px" width="17" height="16" viewBox="0 0 17 16" shape-rendering="crispEdges"><rect x="2" y="1" width="7" height="1" fill="#ffffff"/><rect x="15" y="1" width="1" height="1" fill="#ffffff"/><rect x="1" y="2" width="9" height="1" fill="#ffffff"/><rect x="14" y="2" width="1" height="1" fill="#ffffff"/><rect x="1" y="3" width="1" height="1" fill="#ffffff"/><rect x="3" y="3" width="7" height="1" fill="#ffffff"/><rect x="13" y="3" width="1" height="1" fill="#ffffff"/><rect x="1" y="4" width="9" height="1" fill="#ffffff"/><rect x="12" y="4" width="1" height="1" fill="#ffffff"/><rect x="1" y="5" width="9" height="1" fill="#ffffff"/><rect x="11" y="5" width="1" height="1" fill="#ffffff"/><rect x="1" y="6" width="11" height="1" fill="#ffffff"/><rect x="2" y="7" width="7" height="1" fill="#ffffff"/><rect x="11" y="7" width="4" height="1" fill="#ffffff"/><rect x="3" y="8" width="1" height="1" fill="#ffffff"/><rect x="7" y="8" width="1" height="1" fill="#ffffff"/><rect x="9" y="8" width="8" height="1" fill="#ffffff"/><rect x="2" y="9" width="7" height="1" fill="#ffffff"/><rect x="11" y="9" width="4" height="1" fill="#ffffff"/><rect x="3" y="10" width="2" height="1" fill="#ffffff"/><rect x="6" y="10" width="2" height="1" fill="#ffffff"/><rect x="9" y="10" width="8" height="1" fill="#ffffff"/><rect x="4" y="11" width="3" height="1" fill="#ffffff"/><rect x="11" y="11" width="4" height="1" fill="#ffffff"/><rect x="3" y="12" width="2" height="1" fill="#ffffff"/><rect x="6" y="12" width="2" height="1" fill="#ffffff"/><rect x="9" y="12" width="8" height="1" fill="#ffffff"/><rect x="2" y="13" width="2" height="1" fill="#ffffff"/><rect x="7" y="13" width="2" height="1" fill="#ffffff"/><rect x="11" y="13" width="4" height="1" fill="#ffffff"/><rect x="9" y="14" width="8" height="1" fill="#ffffff"/><rect x="11" y="15" width="4" height="1" fill="#ffffff"/><rect x="1" y="0" width="7" height="1" fill="#808080"/><rect x="14" y="0" width="1" height="1" fill="#808080"/><rect x="0" y="1" width="9" height="1" fill="#808080"/><rect x="13" y="1" width="1" height="1" fill="#808080"/><rect x="0" y="2" width="1" height="1" fill="#808080"/><rect x="1" y="2" width="1" height="1" fill="#d4d0c8"/><rect x="2" y="2" width="7" height="1" fill="#808080"/><rect x="12" y="2" width="1" height="1" fill="#808080"/><rect x="0" y="3" width="9" height="1" fill="#808080"/><rect x="11" y="3" width="1" height="1" fill="#808080"/><rect x="0" y="4" width="9" height="1" fill="#808080"/><rect x="10" y="4" width="1" height="1" fill="#808080"/><rect x="0" y="5" width="11" height="1" fill="#808080"/><rect x="1" y="6" width="7" height="1" fill="#808080"/><rect x="10" y="6" width="4" height="1" fill="#808080"/><rect x="2" y="7" width="1" height="1" fill="#808080"/><rect x="6" y="7" width="1" height="1" fill="#808080"/><rect x="8" y="7" width="8" height="1" fill="#808080"/><rect x="1" y="8" width="7" height="1" fill="#808080"/><rect x="10" y="8" width="4" height="1" fill="#808080"/><rect x="2" y="9" width="2" height="1" fill="#808080"/><rect x="5" y="9" width="2" height="1" fill="#808080"/><rect x="8" y="9" width="8" height="1" fill="#808080"/><rect x="3" y="10" width="3" height="1" fill="#808080"/><rect x="10" y="10" width="4" height="1" fill="#808080"/><rect x="2" y="11" width="2" height="1" fill="#808080"/><rect x="5" y="11" width="2" height="1" fill="#808080"/><rect x="8" y="11" width="8" height="1" fill="#808080"/><rect x="1" y="12" width="2" height="1" fill="#808080"/><rect x="6" y="12" width="2" height="1" fill="#808080"/><rect x="10" y="12" width="4" height="1" fill="#808080"/><rect x="8" y="13" width="8" height="1" fill="#808080"/><rect x="10" y="14" width="4" height="1" fill="#808080"/></svg>
<div style="left:445px;top:71px;width:1px;height:22px;background:#808080;"></div>
<div style="left:446px;top:71px;width:1px;height:22px;background:#ffffff;"></div>
<svg style="left:453px;top:74px" width="17" height="16" viewBox="0 0 17 16" shape-rendering="crispEdges"><rect x="1" y="0" width="8" height="1" fill="#000000"/><rect x="0" y="1" width="1" height="1" fill="#000000"/><rect x="1" y="1" width="2" height="1" fill="#ffffff"/><rect x="3" y="1" width="6" height="1" fill="#00ffff"/><rect x="9" y="1" width="1" height="1" fill="#000000"/><rect x="0" y="2" width="1" height="1" fill="#000000"/><rect x="1" y="2" width="1" height="1" fill="#ffffff"/><rect x="2" y="2" width="7" height="1" fill="#00ffff"/><rect x="9" y="2" width="1" height="1" fill="#000000"/><rect x="0" y="3" width="1" height="1" fill="#000000"/><rect x="1" y="3" width="8" height="1" fill="#00ffff"/><rect x="9" y="3" width="1" height="1" fill="#000000"/><rect x="0" y="4" width="1" height="1" fill="#000000"/><rect x="1" y="4" width="8" height="1" fill="#00ffff"/><rect x="9" y="4" width="1" height="1" fill="#000000"/><rect x="0" y="5" width="1" height="1" fill="#000000"/><rect x="1" y="5" width="8" height="1" fill="#00ffff"/><rect x="9" y="5" width="1" height="1" fill="#000000"/><rect x="11" y="5" width="3" height="1" fill="#000000"/><rect x="0" y="6" width="1" height="1" fill="#000000"/><rect x="1" y="6" width="9" height="1" fill="#00ffff"/><rect x="10" y="6" width="1" height="1" fill="#000000"/><rect x="11" y="6" width="3" height="1" fill="#ffff00"/><rect x="14" y="6" width="2" height="1" fill="#000000"/><rect x="1" y="7" width="8" height="1" fill="#000000"/><rect x="9" y="7" width="6" height="1" fill="#ffff00"/><rect x="15" y="7" width="1" height="1" fill="#000000"/><rect x="2" y="8" width="1" height="1" fill="#800000"/><rect x="8" y="8" width="2" height="1" fill="#000000"/><rect x="10" y="8" width="4" height="1" fill="#ffff00"/><rect x="14" y="8" width="2" height="1" fill="#000000"/><rect x="2" y="9" width="1" height="1" fill="#800000"/><rect x="8" y="9" width="1" height="1" fill="#000000"/><rect x="9" y="9" width="1" height="1" fill="#ffff00"/><rect x="10" y="9" width="4" height="1" fill="#000000"/><rect x="14" y="9" width="1" height="1" fill="#ffff00"/><rect x="15" y="9" width="1" height="1" fill="#000000"/><rect x="2" y="10" width="1" height="1" fill="#800000"/><rect x="5" y="10" width="1" height="1" fill="#800000"/><rect x="8" y="10" width="1" height="1" fill="#000000"/><rect x="9" y="10" width="6" height="1" fill="#ffff00"/><rect x="15" y="10" width="1" height="1" fill="#000000"/><rect x="2" y="11" width="1" height="1" fill="#800000"/><rect x="5" y="11" width="2" height="1" fill="#800000"/><rect x="8" y="11" width="1" height="1" fill="#000000"/><rect x="9" y="11" width="6" height="1" fill="#ffff00"/><rect x="15" y="11" width="1" height="1" fill="#000000"/><rect x="2" y="12" width="6" height="1" fill="#800000"/><rect x="8" y="12" width="1" height="1" fill="#000000"/><rect x="9" y="12" width="6" height="1" fill="#ffff00"/><rect x="15" y="12" width="1" height="1" fill="#000000"/><rect x="5" y="13" width="2" height="1" fill="#800000"/><rect x="9" y="13" width="1" height="1" fill="#000000"/><rect x="10" y="13" width="4" height="1" fill="#ffff00"/><rect x="14" y="13" width="1" height="1" fill="#000000"/><rect x="5" y="14" width="1" height="1" fill="#800000"/><rect x="10" y="14" width="4" height="1" fill="#000000"/></svg>
<svg style="left:476px;top:74px" width="17" height="15" viewBox="0 0 17 15" shape-rendering="crispEdges"><rect x="2" y="1" width="7" height="1" fill="#ffffff"/><rect x="15" y="1" width="1" height="1" fill="#ffffff"/><rect x="1" y="2" width="9" height="1" fill="#ffffff"/><rect x="14" y="2" width="1" height="1" fill="#ffffff"/><rect x="1" y="3" width="1" height="1" fill="#ffffff"/><rect x="3" y="3" width="7" height="1" fill="#ffffff"/><rect x="13" y="3" width="1" height="1" fill="#ffffff"/><rect x="1" y="4" width="9" height="1" fill="#ffffff"/><rect x="12" y="4" width="1" height="1" fill="#ffffff"/><rect x="1" y="5" width="9" height="1" fill="#ffffff"/><rect x="11" y="5" width="1" height="1" fill="#ffffff"/><rect x="1" y="6" width="14" height="1" fill="#ffffff"/><rect x="2" y="7" width="15" height="1" fill="#ffffff"/><rect x="3" y="8" width="1" height="1" fill="#ffffff"/><rect x="9" y="8" width="8" height="1" fill="#ffffff"/><rect x="3" y="9" width="14" height="1" fill="#ffffff"/><rect x="3" y="10" width="1" height="1" fill="#ffffff"/><rect x="7" y="10" width="1" height="1" fill="#ffffff"/><rect x="9" y="10" width="8" height="1" fill="#ffffff"/><rect x="3" y="11" width="1" height="1" fill="#ffffff"/><rect x="6" y="11" width="1" height="1" fill="#ffffff"/><rect x="9" y="11" width="8" height="1" fill="#ffffff"/><rect x="3" y="12" width="14" height="1" fill="#ffffff"/><rect x="2" y="13" width="2" height="1" fill="#ffffff"/><rect x="5" y="13" width="2" height="1" fill="#ffffff"/><rect x="10" y="13" width="6" height="1" fill="#ffffff"/><rect x="11" y="14" width="4" height="1" fill="#ffffff"/><rect x="1" y="0" width="7" height="1" fill="#808080"/><rect x="14" y="0" width="1" height="1" fill="#808080"/><rect x="0" y="1" width="9" height="1" fill="#808080"/><rect x="13" y="1" width="1" height="1" fill="#808080"/><rect x="0" y="2" width="1" height="1" fill="#808080"/><rect x="1" y="2" width="1" height="1" fill="#d4d0c8"/><rect x="2" y="2" width="7" height="1" fill="#808080"/><rect x="12" y="2" width="1" height="1" fill="#808080"/><rect x="0" y="3" width="9" height="1" fill="#808080"/><rect x="11" y="3" width="1" height="1" fill="#808080"/><rect x="0" y="4" width="9" height="1" fill="#808080"/><rect x="10" y="4" width="1" height="1" fill="#808080"/><rect x="0" y="5" width="14" height="1" fill="#808080"/><rect x="1" y="6" width="15" height="1" fill="#808080"/><rect x="2" y="7" width="1" height="1" fill="#808080"/><rect x="8" y="7" width="8" height="1" fill="#808080"/><rect x="2" y="8" width="14" height="1" fill="#808080"/><rect x="2" y="9" width="1" height="1" fill="#808080"/><rect x="3" y="9" width="2" height="1" fill="#d4d0c8"/><rect x="6" y="9" width="1" height="1" fill="#808080"/><rect x="7" y="9" width="1" height="1" fill="#d4d0c8"/><rect x="8" y="9" width="8" height="1" fill="#808080"/><rect x="2" y="10" width="1" height="1" fill="#808080"/><rect x="3" y="10" width="1" height="1" fill="#d4d0c8"/><rect x="5" y="10" width="1" height="1" fill="#808080"/><rect x="6" y="10" width="2" height="1" fill="#d4d0c8"/><rect x="8" y="10" width="8" height="1" fill="#808080"/><rect x="2" y="11" width="14" height="1" fill="#808080"/><rect x="1" y="12" width="2" height="1" fill="#808080"/><rect x="4" y="12" width="2" height="1" fill="#808080"/><rect x="9" y="12" width="6" height="1" fill="#808080"/><rect x="10" y="13" width="4" height="1" fill="#808080"/></svg>
<div style="left:499px;top:71px;width:1px;height:22px;background:#808080;"></div>
<div style="left:500px;top:71px;width:1px;height:22px;background:#ffffff;"></div>
<svg style="left:507px;top:75px" width="18" height="15" viewBox="0 0 18 15" shape-rendering="crispEdges"><rect x="7" y="0" width="7" height="1" fill="#000000"/><rect x="14" y="0" width="2" height="1" fill="#000080"/><rect x="6" y="1" width="1" height="1" fill="#000000"/><rect x="7" y="1" width="1" height="1" fill="#ffffff"/><rect x="8" y="1" width="1" height="1" fill="#000000"/><rect x="9" y="1" width="5" height="1" fill="#ffffff"/><rect x="14" y="1" width="2" height="1" fill="#000080"/><rect x="5" y="2" width="1" height="1" fill="#000000"/><rect x="6" y="2" width="1" height="1" fill="#ffffff"/><rect x="7" y="2" width="1" height="1" fill="#000000"/><rect x="8" y="2" width="1" height="1" fill="#ffffff"/><rect x="9" y="2" width="1" height="1" fill="#000000"/><rect x="10" y="2" width="4" height="1" fill="#ffffff"/><rect x="14" y="2" width="2" height="1" fill="#000080"/><rect x="0" y="3" width="5" height="1" fill="#000000"/><rect x="5" y="3" width="1" height="1" fill="#ffffff"/><rect x="6" y="3" width="1" height="1" fill="#000000"/><rect x="7" y="3" width="1" height="1" fill="#ffffff"/><rect x="8" y="3" width="1" height="1" fill="#000000"/><rect x="9" y="3" width="1" height="1" fill="#ffffff"/><rect x="10" y="3" width="1" height="1" fill="#000000"/><rect x="11" y="3" width="3" height="1" fill="#ffffff"/><rect x="14" y="3" width="2" height="1" fill="#000080"/><rect x="0" y="4" width="1" height="1" fill="#000000"/><rect x="1" y="4" width="2" height="1" fill="#ffffff"/><rect x="3" y="4" width="1" height="1" fill="#000000"/><rect x="4" y="4" width="1" height="1" fill="#ffffff"/><rect x="5" y="4" width="1" height="1" fill="#000000"/><rect x="6" y="4" width="1" height="1" fill="#ffffff"/><rect x="7" y="4" width="1" height="1" fill="#000000"/><rect x="8" y="4" width="1" height="1" fill="#ffffff"/><rect x="9" y="4" width="1" height="1" fill="#000000"/><rect x="10" y="4" width="1" height="1" fill="#ffffff"/><rect x="11" y="4" width="1" height="1" fill="#000000"/><rect x="12" y="4" width="2" height="1" fill="#ffffff"/><rect x="14" y="4" width="2" height="1" fill="#000080"/><rect x="0" y="5" width="1" height="1" fill="#000000"/><rect x="1" y="5" width="3" height="1" fill="#ffffff"/><rect x="4" y="5" width="1" height="1" fill="#000000"/><rect x="5" y="5" width="1" height="1" fill="#ffffff"/><rect x="6" y="5" width="1" height="1" fill="#000000"/><rect x="7" y="5" width="1" height="1" fill="#ffffff"/><rect x="8" y="5" width="1" height="1" fill="#000000"/><rect x="9" y="5" width="1" height="1" fill="#ffffff"/><rect x="10" y="5" width="4" height="1" fill="#000000"/><rect x="14" y="5" width="2" height="1" fill="#000080"/><rect x="0" y="6" width="1" height="1" fill="#000000"/><rect x="1" y="6" width="4" height="1" fill="#ffffff"/><rect x="5" y="6" width="1" height="1" fill="#000000"/><rect x="6" y="6" width="1" height="1" fill="#ffffff"/><rect x="7" y="6" width="1" height="1" fill="#000000"/><rect x="8" y="6" width="1" height="1" fill="#ffffff"/><rect x="9" y="6" width="1" height="1" fill="#000000"/><rect x="10" y="6" width="1" height="1" fill="#ffffff"/><rect x="11" y="6" width="1" height="1" fill="#000000"/><rect x="14" y="6" width="2" height="1" fill="#000080"/><rect x="0" y="7" width="1" height="1" fill="#000000"/><rect x="1" y="7" width="5" height="1" fill="#ffffff"/><rect x="6" y="7" width="1" height="1" fill="#000000"/><rect x="7" y="7" width="1" height="1" fill="#ffffff"/><rect x="8" y="7" width="1" height="1" fill="#000000"/><rect x="9" y="7" width="2" height="1" fill="#ffffff"/><rect x="11" y="7" width="1" height="1" fill="#000000"/><rect x="0" y="8" width="1" height="1" fill="#000000"/><rect x="1" y="8" width="10" height="1" fill="#ffffff"/><rect x="11" y="8" width="1" height="1" fill="#000000"/><rect x="0" y="9" width="1" height="1" fill="#000000"/><rect x="1" y="9" width="1" height="1" fill="#ffffff"/><rect x="2" y="9" width="2" height="1" fill="#000000"/><rect x="4" y="9" width="1" height="1" fill="#ffffff"/><rect x="5" y="9" width="5" height="1" fill="#000000"/><rect x="10" y="9" width="1" height="1" fill="#ffffff"/><rect x="11" y="9" width="1" height="1" fill="#000000"/><rect x="0" y="10" width="1" height="1" fill="#000000"/><rect x="1" y="10" width="10" height="1" fill="#ffffff"/><rect x="11" y="10" width="1" height="1" fill="#000000"/><rect x="0" y="11" width="1" height="1" fill="#000000"/><rect x="1" y="11" width="1" height="1" fill="#ffffff"/><rect x="2" y="11" width="2" height="1" fill="#000000"/><rect x="4" y="11" width="1" height="1" fill="#ffffff"/><rect x="5" y="11" width="5" height="1" fill="#000000"/><rect x="10" y="11" width="1" height="1" fill="#ffffff"/><rect x="11" y="11" width="1" height="1" fill="#000000"/><rect x="0" y="12" width="1" height="1" fill="#000000"/><rect x="1" y="12" width="10" height="1" fill="#ffffff"/><rect x="11" y="12" width="1" height="1" fill="#000000"/><rect x="0" y="13" width="12" height="1" fill="#000000"/></svg>
<div style="left:530px;top:71px;width:1px;height:22px;background:#808080;"></div>
<div style="left:531px;top:71px;width:1px;height:22px;background:#ffffff;"></div>
<svg style="left:538px;top:74px" width="18" height="15" viewBox="0 0 18 15" shape-rendering="crispEdges"><rect x="14" y="0" width="1" height="1" fill="#000000"/><rect x="2" y="1" width="12" height="1" fill="#808080"/><rect x="14" y="1" width="1" height="1" fill="#000000"/><rect x="2" y="2" width="1" height="1" fill="#808080"/><rect x="3" y="2" width="3" height="1" fill="#ffffff"/><rect x="6" y="2" width="8" height="1" fill="#00ffff"/><rect x="14" y="2" width="1" height="1" fill="#000000"/><rect x="2" y="3" width="1" height="1" fill="#808080"/><rect x="3" y="3" width="1" height="1" fill="#00ffff"/><rect x="4" y="3" width="1" height="1" fill="#000000"/><rect x="5" y="3" width="1" height="1" fill="#00ffff"/><rect x="6" y="3" width="1" height="1" fill="#000000"/><rect x="7" y="3" width="1" height="1" fill="#00ffff"/><rect x="8" y="3" width="1" height="1" fill="#000000"/><rect x="9" y="3" width="5" height="1" fill="#00ffff"/><rect x="14" y="3" width="1" height="1" fill="#000000"/><rect x="2" y="4" width="1" height="1" fill="#808080"/><rect x="3" y="4" width="11" height="1" fill="#00ffff"/><rect x="14" y="4" width="1" height="1" fill="#000000"/><rect x="2" y="5" width="1" height="1" fill="#808080"/><rect x="3" y="5" width="1" height="1" fill="#00ffff"/><rect x="4" y="5" width="1" height="1" fill="#000000"/><rect x="5" y="5" width="1" height="1" fill="#00ffff"/><rect x="6" y="5" width="1" height="1" fill="#000000"/><rect x="7" y="5" width="1" height="1" fill="#00ffff"/><rect x="8" y="5" width="1" height="1" fill="#000000"/><rect x="9" y="5" width="1" height="1" fill="#00ffff"/><rect x="10" y="5" width="1" height="1" fill="#000000"/><rect x="11" y="5" width="3" height="1" fill="#00ffff"/><rect x="14" y="5" width="1" height="1" fill="#000000"/><rect x="2" y="6" width="1" height="1" fill="#808080"/><rect x="3" y="6" width="11" height="1" fill="#00ffff"/><rect x="14" y="6" width="1" height="1" fill="#000000"/><rect x="2" y="7" width="1" height="1" fill="#808080"/><rect x="3" y="7" width="1" height="1" fill="#00ffff"/><rect x="4" y="7" width="1" height="1" fill="#000000"/><rect x="5" y="7" width="1" height="1" fill="#00ffff"/><rect x="6" y="7" width="1" height="1" fill="#000000"/><rect x="7" y="7" width="7" height="1" fill="#00ffff"/><rect x="14" y="7" width="1" height="1" fill="#000000"/><rect x="2" y="8" width="1" height="1" fill="#808080"/><rect x="3" y="8" width="11" height="1" fill="#00ffff"/><rect x="14" y="8" width="1" height="1" fill="#000000"/><rect x="2" y="9" width="13" height="1" fill="#000000"/><rect x="14" y="10" width="1" height="1" fill="#000000"/><rect x="1" y="11" width="1" height="1" fill="#000000"/><rect x="2" y="11" width="1" height="1" fill="#ffffff"/><rect x="3" y="11" width="2" height="1" fill="#000000"/><rect x="5" y="11" width="1" height="1" fill="#ffffff"/><rect x="6" y="11" width="1" height="1" fill="#000000"/><rect x="7" y="11" width="1" height="1" fill="#ffffff"/><rect x="8" y="11" width="2" height="1" fill="#000000"/><rect x="10" y="11" width="1" height="1" fill="#ffffff"/><rect x="11" y="11" width="1" height="1" fill="#000000"/><rect x="12" y="11" width="1" height="1" fill="#ffffff"/><rect x="13" y="11" width="2" height="1" fill="#000000"/><rect x="0" y="12" width="16" height="1" fill="#000000"/><rect x="0" y="13" width="16" height="1" fill="#000000"/></svg>
<svg style="left:562px;top:75px" width="16" height="14" viewBox="0 0 16 14" shape-rendering="crispEdges"><rect x="0" y="0" width="14" height="1" fill="#808080"/><rect x="14" y="0" width="1" height="1" fill="#000000"/><rect x="0" y="1" width="1" height="1" fill="#808080"/><rect x="1" y="1" width="3" height="1" fill="#ffffff"/><rect x="4" y="1" width="10" height="1" fill="#00ffff"/><rect x="14" y="1" width="1" height="1" fill="#000000"/><rect x="0" y="2" width="1" height="1" fill="#808080"/><rect x="1" y="2" width="1" height="1" fill="#ffffff"/><rect x="2" y="2" width="12" height="1" fill="#00ffff"/><rect x="14" y="2" width="1" height="1" fill="#000000"/><rect x="0" y="3" width="1" height="1" fill="#808080"/><rect x="1" y="3" width="13" height="1" fill="#00ffff"/><rect x="14" y="3" width="1" height="1" fill="#000000"/><rect x="0" y="4" width="1" height="1" fill="#808080"/><rect x="1" y="4" width="13" height="1" fill="#00ffff"/><rect x="14" y="4" width="1" height="1" fill="#000000"/><rect x="0" y="5" width="1" height="1" fill="#808080"/><rect x="1" y="5" width="13" height="1" fill="#00ffff"/><rect x="14" y="5" width="1" height="1" fill="#000000"/><rect x="0" y="6" width="1" height="1" fill="#808080"/><rect x="1" y="6" width="13" height="1" fill="#00ffff"/><rect x="14" y="6" width="1" height="1" fill="#000000"/><rect x="0" y="7" width="1" height="1" fill="#808080"/><rect x="1" y="7" width="13" height="1" fill="#00ffff"/><rect x="14" y="7" width="1" height="1" fill="#000000"/><rect x="0" y="8" width="1" height="1" fill="#808080"/><rect x="1" y="8" width="13" height="1" fill="#00ffff"/><rect x="14" y="8" width="1" height="1" fill="#000000"/><rect x="0" y="9" width="1" height="1" fill="#808080"/><rect x="1" y="9" width="13" height="1" fill="#00ffff"/><rect x="14" y="9" width="1" height="1" fill="#000000"/><rect x="0" y="10" width="1" height="1" fill="#808080"/><rect x="1" y="10" width="13" height="1" fill="#00ffff"/><rect x="14" y="10" width="1" height="1" fill="#000000"/><rect x="0" y="11" width="14" height="1" fill="#808080"/><rect x="14" y="11" width="1" height="1" fill="#000000"/><rect x="0" y="12" width="15" height="1" fill="#000000"/></svg>
<div style="left:4px;top:96px;width:118px;height:1px;background:#ffffff;"></div>
<div style="left:4px;top:96px;width:1px;height:226px;background:#ffffff;"></div>
<div style="left:117px;top:96px;width:1px;height:226px;background:#ffffff;"></div>
<div style="left:121px;top:96px;width:1px;height:226px;background:#808080;"></div>
<span class="t" style="left:10.0px;top:111px;color:#808080;transform:translateY(-10px) scaleX(0.9455);transform-origin:0 0;">Workspace</span>
<div style="left:67px;top:106px;width:16px;height:1px;background:#ffffff;"></div>
<div style="left:67px;top:106px;width:1px;height:3px;background:#ffffff;"></div>
<div style="left:68px;top:108px;width:15px;height:1px;background:#808080;"></div>
<div style="left:82px;top:106px;width:1px;height:3px;background:#808080;"></div>
<div style="left:86px;top:101px;width:12px;height:12px;background:#d4d0c8;"></div>
<div style="left:86px;top:101px;width:11px;height:1px;background:#ffffff;"></div>
<div style="left:86px;top:101px;width:1px;height:11px;background:#ffffff;"></div>
<div style="left:86px;top:112px;width:12px;height:1px;background:#404040;"></div>
<div style="left:97px;top:101px;width:1px;height:12px;background:#404040;"></div>
<div style="left:87px;top:111px;width:10px;height:1px;background:#808080;"></div>
<div style="left:96px;top:102px;width:1px;height:10px;background:#808080;"></div>
<div style="left:100px;top:101px;width:12px;height:12px;background:#d4d0c8;"></div>
<div style="left:100px;top:101px;width:11px;height:1px;background:#ffffff;"></div>
<div style="left:100px;top:101px;width:1px;height:11px;background:#ffffff;"></div>
<div style="left:100px;top:112px;width:12px;height:1px;background:#404040;"></div>
<div style="left:111px;top:101px;width:1px;height:12px;background:#404040;"></div>
<div style="left:101px;top:111px;width:10px;height:1px;background:#808080;"></div>
<div style="left:110px;top:102px;width:1px;height:10px;background:#808080;"></div>
<div style="left:91px;top:105px;width:1px;height:1px;background:#808080;"></div>
<div style="left:90px;top:106px;width:3px;height:1px;background:#808080;"></div>
<div style="left:89px;top:107px;width:5px;height:1px;background:#808080;"></div>
<div style="left:88px;top:108px;width:7px;height:1px;background:#808080;"></div>
<div style="left:103px;top:104px;width:2px;height:1px;background:#000000;"></div>
<div style="left:107px;top:104px;width:2px;height:1px;background:#000000;"></div>
<div style="left:104px;top:105px;width:2px;height:1px;background:#000000;"></div>
<div style="left:106px;top:105px;width:2px;height:1px;background:#000000;"></div>
<div style="left:105px;top:106px;width:2px;height:1px;background:#000000;"></div>
<div style="left:105px;top:106px;width:2px;height:1px;background:#000000;"></div>
<div style="left:106px;top:107px;width:2px;height:1px;background:#000000;"></div>
<div style="left:104px;top:107px;width:2px;height:1px;background:#000000;"></div>
<div style="left:107px;top:108px;width:2px;height:1px;background:#000000;"></div>
<div style="left:103px;top:108px;width:2px;height:1px;background:#000000;"></div>
<div style="left:12px;top:123px;width:97px;height:151px;background:#ffffff;"></div>
<div style="left:8px;top:119px;width:104px;height:1px;background:#ffffff;"></div>
<div style="left:8px;top:119px;width:1px;height:174px;background:#ffffff;"></div>
<div style="left:8px;top:293px;width:105px;height:1px;background:#404040;"></div>
<div style="left:112px;top:119px;width:1px;height:175px;background:#404040;"></div>
<div style="left:9px;top:120px;width:102px;height:1px;background:#808080;"></div>
<div style="left:9px;top:120px;width:1px;height:172px;background:#808080;"></div>
<div style="left:9px;top:292px;width:103px;height:1px;background:#808080;"></div>
<div style="left:111px;top:120px;width:1px;height:173px;background:#808080;"></div>
<div style="left:10px;top:121px;width:100px;height:1px;background:#404040;"></div>
<div style="left:10px;top:121px;width:1px;height:170px;background:#404040;"></div>
<div style="left:10px;top:291px;width:101px;height:1px;background:#ffffff;"></div>
<div style="left:110px;top:121px;width:1px;height:171px;background:#ffffff;"></div>
<div style="left:11px;top:122px;width:98px;height:1px;background:#404040;"></div>
<div style="left:11px;top:122px;width:1px;height:168px;background:#404040;"></div>
<div style="left:11px;top:290px;width:99px;height:1px;background:#d4d0c8;"></div>
<div style="left:109px;top:122px;width:1px;height:169px;background:#d4d0c8;"></div>
<div style="left:16px;top:129px;width:9px;height:9px;background:#ffffff;"></div>
<div style="left:16px;top:129px;width:8px;height:1px;background:#808080;"></div>
<div style="left:16px;top:129px;width:1px;height:8px;background:#808080;"></div>
<div style="left:16px;top:137px;width:9px;height:1px;background:#808080;"></div>
<div style="left:24px;top:129px;width:1px;height:9px;background:#808080;"></div>
<div style="left:18px;top:133px;width:5px;height:1px;background:#000000;"></div>
<div style="left:26px;top:133px;width:1px;height:1px;background:#808080;"></div>
<div style="left:28px;top:133px;width:1px;height:1px;background:#808080;"></div>
<div style="left:30px;top:133px;width:1px;height:1px;background:#808080;"></div>
<div style="left:39px;top:140px;width:1px;height:1px;background:#808080;"></div>
<div style="left:39px;top:142px;width:1px;height:1px;background:#808080;"></div>
<div style="left:39px;top:144px;width:1px;height:1px;background:#808080;"></div>
<div style="left:39px;top:146px;width:1px;height:1px;background:#808080;"></div>
<div style="left:39px;top:148px;width:1px;height:1px;background:#808080;"></div>
<div style="left:39px;top:150px;width:1px;height:1px;background:#808080;"></div>
<div style="left:39px;top:151px;width:1px;height:1px;background:#808080;"></div>
<div style="left:41px;top:151px;width:1px;height:1px;background:#808080;"></div>
<div style="left:43px;top:151px;width:1px;height:1px;background:#808080;"></div>
<div style="left:45px;top:151px;width:1px;height:1px;background:#808080;"></div>
<div style="left:47px;top:151px;width:1px;height:1px;background:#808080;"></div>
<div style="left:49px;top:151px;width:1px;height:1px;background:#808080;"></div>
<svg style="left:31px;top:124px" width="17" height="16" viewBox="0 0 17 16" shape-rendering="crispEdges"><rect x="0" y="0" width="6" height="1" fill="#808080"/><rect x="6" y="0" width="10" height="1" fill="#000080"/><rect x="0" y="1" width="1" height="1" fill="#808080"/><rect x="1" y="1" width="4" height="1" fill="#ffffff"/><rect x="5" y="1" width="2" height="1" fill="#808080"/><rect x="7" y="1" width="9" height="1" fill="#000080"/><rect x="0" y="2" width="1" height="1" fill="#808080"/><rect x="1" y="2" width="2" height="1" fill="#ffffff"/><rect x="3" y="2" width="6" height="1" fill="#808080"/><rect x="15" y="2" width="1" height="1" fill="#000000"/><rect x="0" y="3" width="1" height="1" fill="#808080"/><rect x="1" y="3" width="1" height="1" fill="#ffffff"/><rect x="2" y="3" width="1" height="1" fill="#000000"/><rect x="3" y="3" width="1" height="1" fill="#808080"/><rect x="4" y="3" width="4" height="1" fill="#ffffff"/><rect x="8" y="3" width="2" height="1" fill="#808080"/><rect x="15" y="3" width="1" height="1" fill="#000000"/><rect x="0" y="4" width="1" height="1" fill="#808080"/><rect x="1" y="4" width="2" height="1" fill="#ffffff"/><rect x="3" y="4" width="1" height="1" fill="#808080"/><rect x="4" y="4" width="2" height="1" fill="#ffffff"/><rect x="6" y="4" width="6" height="1" fill="#000000"/><rect x="15" y="4" width="1" height="1" fill="#000000"/><rect x="0" y="5" width="1" height="1" fill="#808080"/><rect x="1" y="5" width="1" height="1" fill="#ffffff"/><rect x="2" y="5" width="1" height="1" fill="#000000"/><rect x="3" y="5" width="1" height="1" fill="#808080"/><rect x="4" y="5" width="1" height="1" fill="#ffffff"/><rect x="5" y="5" width="2" height="1" fill="#000000"/><rect x="7" y="5" width="4" height="1" fill="#ffffff"/><rect x="11" y="5" width="2" height="1" fill="#000000"/><rect x="15" y="5" width="1" height="1" fill="#000000"/><rect x="0" y="6" width="1" height="1" fill="#808080"/><rect x="1" y="6" width="2" height="1" fill="#ffffff"/><rect x="3" y="6" width="1" height="1" fill="#808080"/><rect x="4" y="6" width="2" height="1" fill="#ffffff"/><rect x="6" y="6" width="1" height="1" fill="#000000"/><rect x="7" y="6" width="4" height="1" fill="#ffffff"/><rect x="11" y="6" width="1" height="1" fill="#000000"/><rect x="12" y="6" width="1" height="1" fill="#ffffff"/><rect x="13" y="6" width="1" height="1" fill="#000000"/><rect x="15" y="6" width="1" height="1" fill="#000000"/><rect x="0" y="7" width="1" height="1" fill="#808080"/><rect x="1" y="7" width="1" height="1" fill="#ffffff"/><rect x="2" y="7" width="1" height="1" fill="#000000"/><rect x="3" y="7" width="1" height="1" fill="#808080"/><rect x="4" y="7" width="1" height="1" fill="#ffffff"/><rect x="5" y="7" width="2" height="1" fill="#000000"/><rect x="7" y="7" width="4" height="1" fill="#ffffff"/><rect x="11" y="7" width="5" height="1" fill="#000000"/><rect x="0" y="8" width="1" height="1" fill="#808080"/><rect x="1" y="8" width="2" height="1" fill="#ffffff"/><rect x="3" y="8" width="1" height="1" fill="#808080"/><rect x="4" y="8" width="2" height="1" fill="#ffffff"/><rect x="6" y="8" width="1" height="1" fill="#000000"/><rect x="7" y="8" width="1" height="1" fill="#ffffff"/><rect x="8" y="8" width="5" height="1" fill="#000000"/><rect x="13" y="8" width="1" height="1" fill="#ffffff"/><rect x="14" y="8" width="2" height="1" fill="#000000"/><rect x="0" y="9" width="1" height="1" fill="#808080"/><rect x="1" y="9" width="2" height="1" fill="#ffffff"/><rect x="3" y="9" width="1" height="1" fill="#808080"/><rect x="4" y="9" width="1" height="1" fill="#ffffff"/><rect x="5" y="9" width="2" height="1" fill="#000000"/><rect x="7" y="9" width="7" height="1" fill="#ffffff"/><rect x="14" y="9" width="2" height="1" fill="#000000"/><rect x="0" y="10" width="4" height="1" fill="#808080"/><rect x="4" y="10" width="2" height="1" fill="#ffffff"/><rect x="6" y="10" width="1" height="1" fill="#000000"/><rect x="7" y="10" width="1" height="1" fill="#ffffff"/><rect x="8" y="10" width="5" height="1" fill="#000000"/><rect x="13" y="10" width="1" height="1" fill="#ffffff"/><rect x="14" y="10" width="2" height="1" fill="#000000"/><rect x="3" y="11" width="1" height="1" fill="#808080"/><rect x="4" y="11" width="2" height="1" fill="#ffffff"/><rect x="6" y="11" width="1" height="1" fill="#000000"/><rect x="7" y="11" width="7" height="1" fill="#ffffff"/><rect x="14" y="11" width="2" height="1" fill="#000000"/><rect x="3" y="12" width="3" height="1" fill="#808080"/><rect x="6" y="12" width="1" height="1" fill="#000000"/><rect x="7" y="12" width="1" height="1" fill="#ffffff"/><rect x="8" y="12" width="5" height="1" fill="#000000"/><rect x="13" y="12" width="1" height="1" fill="#ffffff"/><rect x="14" y="12" width="1" height="1" fill="#000000"/><rect x="6" y="13" width="1" height="1" fill="#000000"/><rect x="7" y="13" width="7" height="1" fill="#ffffff"/><rect x="14" y="13" width="1" height="1" fill="#000000"/><rect x="6" y="14" width="9" height="1" fill="#000000"/></svg>
<svg style="left:51px;top:142px" width="16" height="15" viewBox="0 0 16 15" shape-rendering="crispEdges"><rect x="0" y="0" width="15" height="1" fill="#0000ff"/><rect x="0" y="1" width="15" height="1" fill="#0000ff"/><rect x="0" y="2" width="1" height="1" fill="#000000"/><rect x="1" y="2" width="13" height="1" fill="#ffffff"/><rect x="14" y="2" width="1" height="1" fill="#000000"/><rect x="0" y="3" width="1" height="1" fill="#000000"/><rect x="1" y="3" width="13" height="1" fill="#ffffff"/><rect x="14" y="3" width="1" height="1" fill="#000000"/><rect x="0" y="4" width="1" height="1" fill="#000000"/><rect x="1" y="4" width="1" height="1" fill="#ffffff"/><rect x="2" y="4" width="3" height="1" fill="#808080"/><rect x="5" y="4" width="1" height="1" fill="#ffffff"/><rect x="6" y="4" width="3" height="1" fill="#808080"/><rect x="9" y="4" width="1" height="1" fill="#ffffff"/><rect x="10" y="4" width="3" height="1" fill="#808080"/><rect x="13" y="4" width="1" height="1" fill="#ffffff"/><rect x="14" y="4" width="1" height="1" fill="#000000"/><rect x="0" y="5" width="1" height="1" fill="#000000"/><rect x="1" y="5" width="13" height="1" fill="#ffffff"/><rect x="14" y="5" width="1" height="1" fill="#000000"/><rect x="0" y="6" width="1" height="1" fill="#000000"/><rect x="1" y="6" width="1" height="1" fill="#ffffff"/><rect x="2" y="6" width="3" height="1" fill="#808080"/><rect x="5" y="6" width="1" height="1" fill="#ffffff"/><rect x="6" y="6" width="3" height="1" fill="#808080"/><rect x="9" y="6" width="1" height="1" fill="#ffffff"/><rect x="10" y="6" width="3" height="1" fill="#808080"/><rect x="13" y="6" width="1" height="1" fill="#ffffff"/><rect x="14" y="6" width="1" height="1" fill="#000000"/><rect x="0" y="7" width="1" height="1" fill="#000000"/><rect x="1" y="7" width="13" height="1" fill="#ffffff"/><rect x="14" y="7" width="1" height="1" fill="#000000"/><rect x="0" y="8" width="1" height="1" fill="#000000"/><rect x="1" y="8" width="1" height="1" fill="#ffffff"/><rect x="2" y="8" width="3" height="1" fill="#808080"/><rect x="5" y="8" width="1" height="1" fill="#ffffff"/><rect x="6" y="8" width="3" height="1" fill="#808080"/><rect x="9" y="8" width="1" height="1" fill="#ffffff"/><rect x="10" y="8" width="3" height="1" fill="#808080"/><rect x="13" y="8" width="1" height="1" fill="#ffffff"/><rect x="14" y="8" width="1" height="1" fill="#000000"/><rect x="0" y="9" width="1" height="1" fill="#000000"/><rect x="1" y="9" width="13" height="1" fill="#ffffff"/><rect x="14" y="9" width="1" height="1" fill="#000000"/><rect x="0" y="10" width="1" height="1" fill="#000000"/><rect x="1" y="10" width="1" height="1" fill="#ffffff"/><rect x="2" y="10" width="3" height="1" fill="#808080"/><rect x="5" y="10" width="1" height="1" fill="#ffffff"/><rect x="6" y="10" width="3" height="1" fill="#808080"/><rect x="9" y="10" width="1" height="1" fill="#ffffff"/><rect x="10" y="10" width="3" height="1" fill="#808080"/><rect x="13" y="10" width="1" height="1" fill="#ffffff"/><rect x="14" y="10" width="1" height="1" fill="#000000"/><rect x="0" y="11" width="1" height="1" fill="#000000"/><rect x="1" y="11" width="13" height="1" fill="#ffffff"/><rect x="14" y="11" width="1" height="1" fill="#000000"/><rect x="0" y="12" width="1" height="1" fill="#000000"/><rect x="1" y="12" width="1" height="1" fill="#ffffff"/><rect x="2" y="12" width="3" height="1" fill="#808080"/><rect x="5" y="12" width="1" height="1" fill="#ffffff"/><rect x="6" y="12" width="3" height="1" fill="#808080"/><rect x="9" y="12" width="1" height="1" fill="#ffffff"/><rect x="10" y="12" width="3" height="1" fill="#808080"/><rect x="13" y="12" width="1" height="1" fill="#ffffff"/><rect x="14" y="12" width="1" height="1" fill="#000000"/><rect x="0" y="13" width="15" height="1" fill="#000000"/></svg>
<div style="left:12px;top:123px;width:97px;height:20px;overflow:hidden;background:none"><span class="tb" style="left:40px;top:12px;color:#000;letter-spacing:0.273px">'io' Project</span></div>
<span class="t" style="left:71.0px;top:154px;transform:translateY(-10px) scaleX(0.9444);transform-origin:0 0;">io.c</span>
<div style="left:12px;top:274px;width:16px;height:16px;background:#d4d0c8;"></div>
<div style="left:12px;top:274px;width:15px;height:1px;background:#d4d0c8;"></div>
<div style="left:12px;top:274px;width:1px;height:15px;background:#d4d0c8;"></div>
<div style="left:12px;top:289px;width:16px;height:1px;background:#404040;"></div>
<div style="left:27px;top:274px;width:1px;height:16px;background:#404040;"></div>
<div style="left:13px;top:275px;width:13px;height:1px;background:#ffffff;"></div>
<div style="left:13px;top:275px;width:1px;height:13px;background:#ffffff;"></div>
<div style="left:13px;top:288px;width:14px;height:1px;background:#808080;"></div>
<div style="left:26px;top:275px;width:1px;height:14px;background:#808080;"></div>
<div style="left:20px;top:278px;width:1px;height:7px;background:#000000;"></div>
<div style="left:19px;top:279px;width:1px;height:5px;background:#000000;"></div>
<div style="left:18px;top:280px;width:1px;height:3px;background:#000000;"></div>
<div style="left:17px;top:281px;width:1px;height:1px;background:#000000;"></div>
<div style="left:93px;top:274px;width:16px;height:16px;background:#d4d0c8;"></div>
<div style="left:93px;top:274px;width:15px;height:1px;background:#d4d0c8;"></div>
<div style="left:93px;top:274px;width:1px;height:15px;background:#d4d0c8;"></div>
<div style="left:93px;top:289px;width:16px;height:1px;background:#404040;"></div>
<div style="left:108px;top:274px;width:1px;height:16px;background:#404040;"></div>
<div style="left:94px;top:275px;width:13px;height:1px;background:#ffffff;"></div>
<div style="left:94px;top:275px;width:1px;height:13px;background:#ffffff;"></div>
<div style="left:94px;top:288px;width:14px;height:1px;background:#808080;"></div>
<div style="left:107px;top:275px;width:1px;height:14px;background:#808080;"></div>
<div style="left:99px;top:278px;width:1px;height:7px;background:#000000;"></div>
<div style="left:100px;top:279px;width:1px;height:5px;background:#000000;"></div>
<div style="left:101px;top:280px;width:1px;height:3px;background:#000000;"></div>
<div style="left:102px;top:281px;width:1px;height:1px;background:#000000;"></div>
<div style="left:28px;top:274px;width:49px;height:16px;background:#d4d0c8;"></div>
<div style="left:28px;top:274px;width:48px;height:1px;background:#d4d0c8;"></div>
<div style="left:28px;top:274px;width:1px;height:15px;background:#d4d0c8;"></div>
<div style="left:28px;top:289px;width:49px;height:1px;background:#404040;"></div>
<div style="left:76px;top:274px;width:1px;height:16px;background:#404040;"></div>
<div style="left:29px;top:275px;width:46px;height:1px;background:#ffffff;"></div>
<div style="left:29px;top:275px;width:1px;height:13px;background:#ffffff;"></div>
<div style="left:29px;top:288px;width:47px;height:1px;background:#808080;"></div>
<div style="left:75px;top:275px;width:1px;height:14px;background:#808080;"></div>
<div style="left:77px;top:274px;width:16px;height:16px;background:repeating-conic-gradient(#ffffff 0% 25%, #d4d0c8 0% 50%) 0 0/2px 2px;"></div>
<div style="left:8px;top:292px;width:59px;height:22px;background:#d4d0c8;"></div>
<div style="left:8px;top:291px;width:1px;height:22px;background:#ffffff;"></div>
<div style="left:9px;top:313px;width:56px;height:1px;background:#808080;"></div>
<div style="left:9px;top:314px;width:57px;height:1px;background:#404040;"></div>
<div style="left:65px;top:294px;width:1px;height:19px;background:#808080;"></div>
<div style="left:66px;top:293px;width:1px;height:21px;background:#404040;"></div>
<div style="left:10px;top:291px;width:100px;height:1px;background:#ffffff;"></div>
<svg style="left:16px;top:299px" width="17" height="14" viewBox="0 0 17 14" shape-rendering="crispEdges"><rect x="0" y="0" width="5" height="1" fill="#0000ff"/><rect x="5" y="0" width="1" height="1" fill="#000000"/><rect x="0" y="1" width="5" height="1" fill="#0000ff"/><rect x="5" y="1" width="1" height="1" fill="#000000"/><rect x="11" y="1" width="4" height="1" fill="#ff00ff"/><rect x="15" y="1" width="1" height="1" fill="#000000"/><rect x="0" y="2" width="5" height="1" fill="#0000ff"/><rect x="5" y="2" width="1" height="1" fill="#000000"/><rect x="6" y="2" width="3" height="1" fill="#808000"/><rect x="11" y="2" width="4" height="1" fill="#ff00ff"/><rect x="15" y="2" width="1" height="1" fill="#000000"/><rect x="0" y="3" width="5" height="1" fill="#0000ff"/><rect x="5" y="3" width="1" height="1" fill="#000000"/><rect x="8" y="3" width="3" height="1" fill="#808000"/><rect x="11" y="3" width="4" height="1" fill="#ff00ff"/><rect x="15" y="3" width="1" height="1" fill="#000000"/><rect x="0" y="4" width="5" height="1" fill="#0000ff"/><rect x="5" y="4" width="1" height="1" fill="#000000"/><rect x="8" y="4" width="1" height="1" fill="#808000"/><rect x="11" y="4" width="4" height="1" fill="#ff00ff"/><rect x="15" y="4" width="1" height="1" fill="#000000"/><rect x="0" y="5" width="6" height="1" fill="#000000"/><rect x="8" y="5" width="1" height="1" fill="#808000"/><rect x="11" y="5" width="5" height="1" fill="#000000"/><rect x="8" y="6" width="1" height="1" fill="#808000"/><rect x="8" y="7" width="1" height="1" fill="#808000"/><rect x="11" y="7" width="4" height="1" fill="#00ffff"/><rect x="15" y="7" width="1" height="1" fill="#000000"/><rect x="8" y="8" width="1" height="1" fill="#808000"/><rect x="11" y="8" width="4" height="1" fill="#00ffff"/><rect x="15" y="8" width="1" height="1" fill="#000000"/><rect x="8" y="9" width="3" height="1" fill="#808000"/><rect x="11" y="9" width="4" height="1" fill="#00ffff"/><rect x="15" y="9" width="1" height="1" fill="#000000"/><rect x="11" y="10" width="4" height="1" fill="#00ffff"/><rect x="15" y="10" width="1" height="1" fill="#000000"/><rect x="11" y="11" width="4" height="1" fill="#00ffff"/><rect x="15" y="11" width="1" height="1" fill="#000000"/><rect x="11" y="12" width="5" height="1" fill="#000000"/></svg>
<span class="t" style="left:38.0px;top:309px;transform:translateY(-10px) scaleX(0.875);transform-origin:0 0;">Files</span>
<div style="left:122px;top:96px;width:501px;height:1px;background:#808080;"></div>
<div style="left:122px;top:96px;width:1px;height:225px;background:#808080;"></div>
<div style="left:122px;top:321px;width:502px;height:1px;background:#ffffff;"></div>
<div style="left:623px;top:96px;width:1px;height:226px;background:#ffffff;"></div>
<div style="left:123px;top:97px;width:499px;height:1px;background:#404040;"></div>
<div style="left:123px;top:97px;width:1px;height:223px;background:#404040;"></div>
<div style="left:123px;top:320px;width:500px;height:1px;background:#d4d0c8;"></div>
<div style="left:622px;top:97px;width:1px;height:224px;background:#d4d0c8;"></div>
<div style="left:124px;top:98px;width:44px;height:1px;background:#ffffff;"></div>
<div style="left:124px;top:98px;width:1px;height:21px;background:#ffffff;"></div>
<div style="left:124px;top:119px;width:1px;height:185px;background:#dedbd4;"></div>
<div style="left:168px;top:99px;width:1px;height:19px;background:#808080;"></div>
<div style="left:169px;top:99px;width:1px;height:20px;background:#404040;"></div>
<div style="left:170px;top:118px;width:453px;height:1px;background:#ffffff;"></div>
<span class="t" style="left:133.0px;top:111px;transform:translateY(-10px) scaleX(0.9444);transform-origin:0 0;">io.c</span>
<div style="left:144px;top:124px;width:462px;height:180px;background:#ffffff;"></div>
<div style="left:606px;top:124px;width:16px;height:180px;background:repeating-conic-gradient(#ffffff 0% 25%, #d4d0c8 0% 50%) 0 0/2px 2px;"></div>
<div style="left:606px;top:124px;width:16px;height:16px;background:#d4d0c8;"></div>
<div style="left:606px;top:124px;width:15px;height:1px;background:#d4d0c8;"></div>
<div style="left:606px;top:124px;width:1px;height:15px;background:#d4d0c8;"></div>
<div style="left:606px;top:139px;width:16px;height:1px;background:#404040;"></div>
<div style="left:621px;top:124px;width:1px;height:16px;background:#404040;"></div>
<div style="left:607px;top:125px;width:13px;height:1px;background:#ffffff;"></div>
<div style="left:607px;top:125px;width:1px;height:13px;background:#ffffff;"></div>
<div style="left:607px;top:138px;width:14px;height:1px;background:#808080;"></div>
<div style="left:620px;top:125px;width:1px;height:14px;background:#808080;"></div>
<div style="left:613px;top:130px;width:1px;height:1px;background:#000000;"></div>
<div style="left:612px;top:131px;width:3px;height:1px;background:#000000;"></div>
<div style="left:611px;top:132px;width:5px;height:1px;background:#000000;"></div>
<div style="left:610px;top:133px;width:7px;height:1px;background:#000000;"></div>
<div style="left:606px;top:288px;width:16px;height:16px;background:#d4d0c8;"></div>
<div style="left:606px;top:288px;width:15px;height:1px;background:#d4d0c8;"></div>
<div style="left:606px;top:288px;width:1px;height:15px;background:#d4d0c8;"></div>
<div style="left:606px;top:303px;width:16px;height:1px;background:#404040;"></div>
<div style="left:621px;top:288px;width:1px;height:16px;background:#404040;"></div>
<div style="left:607px;top:289px;width:13px;height:1px;background:#ffffff;"></div>
<div style="left:607px;top:289px;width:1px;height:13px;background:#ffffff;"></div>
<div style="left:607px;top:302px;width:14px;height:1px;background:#808080;"></div>
<div style="left:620px;top:289px;width:1px;height:14px;background:#808080;"></div>
<div style="left:610px;top:294px;width:7px;height:1px;background:#000000;"></div>
<div style="left:611px;top:295px;width:5px;height:1px;background:#000000;"></div>
<div style="left:612px;top:296px;width:3px;height:1px;background:#000000;"></div>
<div style="left:613px;top:297px;width:1px;height:1px;background:#000000;"></div>
<div style="left:606px;top:216px;width:16px;height:36px;background:#d4d0c8;"></div>
<div style="left:606px;top:216px;width:15px;height:1px;background:#d4d0c8;"></div>
<div style="left:606px;top:216px;width:1px;height:35px;background:#d4d0c8;"></div>
<div style="left:606px;top:251px;width:16px;height:1px;background:#404040;"></div>
<div style="left:621px;top:216px;width:1px;height:36px;background:#404040;"></div>
<div style="left:607px;top:217px;width:13px;height:1px;background:#ffffff;"></div>
<div style="left:607px;top:217px;width:1px;height:33px;background:#ffffff;"></div>
<div style="left:607px;top:250px;width:14px;height:1px;background:#808080;"></div>
<div style="left:620px;top:217px;width:1px;height:34px;background:#808080;"></div>
<div style="left:140px;top:304px;width:450px;height:16px;background:repeating-conic-gradient(#ffffff 0% 25%, #d4d0c8 0% 50%) 0 0/2px 2px;"></div>
<div style="left:124px;top:304px;width:16px;height:16px;background:#d4d0c8;"></div>
<div style="left:124px;top:304px;width:15px;height:1px;background:#d4d0c8;"></div>
<div style="left:124px;top:304px;width:1px;height:15px;background:#d4d0c8;"></div>
<div style="left:124px;top:319px;width:16px;height:1px;background:#404040;"></div>
<div style="left:139px;top:304px;width:1px;height:16px;background:#404040;"></div>
<div style="left:125px;top:305px;width:13px;height:1px;background:#ffffff;"></div>
<div style="left:125px;top:305px;width:1px;height:13px;background:#ffffff;"></div>
<div style="left:125px;top:318px;width:14px;height:1px;background:#808080;"></div>
<div style="left:138px;top:305px;width:1px;height:14px;background:#808080;"></div>
<div style="left:132px;top:308px;width:1px;height:7px;background:#000000;"></div>
<div style="left:131px;top:309px;width:1px;height:5px;background:#000000;"></div>
<div style="left:130px;top:310px;width:1px;height:3px;background:#000000;"></div>
<div style="left:129px;top:311px;width:1px;height:1px;background:#000000;"></div>
<div style="left:590px;top:304px;width:16px;height:16px;background:#d4d0c8;"></div>
<div style="left:590px;top:304px;width:15px;height:1px;background:#d4d0c8;"></div>
<div style="left:590px;top:304px;width:1px;height:15px;background:#d4d0c8;"></div>
<div style="left:590px;top:319px;width:16px;height:1px;background:#404040;"></div>
<div style="left:605px;top:304px;width:1px;height:16px;background:#404040;"></div>
<div style="left:591px;top:305px;width:13px;height:1px;background:#ffffff;"></div>
<div style="left:591px;top:305px;width:1px;height:13px;background:#ffffff;"></div>
<div style="left:591px;top:318px;width:14px;height:1px;background:#808080;"></div>
<div style="left:604px;top:305px;width:1px;height:14px;background:#808080;"></div>
<div style="left:596px;top:308px;width:1px;height:7px;background:#000000;"></div>
<div style="left:597px;top:309px;width:1px;height:5px;background:#000000;"></div>
<div style="left:598px;top:310px;width:1px;height:3px;background:#000000;"></div>
<div style="left:599px;top:311px;width:1px;height:1px;background:#000000;"></div>
<div style="left:140px;top:304px;width:329px;height:16px;background:#d4d0c8;"></div>
<div style="left:140px;top:304px;width:328px;height:1px;background:#d4d0c8;"></div>
<div style="left:140px;top:304px;width:1px;height:15px;background:#d4d0c8;"></div>
<div style="left:140px;top:319px;width:329px;height:1px;background:#404040;"></div>
<div style="left:468px;top:304px;width:1px;height:16px;background:#404040;"></div>
<div style="left:141px;top:305px;width:326px;height:1px;background:#ffffff;"></div>
<div style="left:141px;top:305px;width:1px;height:13px;background:#ffffff;"></div>
<div style="left:141px;top:318px;width:327px;height:1px;background:#808080;"></div>
<div style="left:467px;top:305px;width:1px;height:14px;background:#808080;"></div>
<div style="left:144px;top:124px;width:462px;height:180px;overflow:hidden;background:none">
<pre class="m" style="left:1px;top:12px"><span style="color:#0000ff">main</span><span style="color:#000">()</span></pre>
<pre class="m" style="left:1px;top:25px"><span style="color:#000">{</span></pre>
<pre class="m" style="left:1px;top:38px"><span style="color:#000">    serinit(</span><span style="color:#800000">19200</span><span style="color:#000">);</span></pre>
<pre class="m" style="left:1px;top:51px"><span style="color:#008000">    /* Infinite Loop */</span></pre>
<pre class="m" style="left:1px;top:64px"><span style="color:#000">    </span><span style="color:#0000ff">for</span><span style="color:#000">( ;; )</span></pre>
<pre class="m" style="left:1px;top:77px"><span style="color:#000">    {</span></pre>
<pre class="m" style="left:1px;top:90px"><span style="color:#008000">        /* Reset all the ports */</span></pre>
<pre class="m" style="left:1px;top:103px"><span style="color:#000">        P0 = </span><span style="color:#800000">0</span><span style="color:#000">;</span></pre>
<pre class="m" style="left:1px;top:116px"><span style="color:#000">        P1 = </span><span style="color:#800000">0</span><span style="color:#000">;</span></pre>
<pre class="m" style="left:1px;top:129px"><span style="color:#000">        P2 = </span><span style="color:#800000">0</span><span style="color:#000">;</span></pre>
<pre class="m" style="left:1px;top:142px"><span style="color:#000">        P3 = </span><span style="color:#800000">0</span><span style="color:#000">;</span></pre>
<pre class="m" style="left:1px;top:155px"><span style="color:#000"></span></pre>
<pre class="m" style="left:1px;top:168px"><span style="color:#008000">        /* Delay 1 millisecond */</span></pre>
<pre class="m" style="left:1px;top:181px"><span style="color:#000">        delay(</span><span style="color:#800000">1</span><span style="color:#000">);</span></pre>
</div>
<div style="left:176px;top:267px;width:2px;height:13px;background:#000000;"></div>
<div style="left:4px;top:321px;width:114px;height:1px;background:#808080;"></div>
<div style="left:118px;top:321px;width:506px;height:1px;background:#ffffff;"></div>
<div style="left:4px;top:322px;width:620px;height:1px;background:#ffffff;"></div>
<div style="left:4px;top:322px;width:1px;height:4px;background:#ffffff;"></div>
<div style="left:4px;top:326px;width:620px;height:1px;background:#808080;"></div>
<div style="left:4px;top:327px;width:620px;height:1px;background:#404040;"></div>
<div style="left:7px;top:331px;width:12px;height:12px;background:#d4d0c8;"></div>
<div style="left:7px;top:331px;width:11px;height:1px;background:#ffffff;"></div>
<div style="left:7px;top:331px;width:1px;height:11px;background:#ffffff;"></div>
<div style="left:7px;top:342px;width:12px;height:1px;background:#404040;"></div>
<div style="left:18px;top:331px;width:1px;height:12px;background:#404040;"></div>
<div style="left:8px;top:341px;width:10px;height:1px;background:#808080;"></div>
<div style="left:17px;top:332px;width:1px;height:10px;background:#808080;"></div>
<div style="left:7px;top:345px;width:12px;height:12px;background:#d4d0c8;"></div>
<div style="left:7px;top:345px;width:11px;height:1px;background:#ffffff;"></div>
<div style="left:7px;top:345px;width:1px;height:11px;background:#ffffff;"></div>
<div style="left:7px;top:356px;width:12px;height:1px;background:#404040;"></div>
<div style="left:18px;top:345px;width:1px;height:12px;background:#404040;"></div>
<div style="left:8px;top:355px;width:10px;height:1px;background:#808080;"></div>
<div style="left:17px;top:346px;width:1px;height:10px;background:#808080;"></div>
<div style="left:10px;top:334px;width:2px;height:1px;background:#000000;"></div>
<div style="left:14px;top:334px;width:2px;height:1px;background:#000000;"></div>
<div style="left:11px;top:335px;width:2px;height:1px;background:#000000;"></div>
<div style="left:13px;top:335px;width:2px;height:1px;background:#000000;"></div>
<div style="left:12px;top:336px;width:2px;height:1px;background:#000000;"></div>
<div style="left:12px;top:336px;width:2px;height:1px;background:#000000;"></div>
<div style="left:13px;top:337px;width:2px;height:1px;background:#000000;"></div>
<div style="left:11px;top:337px;width:2px;height:1px;background:#000000;"></div>
<div style="left:14px;top:338px;width:2px;height:1px;background:#000000;"></div>
<div style="left:10px;top:338px;width:2px;height:1px;background:#000000;"></div>
<div style="left:12px;top:350px;width:1px;height:1px;background:#808080;"></div>
<div style="left:13px;top:349px;width:1px;height:3px;background:#808080;"></div>
<div style="left:14px;top:348px;width:1px;height:5px;background:#808080;"></div>
<div style="left:15px;top:347px;width:1px;height:7px;background:#808080;"></div>
<div style="left:11px;top:360px;width:1px;height:37px;background:#ffffff;"></div>
<div style="left:12px;top:360px;width:1px;height:37px;background:#d4d0c8;"></div>
<div style="left:13px;top:360px;width:1px;height:37px;background:#808080;"></div>
<span class="t" style="left:7px;top:434px;color:#808080;transform:rotate(-90deg);transform-origin:0 0;">Output</span>
<div style="left:28px;top:339px;width:572px;height:53px;background:#ffffff;"></div>
<div style="left:24px;top:335px;width:595px;height:1px;background:#ffffff;"></div>
<div style="left:24px;top:335px;width:1px;height:97px;background:#ffffff;"></div>
<div style="left:619px;top:335px;width:1px;height:78px;background:#404040;"></div>
<div style="left:618px;top:336px;width:1px;height:76px;background:#808080;"></div>
<div style="left:68px;top:412px;width:552px;height:1px;background:#404040;"></div>
<div style="left:68px;top:411px;width:551px;height:1px;background:#808080;"></div>
<div style="left:25px;top:336px;width:592px;height:1px;background:#808080;"></div>
<div style="left:25px;top:336px;width:1px;height:73px;background:#808080;"></div>
<div style="left:26px;top:337px;width:590px;height:1px;background:#404040;"></div>
<div style="left:26px;top:337px;width:1px;height:71px;background:#404040;"></div>
<div style="left:27px;top:338px;width:589px;height:1px;background:#404040;"></div>
<div style="left:27px;top:338px;width:1px;height:70px;background:#404040;"></div>
<div style="left:25px;top:409px;width:593px;height:1px;background:#ffffff;"></div>
<div style="left:617px;top:336px;width:1px;height:74px;background:#ffffff;"></div>
<div style="left:28px;top:339px;width:572px;height:53px;overflow:hidden;background:none">
<span class="t" style="left:4.0px;top:11px;transform:translateY(-10px) scaleX(0.9814);transform-origin:0 0;">Compiling C:\bipom\devtools\SDCC\examples\IO\io.c...</span>
<span class="t" style="left:4.0px;top:25px;transform:translateY(-10px) scaleX(0.9865);transform-origin:0 0;">Linking io.rel ...</span>
<span class="t" style="left:4px;top:39px;letter-spacing:0.049px;">-k C:\bipom\devtools\sdcc\bin\..\lib\large</span>
<span class="t" style="left:4.0px;top:53px;transform:translateY(-10px) scaleX(0.9821);transform-origin:0 0;">-l C:\bipom\devtools\sdcc\lib\large\libbipom.lib</span>
</div>
<div style="left:600px;top:339px;width:16px;height:53px;background:repeating-conic-gradient(#ffffff 0% 25%, #d4d0c8 0% 50%) 0 0/2px 2px;"></div>
<div style="left:600px;top:339px;width:16px;height:16px;background:#d4d0c8;"></div>
<div style="left:600px;top:339px;width:15px;height:1px;background:#d4d0c8;"></div>
<div style="left:600px;top:339px;width:1px;height:15px;background:#d4d0c8;"></div>
<div style="left:600px;top:354px;width:16px;height:1px;background:#404040;"></div>
<div style="left:615px;top:339px;width:1px;height:16px;background:#404040;"></div>
<div style="left:601px;top:340px;width:13px;height:1px;background:#ffffff;"></div>
<div style="left:601px;top:340px;width:1px;height:13px;background:#ffffff;"></div>
<div style="left:601px;top:353px;width:14px;height:1px;background:#808080;"></div>
<div style="left:614px;top:340px;width:1px;height:14px;background:#808080;"></div>
<div style="left:607px;top:345px;width:1px;height:1px;background:#000000;"></div>
<div style="left:606px;top:346px;width:3px;height:1px;background:#000000;"></div>
<div style="left:605px;top:347px;width:5px;height:1px;background:#000000;"></div>
<div style="left:604px;top:348px;width:7px;height:1px;background:#000000;"></div>
<div style="left:600px;top:376px;width:16px;height:16px;background:#d4d0c8;"></div>
<div style="left:600px;top:376px;width:15px;height:1px;background:#d4d0c8;"></div>
<div style="left:600px;top:376px;width:1px;height:15px;background:#d4d0c8;"></div>
<div style="left:600px;top:391px;width:16px;height:1px;background:#404040;"></div>
<div style="left:615px;top:376px;width:1px;height:16px;background:#404040;"></div>
<div style="left:601px;top:377px;width:13px;height:1px;background:#ffffff;"></div>
<div style="left:601px;top:377px;width:1px;height:13px;background:#ffffff;"></div>
<div style="left:601px;top:390px;width:14px;height:1px;background:#808080;"></div>
<div style="left:614px;top:377px;width:1px;height:14px;background:#808080;"></div>
<div style="left:604px;top:382px;width:7px;height:1px;background:#000000;"></div>
<div style="left:605px;top:383px;width:5px;height:1px;background:#000000;"></div>
<div style="left:606px;top:384px;width:3px;height:1px;background:#000000;"></div>
<div style="left:607px;top:385px;width:1px;height:1px;background:#000000;"></div>
<div style="left:600px;top:355px;width:16px;height:8px;background:#d4d0c8;"></div>
<div style="left:600px;top:355px;width:15px;height:1px;background:#d4d0c8;"></div>
<div style="left:600px;top:355px;width:1px;height:7px;background:#d4d0c8;"></div>
<div style="left:600px;top:362px;width:16px;height:1px;background:#404040;"></div>
<div style="left:615px;top:355px;width:1px;height:8px;background:#404040;"></div>
<div style="left:601px;top:356px;width:13px;height:1px;background:#ffffff;"></div>
<div style="left:601px;top:356px;width:1px;height:5px;background:#ffffff;"></div>
<div style="left:601px;top:361px;width:14px;height:1px;background:#808080;"></div>
<div style="left:614px;top:356px;width:1px;height:6px;background:#808080;"></div>
<div style="left:44px;top:392px;width:540px;height:16px;background:repeating-conic-gradient(#ffffff 0% 25%, #d4d0c8 0% 50%) 0 0/2px 2px;"></div>
<div style="left:28px;top:392px;width:16px;height:16px;background:#d4d0c8;"></div>
<div style="left:28px;top:392px;width:15px;height:1px;background:#d4d0c8;"></div>
<div style="left:28px;top:392px;width:1px;height:15px;background:#d4d0c8;"></div>
<div style="left:28px;top:407px;width:16px;height:1px;background:#404040;"></div>
<div style="left:43px;top:392px;width:1px;height:16px;background:#404040;"></div>
<div style="left:29px;top:393px;width:13px;height:1px;background:#ffffff;"></div>
<div style="left:29px;top:393px;width:1px;height:13px;background:#ffffff;"></div>
<div style="left:29px;top:406px;width:14px;height:1px;background:#808080;"></div>
<div style="left:42px;top:393px;width:1px;height:14px;background:#808080;"></div>
<div style="left:36px;top:396px;width:1px;height:7px;background:#000000;"></div>
<div style="left:35px;top:397px;width:1px;height:5px;background:#000000;"></div>
<div style="left:34px;top:398px;width:1px;height:3px;background:#000000;"></div>
<div style="left:33px;top:399px;width:1px;height:1px;background:#000000;"></div>
<div style="left:584px;top:392px;width:16px;height:16px;background:#d4d0c8;"></div>
<div style="left:584px;top:392px;width:15px;height:1px;background:#d4d0c8;"></div>
<div style="left:584px;top:392px;width:1px;height:15px;background:#d4d0c8;"></div>
<div style="left:584px;top:407px;width:16px;height:1px;background:#404040;"></div>
<div style="left:599px;top:392px;width:1px;height:16px;background:#404040;"></div>
<div style="left:585px;top:393px;width:13px;height:1px;background:#ffffff;"></div>
<div style="left:585px;top:393px;width:1px;height:13px;background:#ffffff;"></div>
<div style="left:585px;top:406px;width:14px;height:1px;background:#808080;"></div>
<div style="left:598px;top:393px;width:1px;height:14px;background:#808080;"></div>
<div style="left:590px;top:396px;width:1px;height:7px;background:#000000;"></div>
<div style="left:591px;top:397px;width:1px;height:5px;background:#000000;"></div>
<div style="left:592px;top:398px;width:1px;height:3px;background:#000000;"></div>
<div style="left:593px;top:399px;width:1px;height:1px;background:#000000;"></div>
<div style="left:44px;top:392px;width:193px;height:16px;background:#d4d0c8;"></div>
<div style="left:44px;top:392px;width:192px;height:1px;background:#d4d0c8;"></div>
<div style="left:44px;top:392px;width:1px;height:15px;background:#d4d0c8;"></div>
<div style="left:44px;top:407px;width:193px;height:1px;background:#404040;"></div>
<div style="left:236px;top:392px;width:1px;height:16px;background:#404040;"></div>
<div style="left:45px;top:393px;width:190px;height:1px;background:#ffffff;"></div>
<div style="left:45px;top:393px;width:1px;height:13px;background:#ffffff;"></div>
<div style="left:45px;top:406px;width:191px;height:1px;background:#808080;"></div>
<div style="left:235px;top:393px;width:1px;height:14px;background:#808080;"></div>
<div style="left:600px;top:392px;width:16px;height:16px;background:#d4d0c8;"></div>
<div style="left:25px;top:431px;width:43px;height:1px;background:#808080;"></div>
<div style="left:25px;top:432px;width:44px;height:1px;background:#404040;"></div>
<div style="left:67px;top:412px;width:1px;height:20px;background:#808080;"></div>
<div style="left:68px;top:412px;width:1px;height:21px;background:#404040;"></div>
<span class="t" style="left:32.0px;top:428px;transform:translateY(-10px) scaleX(0.875);transform-origin:0 0;">Build</span>
<div style="left:70px;top:413px;width:1px;height:16px;background:#ffffff;"></div>
<div style="left:71px;top:429px;width:39px;height:1px;background:#808080;"></div>
<div style="left:71px;top:430px;width:40px;height:1px;background:#404040;"></div>
<div style="left:109px;top:413px;width:1px;height:17px;background:#808080;"></div>
<div style="left:110px;top:413px;width:1px;height:18px;background:#404040;"></div>
<span class="t" style="left:74.0px;top:426px;transform:translateY(-10px) scaleX(0.9688);transform-origin:0 0;">Debug</span>
<div style="left:112px;top:413px;width:1px;height:16px;background:#ffffff;"></div>
<div style="left:113px;top:429px;width:73px;height:1px;background:#808080;"></div>
<div style="left:113px;top:430px;width:74px;height:1px;background:#404040;"></div>
<div style="left:185px;top:413px;width:1px;height:17px;background:#808080;"></div>
<div style="left:186px;top:413px;width:1px;height:18px;background:#404040;"></div>
<span class="t" style="left:117.0px;top:426px;transform:translateY(-10px) scaleX(0.913);transform-origin:0 0;">Find in Files 1</span>
<div style="left:188px;top:413px;width:1px;height:16px;background:#ffffff;"></div>
<div style="left:189px;top:429px;width:73px;height:1px;background:#808080;"></div>
<div style="left:189px;top:430px;width:74px;height:1px;background:#404040;"></div>
<div style="left:261px;top:413px;width:1px;height:17px;background:#808080;"></div>
<div style="left:262px;top:413px;width:1px;height:18px;background:#404040;"></div>
<span class="t" style="left:193.0px;top:426px;transform:translateY(-10px) scaleX(0.913);transform-origin:0 0;">Find in Files 2</span>
<div style="left:264px;top:413px;width:1px;height:16px;background:#ffffff;"></div>
<div style="left:265px;top:429px;width:43px;height:1px;background:#808080;"></div>
<div style="left:265px;top:430px;width:44px;height:1px;background:#404040;"></div>
<div style="left:307px;top:413px;width:1px;height:17px;background:#808080;"></div>
<div style="left:308px;top:413px;width:1px;height:18px;background:#404040;"></div>
<span class="t" style="left:269.0px;top:426px;transform:translateY(-10px) scaleX(0.9429);transform-origin:0 0;">Loader</span>
<div style="left:4px;top:438px;width:620px;height:1px;background:#808080;"></div>
<div style="left:4px;top:439px;width:620px;height:1px;background:#ffffff;"></div>
<span class="t" style="left:6.0px;top:454px;transform:translateY(-10px) scaleX(0.9375);transform-origin:0 0;">Ready</span>
<div style="left:332px;top:442px;width:81px;height:1px;background:#808080;"></div>
<div style="left:332px;top:442px;width:1px;height:15px;background:#808080;"></div>
<div style="left:332px;top:457px;width:82px;height:1px;background:#ffffff;"></div>
<div style="left:413px;top:442px;width:1px;height:16px;background:#ffffff;"></div>
<div style="left:416px;top:442px;width:69px;height:1px;background:#808080;"></div>
<div style="left:416px;top:442px;width:1px;height:15px;background:#808080;"></div>
<div style="left:416px;top:457px;width:70px;height:1px;background:#ffffff;"></div>
<div style="left:485px;top:442px;width:1px;height:16px;background:#ffffff;"></div>
<div style="left:488px;top:442px;width:25px;height:1px;background:#808080;"></div>
<div style="left:488px;top:442px;width:1px;height:15px;background:#808080;"></div>
<div style="left:488px;top:457px;width:26px;height:1px;background:#ffffff;"></div>
<div style="left:513px;top:442px;width:1px;height:16px;background:#ffffff;"></div>
<div style="left:516px;top:442px;width:27px;height:1px;background:#808080;"></div>
<div style="left:516px;top:442px;width:1px;height:15px;background:#808080;"></div>
<div style="left:516px;top:457px;width:28px;height:1px;background:#ffffff;"></div>
<div style="left:543px;top:442px;width:1px;height:16px;background:#ffffff;"></div>
<div style="left:546px;top:442px;width:30px;height:1px;background:#808080;"></div>
<div style="left:546px;top:442px;width:1px;height:15px;background:#808080;"></div>
<div style="left:546px;top:457px;width:31px;height:1px;background:#ffffff;"></div>
<div style="left:576px;top:442px;width:1px;height:16px;background:#ffffff;"></div>
<div style="left:579px;top:442px;width:26px;height:1px;background:#808080;"></div>
<div style="left:579px;top:442px;width:1px;height:15px;background:#808080;"></div>
<div style="left:579px;top:457px;width:27px;height:1px;background:#ffffff;"></div>
<div style="left:605px;top:442px;width:1px;height:16px;background:#ffffff;"></div>
<span class="t" style="left:335.0px;top:454px;transform:translateY(-10px) scaleX(0.9661);transform-origin:0 0;">Ln 40, Col 5</span>
<span class="t" style="left:418.0px;top:454px;transform:translateY(-10px) scaleX(0.9851);transform-origin:0 0;">Disconnected</span>
<span class="t" style="left:518.0px;top:454px;transform:translateY(-10px) scaleX(0.84);transform-origin:0 0;">NUM</span>
<div style="left:610px;top:457px;width:1px;height:1px;background:#ffffff;"></div>
<div style="left:611px;top:456px;width:1px;height:1px;background:#ffffff;"></div>
<div style="left:612px;top:455px;width:1px;height:1px;background:#ffffff;"></div>
<div style="left:613px;top:454px;width:1px;height:1px;background:#ffffff;"></div>
<div style="left:614px;top:453px;width:1px;height:1px;background:#ffffff;"></div>
<div style="left:615px;top:452px;width:1px;height:1px;background:#ffffff;"></div>
<div style="left:616px;top:451px;width:1px;height:1px;background:#ffffff;"></div>
<div style="left:617px;top:450px;width:1px;height:1px;background:#ffffff;"></div>
<div style="left:618px;top:449px;width:1px;height:1px;background:#ffffff;"></div>
<div style="left:619px;top:448px;width:1px;height:1px;background:#ffffff;"></div>
<div style="left:620px;top:447px;width:1px;height:1px;background:#ffffff;"></div>
<div style="left:621px;top:446px;width:1px;height:1px;background:#ffffff;"></div>
<div style="left:622px;top:445px;width:1px;height:1px;background:#ffffff;"></div>
<div style="left:611px;top:457px;width:1px;height:1px;background:#808080;"></div>
<div style="left:612px;top:456px;width:1px;height:1px;background:#808080;"></div>
<div style="left:613px;top:455px;width:1px;height:1px;background:#808080;"></div>
<div style="left:614px;top:454px;width:1px;height:1px;background:#808080;"></div>
<div style="left:615px;top:453px;width:1px;height:1px;background:#808080;"></div>
<div style="left:616px;top:452px;width:1px;height:1px;background:#808080;"></div>
<div style="left:617px;top:451px;width:1px;height:1px;background:#808080;"></div>
<div style="left:618px;top:450px;width:1px;height:1px;background:#808080;"></div>
<div style="left:619px;top:449px;width:1px;height:1px;background:#808080;"></div>
<div style="left:620px;top:448px;width:1px;height:1px;background:#808080;"></div>
<div style="left:621px;top:447px;width:1px;height:1px;background:#808080;"></div>
<div style="left:622px;top:446px;width:1px;height:1px;background:#808080;"></div>
<div style="left:612px;top:457px;width:1px;height:1px;background:#808080;"></div>
<div style="left:613px;top:456px;width:1px;height:1px;background:#808080;"></div>
<div style="left:614px;top:455px;width:1px;height:1px;background:#808080;"></div>
<div style="left:615px;top:454px;width:1px;height:1px;background:#808080;"></div>
<div style="left:616px;top:453px;width:1px;height:1px;background:#808080;"></div>
<div style="left:617px;top:452px;width:1px;height:1px;background:#808080;"></div>
<div style="left:618px;top:451px;width:1px;height:1px;background:#808080;"></div>
<div style="left:619px;top:450px;width:1px;height:1px;background:#808080;"></div>
<div style="left:620px;top:449px;width:1px;height:1px;background:#808080;"></div>
<div style="left:621px;top:448px;width:1px;height:1px;background:#808080;"></div>
<div style="left:622px;top:447px;width:1px;height:1px;background:#808080;"></div>
<div style="left:614px;top:457px;width:1px;height:1px;background:#ffffff;"></div>
<div style="left:615px;top:456px;width:1px;height:1px;background:#ffffff;"></div>
<div style="left:616px;top:455px;width:1px;height:1px;background:#ffffff;"></div>
<div style="left:617px;top:454px;width:1px;height:1px;background:#ffffff;"></div>
<div style="left:618px;top:453px;width:1px;height:1px;background:#ffffff;"></div>
<div style="left:619px;top:452px;width:1px;height:1px;background:#ffffff;"></div>
<div style="left:620px;top:451px;width:1px;height:1px;background:#ffffff;"></div>
<div style="left:621px;top:450px;width:1px;height:1px;background:#ffffff;"></div>
<div style="left:622px;top:449px;width:1px;height:1px;background:#ffffff;"></div>
<div style="left:615px;top:457px;width:1px;height:1px;background:#808080;"></div>
<div style="left:616px;top:456px;width:1px;height:1px;background:#808080;"></div>
<div style="left:617px;top:455px;width:1px;height:1px;background:#808080;"></div>
<div style="left:618px;top:454px;width:1px;height:1px;background:#808080;"></div>
<div style="left:619px;top:453px;width:1px;height:1px;background:#808080;"></div>
<div style="left:620px;top:452px;width:1px;height:1px;background:#808080;"></div>
<div style="left:621px;top:451px;width:1px;height:1px;background:#808080;"></div>
<div style="left:622px;top:450px;width:1px;height:1px;background:#808080;"></div>
<div style="left:616px;top:457px;width:1px;height:1px;background:#808080;"></div>
<div style="left:617px;top:456px;width:1px;height:1px;background:#808080;"></div>
<div style="left:618px;top:455px;width:1px;height:1px;background:#808080;"></div>
<div style="left:619px;top:454px;width:1px;height:1px;background:#808080;"></div>
<div style="left:620px;top:453px;width:1px;height:1px;background:#808080;"></div>
<div style="left:621px;top:452px;width:1px;height:1px;background:#808080;"></div>
<div style="left:622px;top:451px;width:1px;height:1px;background:#808080;"></div>
<div style="left:618px;top:457px;width:1px;height:1px;background:#ffffff;"></div>
<div style="left:619px;top:456px;width:1px;height:1px;background:#ffffff;"></div>
<div style="left:620px;top:455px;width:1px;height:1px;background:#ffffff;"></div>
<div style="left:621px;top:454px;width:1px;height:1px;background:#ffffff;"></div>
<div style="left:622px;top:453px;width:1px;height:1px;background:#ffffff;"></div>
<div style="left:619px;top:457px;width:1px;height:1px;background:#808080;"></div>
<div style="left:620px;top:456px;width:1px;height:1px;background:#808080;"></div>
<div style="left:621px;top:455px;width:1px;height:1px;background:#808080;"></div>
<div style="left:622px;top:454px;width:1px;height:1px;background:#808080;"></div>
<div style="left:620px;top:457px;width:1px;height:1px;background:#808080;"></div>
<div style="left:621px;top:456px;width:1px;height:1px;background:#808080;"></div>
<div style="left:622px;top:455px;width:1px;height:1px;background:#808080;"></div>
</div></body></html>
